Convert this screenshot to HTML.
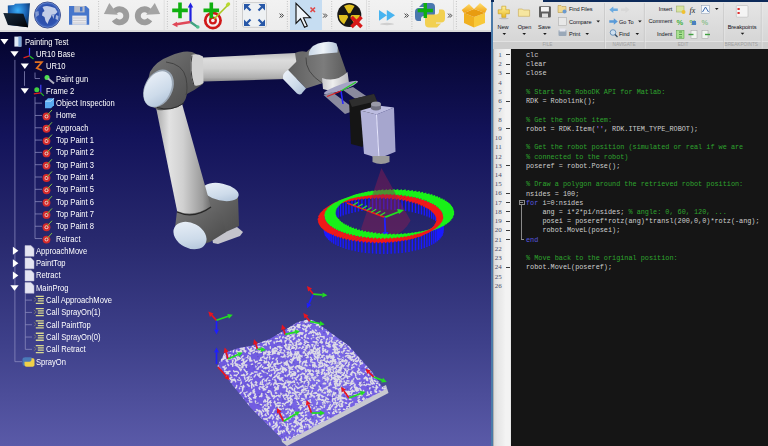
<!DOCTYPE html>
<html><head><meta charset="utf-8">
<style>
*{margin:0;padding:0;box-sizing:border-box}
html,body{width:768px;height:446px;overflow:hidden;background:#0a0a3c;font-family:"Liberation Sans",sans-serif;position:relative}
.abs{position:absolute}
#tb{left:0;top:0;width:491px;height:32px;background:#efefef}
#vp{left:0;top:32px;width:491px;height:414px;background:linear-gradient(#04042e 0%,#13135a 25%,#28296e 50%,#3e408a 75%,#5a5aa8 100%)}
.row{position:absolute;height:12px;line-height:12px;white-space:nowrap;color:#fff;font-size:9px;transform:scaleX(0.845);transform-origin:0 50%}
#ml{left:491px;top:0;width:277px;height:446px}
#mlstrip{left:5px;top:1.5px;width:275px;height:39px;background:linear-gradient(#ececec,#dadada)}
#gut{left:1.5px;top:48.8px;width:18.5px;height:398px;background:linear-gradient(90deg,#9a9a9a,#dcdcdc 8%,#e6e6e6 25%,#ececec 50%,#f3f3f3 70%,#f3f3f3 94%,#e0e0e0)}
#code{left:35px;top:51px;font-family:"Liberation Mono",monospace;font-size:6.83px;color:#cfcfcf;white-space:pre;line-height:9.236px}
.num{position:absolute;left:1.3px;width:9.5px;text-align:right;font-family:"Liberation Serif",serif;font-size:7px;line-height:10px;color:#4a4a66}
.c{color:#2ea42e}
.k{color:#5858e0}
.s{color:#c080ff}
</style></head><body>
<div class="abs" style="left:0;top:0;width:491px;height:32px;background:linear-gradient(#f2f2f2,#ececec)"></div><div class="abs" style="left:0;top:30px;width:491px;height:2px;background:#dcdcdc"></div><svg class="abs" style="left:0;top:0" width="491" height="32"><defs><radialGradient id="fb" cx="0.45" cy="0.3" r="0.8"><stop offset="0" stop-color="#3ab0f8"/><stop offset="0.5" stop-color="#1a60b0"/><stop offset="1" stop-color="#061830"/></radialGradient><linearGradient id="ff" x1="0" y1="0" x2="1" y2="1"><stop offset="0" stop-color="#1a2a3a"/><stop offset="0.6" stop-color="#0a1420"/><stop offset="1" stop-color="#000"/></linearGradient><radialGradient id="gl" cx="0.5" cy="0.5" r="0.55"><stop offset="0" stop-color="#2a4aa0"/><stop offset="0.7" stop-color="#2e52b0"/><stop offset="1" stop-color="#5a80d0"/></radialGradient><linearGradient id="gy" x1="0" y1="0" x2="0" y2="1"><stop offset="0" stop-color="#c8c8c8"/><stop offset="1" stop-color="#8a8a8a"/></linearGradient><linearGradient id="yb" x1="0" y1="0" x2="0" y2="1"><stop offset="0" stop-color="#ffe070"/><stop offset="1" stop-color="#f0a010"/></linearGradient></defs><path d="M98.6 1V29" stroke="#b8b8b8" stroke-width="0.8" stroke-dasharray="1 1.5"/><path d="M167.4 1V29" stroke="#b8b8b8" stroke-width="0.8" stroke-dasharray="1 1.5"/><path d="M236.3 1V29" stroke="#b8b8b8" stroke-width="0.8" stroke-dasharray="1 1.5"/><path d="M287.4 1V29" stroke="#b8b8b8" stroke-width="0.8" stroke-dasharray="1 1.5"/><path d="M331.7 1V29" stroke="#b8b8b8" stroke-width="0.8" stroke-dasharray="1 1.5"/><path d="M369 1V29" stroke="#b8b8b8" stroke-width="0.8" stroke-dasharray="1 1.5"/><path d="M411.9 1V29" stroke="#b8b8b8" stroke-width="0.8" stroke-dasharray="1 1.5"/><path d="M456.4 1V29" stroke="#b8b8b8" stroke-width="0.8" stroke-dasharray="1 1.5"/><path d="M164.2 0V30" stroke="#dadada" stroke-width="0.8"/><path d="M233.7 0V30" stroke="#dadada" stroke-width="0.8"/><path d="M366.5 0V30" stroke="#dadada" stroke-width="0.8"/><path d="M453.5 0V30" stroke="#dadada" stroke-width="0.8"/><path d="M7.8 5.5 L14 5 L15 3.8 L30 3.3 L28 27.3 L8 25 Z" fill="url(#fb)"/><path d="M3.3 13 L23.4 13.7 L28 27.3 L7.8 24.7 Z" fill="url(#ff)"/><circle cx="47.5" cy="15" r="13" fill="url(#gl)" stroke="#1a2a70" stroke-width="0.8"/><path d="M42.5 7 Q46 5.5 50 6.5 L55 8 L57.5 12 L55 14.5 L52 14 L51 17 L49 20 L47.5 24 L45.5 21 L44.5 17 L42 15.5 L42.5 12.5 L44.5 11 Z" fill="#d4dcee" opacity="0.9"/><path d="M51.5 14 L54.5 14.5 L53.5 19 Z M56 15 L58.5 16 L58 20 L55.5 19 Z" fill="#c8d2ea" opacity="0.8"/><path d="M35.5 12 L38.5 11 L39 15 L36 17 Z" fill="#b8c4e4" opacity="0.6"/><circle cx="47.5" cy="15" r="12.4" fill="none" stroke="#8aa8e0" stroke-width="0.8" opacity="0.6"/><path d="M69 6 L86 6 L89.2 9 L89.2 24.7 L69 24.7 Z" fill="#4676cc"/><rect x="74.2" y="6" width="10.4" height="6.4" fill="#b8bcc8"/><rect x="80" y="7" width="2.5" height="4.4" fill="#4676cc"/><rect x="72.3" y="15.6" width="14.3" height="9.1" fill="#e8e8ec"/><path d="M73 18h13M73 20.5h13M73 23h13" stroke="#c0c0c8" stroke-width="0.7"/><g id="undo"><path d="M114.64 11.56 A6.6 6.6 0 1 1 114.29 19.59" stroke="#9c9c9c" stroke-width="5.9" fill="none"/><path d="M103.9 14 L109.3 2.9 L117.9 14.7 Z" fill="#a4a4a4"/></g><use href="#undo" transform="translate(264.1 0) scale(-1 1)"/><path d="M180 2.6V18.2M172.2 10.4H187.8" stroke="#10b010" stroke-width="3.6"/><path d="M190.5 22 V5" stroke="#2020e0" stroke-width="2.2"/><path d="M190.5 2.4 L187.8 7.5 L193.2 7.5Z" fill="#2020e0"/><path d="M190.5 22 L175 24.5" stroke="#e04858" stroke-width="2.4"/><path d="M172 24.6 L177 21.8 L177.5 27.2Z" fill="#e04858"/><path d="M190.5 22 L197.5 27" stroke="#40a080" stroke-width="2.2"/><circle cx="197.8" cy="27" r="1.8" fill="#50c090"/><circle cx="212.9" cy="20.5" r="9" fill="#d01818"/><circle cx="212.9" cy="20.5" r="6.3" fill="#f4f0f0"/><circle cx="212.9" cy="20.5" r="4" fill="#d01818"/><circle cx="212.9" cy="20.5" r="1.8" fill="#f4f0f0"/><path d="M211.3 2.6V18.2M203.5 10.4H219.1" stroke="#10b010" stroke-width="3.6"/><path d="M214 19 L228 5" stroke="#a8c820" stroke-width="1.6"/><ellipse cx="228" cy="4.5" rx="2.5" ry="1.8" transform="rotate(-45 228 4.5)" fill="#b8d830"/><rect x="242.5" y="2.6" width="24" height="24.7" rx="2" fill="#eef1f3" stroke="#c4c4c4" stroke-width="0.8"/><path d="M244 4 h6.5 l-6.5 6.5Z M265 4 h-6.5 l6.5 6.5Z M244 26 h6.5 l-6.5 -6.5Z M265 26 h-6.5 l6.5 -6.5Z" fill="#2858a8"/><path d="M245.5 5.5 L250.5 10.5 M263.5 5.5 L258.5 10.5 M245.5 24.5 L250.5 19.5 M263.5 24.5 L258.5 19.5" stroke="#2858a8" stroke-width="2.2"/><path d="M279.6 13.6 l1.8 2 l-1.8 2 M281.6 13.6 l1.8 2 l-1.8 2" stroke="#303030" stroke-width="0.9" fill="none"/><path d="M323.2 13.6 l1.8 2 l-1.8 2 M325.2 13.6 l1.8 2 l-1.8 2" stroke="#303030" stroke-width="0.9" fill="none"/><path d="M404.6 13.6 l1.8 2 l-1.8 2 M406.6 13.6 l1.8 2 l-1.8 2" stroke="#303030" stroke-width="0.9" fill="none"/><path d="M448 13.6 l1.8 2 l-1.8 2 M450 13.6 l1.8 2 l-1.8 2" stroke="#303030" stroke-width="0.9" fill="none"/><rect x="290" y="0" width="32" height="30" fill="#c6ddf2"/><path d="M296 3.3 L296 23.4 L300.5 18.8 L304.5 27.3 L307.3 26 L303.5 17.8 L310.5 17.8 Z" fill="#eef4fa" stroke="#101010" stroke-width="1.1"/><path d="M310.5 7.5 L315 12 M315 7.5 L310.5 12" stroke="#e04848" stroke-width="1.6"/><circle cx="349.3" cy="15.1" r="12" fill="#161616"/><path d="M348.20 13.19 L344.05 6.01 A10.5 10.5 0 0 1 354.55 6.01 L350.40 13.19 Z M348.20 17.01 L344.05 24.19 A10.5 10.5 0 0 1 338.80 15.10 L347.10 15.10 Z M351.50 15.10 L359.80 15.10 A10.5 10.5 0 0 1 354.55 24.19 L350.40 17.01 Z " fill="#e0c020"/><path d="M351.5 17 L361.5 27 M361.5 17 L351.5 27" stroke="#d81818" stroke-width="3.6"/><path d="M379 9.9 L386.8 15.3 L379 20.8Z M386.8 9.9 L395 15.3 L386.8 20.8Z" fill="#48b4f0"/><ellipse cx="387" cy="24" rx="7" ry="1.2" fill="#cfcfcf"/><path d="M423 3 h8 q4 0 4 4 v6 q0 3 -3 3 h-8 q-3 0 -3 3 v2 h-3 q-3 0 -3 -4 v-5 q0 -4 4 -4 h5 v-1 h-5 Z" fill="#4a78b0"/><path d="M437 27.5 h-8 q-4 0 -4 -4 v-6 q0 -3 3 -3 h8 q3 0 3 -3 v-2 h3 q3 0 3 4 v5 q0 4 -4 4 h-5 v1 h5 Z" fill="#f2d050"/><path d="M425.3 2.9V18.1M417.7 10.5H432.9" stroke="#10b010" stroke-width="3.4"/><path d="M464 13 L474 17 L474 27.5 L464 23 Z" fill="#f0b020"/><path d="M474 17 L485 13 L485 23 L474 27.5 Z" fill="#f8c838"/><path d="M464 13 L474 9 L485 13 L474 17 Z" fill="#e89c10"/><path d="M464 13 L461.7 10 L469 4 L474 9 Z M485 13 L487 9 L480 3 L474 9 Z" fill="url(#yb)"/></svg>
<div id="vp" class="abs"></div>
<svg class="abs" style="left:0;top:0" width="491" height="446" viewBox="0 0 491 446">
<defs>
<linearGradient id="tubeH" x1="0" y1="0" x2="0" y2="1">
 <stop offset="0" stop-color="#bcbcbc"/><stop offset="0.25" stop-color="#dcdcdc"/><stop offset="0.55" stop-color="#d0d0d0"/><stop offset="0.85" stop-color="#b0b0b0"/><stop offset="1" stop-color="#8a8a8a"/>
</linearGradient>
<linearGradient id="tubeV" x1="0" y1="0" x2="1" y2="0">
 <stop offset="0" stop-color="#a6a6a6"/><stop offset="0.25" stop-color="#e2e2e2"/><stop offset="0.5" stop-color="#d0d0d0"/><stop offset="0.85" stop-color="#9a9a9a"/><stop offset="1" stop-color="#6c6c6c"/>
</linearGradient>
<linearGradient id="dark" x1="0" y1="0" x2="1" y2="1">
 <stop offset="0" stop-color="#7a7a7a"/><stop offset="0.5" stop-color="#606060"/><stop offset="1" stop-color="#484848"/>
</linearGradient>
<linearGradient id="cap" x1="0" y1="0" x2="1" y2="1">
 <stop offset="0" stop-color="#eef3fa"/><stop offset="0.6" stop-color="#cddbea"/><stop offset="1" stop-color="#a9bdd4"/>
</linearGradient>
<linearGradient id="w1" x1="0" y1="0" x2="0.3" y2="1"><stop offset="0" stop-color="#7a7a7a"/><stop offset="0.5" stop-color="#666"/><stop offset="1" stop-color="#4a4a4a"/></linearGradient>
<linearGradient id="w2" x1="0" y1="0" x2="1" y2="0"><stop offset="0" stop-color="#5e5e5e"/><stop offset="0.6" stop-color="#7c7c7c"/><stop offset="1" stop-color="#5a5a5a"/></linearGradient>
<linearGradient id="cap2" x1="0" y1="0" x2="1" y2="0"><stop offset="0" stop-color="#c8d6e6"/><stop offset="0.5" stop-color="#eef3f8"/><stop offset="1" stop-color="#b4c4d8"/></linearGradient>
<linearGradient id="fl" x1="0" y1="0" x2="1" y2="0"><stop offset="0" stop-color="#c8c8cc"/><stop offset="0.4" stop-color="#eeeeee"/><stop offset="1" stop-color="#b8b8bc"/></linearGradient>
<linearGradient id="boxL" x1="0" y1="0" x2="1" y2="0">
 <stop offset="0" stop-color="#b8b8dc"/><stop offset="1" stop-color="#d0d0ec"/>
</linearGradient>
<linearGradient id="cone" x1="0" y1="0" x2="0" y2="1">
 <stop offset="0" stop-color="#7a2a5a" stop-opacity="0.9"/><stop offset="1" stop-color="#6a2a6a" stop-opacity="0.6"/>
</linearGradient>
</defs><path d="M204 193 L238 197 L239 226 L225 233 L212 240 L200 243 L186 236 Z" fill="url(#dark)"/><path d="M212 238 L237 227 L243 232 L240 236 L218 244 L213 243 Z" fill="#c4c4cc"/><ellipse cx="221" cy="192" rx="18" ry="8.5" transform="rotate(12 221 192)" fill="url(#cap)"/><path d="M155.3 104 L182.1 104 L211 207 Q194 219 177.3 212 Z" fill="url(#tubeV)"/><path d="M177 211 Q194 218 211 206 L222 214 L226 232 L210 242 L196 246 L175 228 Z" fill="url(#dark)"/><path d="M177 212 Q194 219.5 211 207" stroke="#262626" stroke-width="1.3" fill="none"/><ellipse cx="190" cy="235.5" rx="17.5" ry="12.5" transform="rotate(28 190 235.5)" fill="url(#cap)"/><path d="M193 58 L301 52.8 L301 78.5 L195 81.8 Z" fill="url(#tubeH)"/><path d="M150 72 Q156 61 170 56 Q183 50 192 52 Q198 54 201 60 L203 84 Q195 90 187 94 Q185 104 178 107 Q168 111 158 110 Q147 104 145 92 Z" fill="url(#dark)"/><path d="M166 62 Q183 64 186 78 Q188 90 186 95" stroke="#3e3e3e" stroke-width="0.9" fill="none"/><path d="M191.5 55 Q197 53 203 56.5 L203.5 83 Q198 87 193.5 85 Q188.5 70 191.5 55 Z" fill="#d2d2d2"/><path d="M192 55.5 Q189 70 194 85.5" stroke="#3a3a3a" stroke-width="1" fill="none"/><path d="M157 107.5 Q171 112 184 103" stroke="#2a2a2a" stroke-width="1" fill="none"/><ellipse cx="158.5" cy="88.5" rx="14" ry="20" transform="rotate(27 158.5 88.5)" fill="#9aa6b4"/><ellipse cx="157.8" cy="89" rx="12.6" ry="18.8" transform="rotate(27 157.8 89)" fill="url(#cap)"/><path d="M295 53 Q301 50 307 52 L307 66 L297 66 Z" fill="#6a6a6a"/><path d="M288 70 L300 58 L308.5 50 Q322 39 337.5 46.5 L347.5 75 Q337 85 323 83 L306 88.5 Z" fill="url(#w2)"/><path d="M306 57.5 Q305 72 322 83" stroke="#3c3c3c" stroke-width="0.8" fill="none"/><path d="M288 70 Q282 73 283 79 L297 93.5 Q301 96 302.5 92.5 L306 88.5 Z" fill="url(#cap)"/><path d="M308.7 55.5 Q308.5 47 318 43.5 Q330 40 336.5 43.5 Q338.5 48 337.5 52.5 Q322 53.5 308.7 55.5 Z" fill="url(#cap2)"/><path d="M322 78 Q336 83 347.5 72 L349 83 Q338 94 323 89 Z" fill="url(#fl)"/><ellipse cx="341" cy="87.5" rx="18" ry="3" transform="rotate(-20 341 87.5)" fill="#a4a4c4"/><path d="M323.5 95 L332 92 L356 110 L345 114 Z M343 90 L353 87 L372 100 L364 105 Z" fill="#8a8a9e"/><path d="M341 91 L356 82" stroke="#20d020" stroke-width="1.3"/><path d="M341 91 L343 104" stroke="#2828ff" stroke-width="1.6"/><path d="M341 91 L327 96.5" stroke="#e02020" stroke-width="1.3"/><path d="M349 100 L374 94 L377 101 L362.5 147 L351 144 Z" fill="#151515"/><path d="M349 100 L374 94 L377 101 L352 107 Z" fill="#2e2e2e"/><path d="M360.5 110.5 L376.5 114.5 L379 158.5 L364 153.7 Z" fill="#b2b2d8"/><path d="M376.5 114.5 L394 107.5 L395.5 151.7 L379 158.5 Z" fill="#a6a6ce"/><path d="M360.5 110.5 L378 105.5 L394 107.5 L376.5 114.5 Z" fill="#bcbce0"/><path d="M376.5 114.5 L379 158.5" stroke="#e8e8ff" stroke-width="1"/><path d="M371 104 L371 109 Q376 112 381 109 L381 104 Z" fill="#707080"/><ellipse cx="376" cy="104" rx="5" ry="2.5" fill="#9a9aa8"/><path d="M372.5 156 L372.5 162 Q381 166 389.5 162 L389.5 156 Z" fill="#9a9a9a"/></svg><svg class="abs" style="left:0;top:0" width="491" height="446"><path d="M324.6 214.9l0 15.5M325.0 213.5l0 15.5M325.5 212.1l0 15.5M326.4 210.7l0 15.5M327.4 209.4l0 15.5M328.7 208.1l0 15.5M330.1 206.8l0 15.5M331.8 205.5l0 15.5M333.7 204.3l0 15.5M335.8 203.2l0 15.5M338.1 202.1l0 15.5M340.6 201.0l0 15.5M343.2 200.0l0 15.5M346.0 199.1l0 15.5M348.9 198.2l0 15.5M352.0 197.5l0 15.5M355.2 196.8l0 15.5M358.5 196.1l0 15.5M361.9 195.6l0 15.5M365.4 195.1l0 15.5M369.0 194.7l0 15.5M372.6 194.4l0 15.5M376.3 194.2l0 15.5M380.0 194.0l0 15.5M383.8 194.0l0 15.5M387.5 194.0l0 15.5M391.2 194.2l0 15.5M394.9 194.4l0 15.5M398.5 194.7l0 15.5M402.1 195.1l0 15.5M405.6 195.6l0 15.5M409.0 196.1l0 15.5M412.3 196.8l0 15.5M415.5 197.5l0 15.5M418.6 198.2l0 15.5M421.5 199.1l0 15.5M424.3 200.0l0 15.5M426.9 201.0l0 15.5M429.4 202.1l0 15.5M431.7 203.2l0 15.5M433.8 204.3l0 15.5M435.7 205.5l0 15.5M437.4 206.8l0 15.5M438.8 208.1l0 15.5M440.1 209.4l0 15.5M441.1 210.7l0 15.5M442.0 212.1l0 15.5M442.5 213.5l0 15.5M442.9 214.9l0 15.5" stroke="#1a1aff" stroke-width="1.4"/><path d="M324.6 214.9l-6.5 4M325.0 213.5l-6.5 4M325.5 212.1l-6.5 4M326.4 210.7l-6.5 4M327.4 209.4l-6.5 4M328.7 208.1l-6.5 4M330.1 206.8l-6.5 4M331.8 205.5l-6.5 4M333.7 204.3l-6.5 4M335.8 203.2l-6.5 4M338.1 202.1l-6.5 4M340.6 201.0l-6.5 4M343.2 200.0l-6.5 4M346.0 199.1l-6.5 4M348.9 198.2l-6.5 4M352.0 197.5l-6.5 4M355.2 196.8l-6.5 4M358.5 196.1l-6.5 4M361.9 195.6l-6.5 4M365.4 195.1l-6.5 4M369.0 194.7l-6.5 4M372.6 194.4l-6.5 4M376.3 194.2l-6.5 4M380.0 194.0l-6.5 4M383.8 194.0l-6.5 4M387.5 194.0l-6.5 4M391.2 194.2l-6.5 4M394.9 194.4l-6.5 4M398.5 194.7l-6.5 4M402.1 195.1l-6.5 4M405.6 195.6l-6.5 4M409.0 196.1l-6.5 4M412.3 196.8l-6.5 4M415.5 197.5l-6.5 4M418.6 198.2l-6.5 4M421.5 199.1l-6.5 4M424.3 200.0l-6.5 4M426.9 201.0l-6.5 4M429.4 202.1l-6.5 4M431.7 203.2l-6.5 4M433.8 204.3l-6.5 4M435.7 205.5l-6.5 4M437.4 206.8l-6.5 4M438.8 208.1l-6.5 4M440.1 209.4l-6.5 4M441.1 210.7l-6.5 4M442.0 212.1l-6.5 4M442.5 213.5l-6.5 4M442.9 214.9l-6.5 4" stroke="#f01818" stroke-width="2.2"/><path d="M324.6 214.9l11 -4M325.0 213.5l11 -4M325.5 212.1l11 -4M326.4 210.7l11 -4M327.4 209.4l11 -4M328.7 208.1l11 -4M330.1 206.8l11 -4M331.8 205.5l11 -4M333.7 204.3l11 -4M335.8 203.2l11 -4M338.1 202.1l11 -4M340.6 201.0l11 -4M343.2 200.0l11 -4M346.0 199.1l11 -4M348.9 198.2l11 -4M352.0 197.5l11 -4M355.2 196.8l11 -4M358.5 196.1l11 -4M361.9 195.6l11 -4M365.4 195.1l11 -4M369.0 194.7l11 -4M372.6 194.4l11 -4M376.3 194.2l11 -4M380.0 194.0l11 -4M383.8 194.0l11 -4M387.5 194.0l11 -4M391.2 194.2l11 -4M394.9 194.4l11 -4M398.5 194.7l11 -4M402.1 195.1l11 -4M405.6 195.6l11 -4M409.0 196.1l11 -4M412.3 196.8l11 -4M415.5 197.5l11 -4M418.6 198.2l11 -4M421.5 199.1l11 -4M424.3 200.0l11 -4M426.9 201.0l11 -4M429.4 202.1l11 -4M431.7 203.2l11 -4M433.8 204.3l11 -4M435.7 205.5l11 -4M437.4 206.8l11 -4M438.8 208.1l11 -4M440.1 209.4l11 -4M441.1 210.7l11 -4M442.0 212.1l11 -4M442.5 213.5l11 -4M442.9 214.9l11 -4" stroke="#18f018" stroke-width="2.2"/><path d="M381.4 168 L361 229 Q372 242 390 238 Q405 232 410.6 220.5 Z" fill="#901c50" opacity="0.45"/><path d="M384.7 217.3 L347 203" stroke="#f01818" stroke-width="1.6"/><path d="M380.2 215.6l5 -3M375.7 213.9l5 -3M371.1 212.2l5 -3M366.6 210.4l5 -3M362.1 208.7l5 -3M357.6 207.0l5 -3M353.0 205.3l5 -3" stroke="#30e030" stroke-width="1.2"/><path d="M384.7 217.3 L401 211" stroke="#20e020" stroke-width="1.8"/><path d="M404 210 L397 209 L399 214 Z" fill="#20e020"/><path d="M384.7 217.3 L385.5 236" stroke="#2020ff" stroke-width="1.8"/><path d="M385.7 239 L382.5 232 L388.5 232 Z" fill="#2020ff"/><path d="M443.0 216.2l0 15.5M442.9 217.6l0 15.5M442.5 219.0l0 15.5M442.0 220.4l0 15.5M441.1 221.8l0 15.5M440.1 223.1l0 15.5M438.8 224.4l0 15.5M437.4 225.7l0 15.5M435.7 227.0l0 15.5M433.8 228.2l0 15.5M431.7 229.3l0 15.5M429.4 230.4l0 15.5M426.9 231.5l0 15.5M424.3 232.5l0 15.5M421.5 233.4l0 15.5M418.6 234.3l0 15.5M415.5 235.0l0 15.5M412.3 235.7l0 15.5M409.0 236.4l0 15.5M405.6 236.9l0 15.5M402.1 237.4l0 15.5M398.5 237.8l0 15.5M394.9 238.1l0 15.5M391.2 238.3l0 15.5M387.5 238.5l0 15.5M383.8 238.5l0 15.5M380.0 238.5l0 15.5M376.3 238.3l0 15.5M372.6 238.1l0 15.5M369.0 237.8l0 15.5M365.4 237.4l0 15.5M361.9 236.9l0 15.5M358.5 236.4l0 15.5M355.2 235.7l0 15.5M352.0 235.0l0 15.5M348.9 234.3l0 15.5M346.0 233.4l0 15.5M343.2 232.5l0 15.5M340.6 231.5l0 15.5M338.1 230.4l0 15.5M335.8 229.3l0 15.5M333.7 228.2l0 15.5M331.8 227.0l0 15.5M330.1 225.7l0 15.5M328.7 224.4l0 15.5M327.4 223.1l0 15.5M326.4 221.8l0 15.5M325.5 220.4l0 15.5M325.0 219.0l0 15.5M324.6 217.6l0 15.5M324.5 216.2l0 15.5" stroke="#1a1aff" stroke-width="1.4"/><path d="M443.0 216.2l11 -4M442.9 217.6l11 -4M442.5 219.0l11 -4M442.0 220.4l11 -4M441.1 221.8l11 -4M440.1 223.1l11 -4M438.8 224.4l11 -4M437.4 225.7l11 -4M435.7 227.0l11 -4M433.8 228.2l11 -4M431.7 229.3l11 -4M429.4 230.4l11 -4M426.9 231.5l11 -4M424.3 232.5l11 -4M421.5 233.4l11 -4M418.6 234.3l11 -4M415.5 235.0l11 -4M412.3 235.7l11 -4M409.0 236.4l11 -4M405.6 236.9l11 -4M402.1 237.4l11 -4M398.5 237.8l11 -4M394.9 238.1l11 -4M391.2 238.3l11 -4M387.5 238.5l11 -4M383.8 238.5l11 -4M380.0 238.5l11 -4M376.3 238.3l11 -4M372.6 238.1l11 -4M369.0 237.8l11 -4M365.4 237.4l11 -4M361.9 236.9l11 -4M358.5 236.4l11 -4M355.2 235.7l11 -4M352.0 235.0l11 -4M348.9 234.3l11 -4M346.0 233.4l11 -4M343.2 232.5l11 -4M340.6 231.5l11 -4M338.1 230.4l11 -4M335.8 229.3l11 -4M333.7 228.2l11 -4M331.8 227.0l11 -4M330.1 225.7l11 -4M328.7 224.4l11 -4M327.4 223.1l11 -4M326.4 221.8l11 -4M325.5 220.4l11 -4M325.0 219.0l11 -4M324.6 217.6l11 -4M324.5 216.2l11 -4" stroke="#18f018" stroke-width="2.2"/><path d="M443.0 216.2l-6.5 4M442.9 217.6l-6.5 4M442.5 219.0l-6.5 4M442.0 220.4l-6.5 4M441.1 221.8l-6.5 4M440.1 223.1l-6.5 4M438.8 224.4l-6.5 4M437.4 225.7l-6.5 4M435.7 227.0l-6.5 4M433.8 228.2l-6.5 4M431.7 229.3l-6.5 4M429.4 230.4l-6.5 4M426.9 231.5l-6.5 4M424.3 232.5l-6.5 4M421.5 233.4l-6.5 4M418.6 234.3l-6.5 4M415.5 235.0l-6.5 4M412.3 235.7l-6.5 4M409.0 236.4l-6.5 4M405.6 236.9l-6.5 4M402.1 237.4l-6.5 4M398.5 237.8l-6.5 4M394.9 238.1l-6.5 4M391.2 238.3l-6.5 4M387.5 238.5l-6.5 4M383.8 238.5l-6.5 4M380.0 238.5l-6.5 4M376.3 238.3l-6.5 4M372.6 238.1l-6.5 4M369.0 237.8l-6.5 4M365.4 237.4l-6.5 4M361.9 236.9l-6.5 4M358.5 236.4l-6.5 4M355.2 235.7l-6.5 4M352.0 235.0l-6.5 4M348.9 234.3l-6.5 4M346.0 233.4l-6.5 4M343.2 232.5l-6.5 4M340.6 231.5l-6.5 4M338.1 230.4l-6.5 4M335.8 229.3l-6.5 4M333.7 228.2l-6.5 4M331.8 227.0l-6.5 4M330.1 225.7l-6.5 4M328.7 224.4l-6.5 4M327.4 223.1l-6.5 4M326.4 221.8l-6.5 4M325.5 220.4l-6.5 4M325.0 219.0l-6.5 4M324.6 217.6l-6.5 4M324.5 216.2l-6.5 4" stroke="#f01818" stroke-width="2.2"/></svg><svg class="abs" style="left:0;top:0" width="491" height="446"><defs><linearGradient id="wp" x1="0" y1="0" x2="1" y2="0.2"><stop offset="0" stop-color="#6c56dc"/><stop offset="0.4" stop-color="#735ee2"/><stop offset="0.7" stop-color="#7a68e6"/><stop offset="1" stop-color="#735ee2"/></linearGradient><filter id="bl" x="-5%" y="-5%" width="110%" height="110%"><feGaussianBlur stdDeviation="0.55"/></filter><clipPath id="wpc"><path id="wpp" d="M217.4 366 L224.5 353 L237.9 348.3 L253 345.5 L270 338.8 L281.7 332 L297 322.6 L306.4 319.8 L313 320 L349 346 L372 372 L382 386.8 L386.8 388.4 L287 441 L283.6 440.8 L250.9 408 Z"/></clipPath></defs><path d="M281 437 L386 385 L388.5 393 L287 446 L282 442 Z" fill="#c8c8d0"/><use href="#wpp" fill="url(#wp)"/><g clip-path="url(#wpc)"><path d="M227.7 386.6l1.4 0.5M221.6 373.5l2.1 1.3M325.4 392.6l-0.9 -0.5M265.7 336.5l-0.5 1.4M233.0 391.1l0.8 0.6M376.6 364.3l0.6 1.4M227.8 383.5l-1.4 2.1M288.8 441.1l-1.9 -0.7M354.5 326.8l-0.1 1.0M388.8 423.2l-1.5 1.3M218.9 377.1l0.7 0.7M244.1 369.4l1.6 1.9M366.2 353.6l-1.6 1.9M382.6 337.3l0.2 1.5M217.1 424.4l-0.3 1.5M323.1 404.6l2.0 -1.5M284.7 368.4l-1.2 0.9M226.8 344.7l-0.5 0.8M381.1 396.6l0.7 2.4M241.0 350.3l-0.7 0.8M299.1 357.9l-0.0 -2.0M250.9 439.9l-0.4 -0.9M373.9 363.5l-1.9 -0.5M347.7 343.0l-1.2 0.9M248.9 395.5l0.7 -1.9M382.1 364.7l0.2 1.5M298.0 438.0l-1.0 -0.3M367.6 423.7l-0.0 2.0M302.7 415.8l-1.4 -0.4M359.7 430.4l0.6 0.8M350.8 337.2l-0.7 -0.7M312.4 359.7l-0.9 -0.3M369.6 325.3l1.0 0.3M380.1 425.5l1.8 1.7M270.3 403.9l0.5 1.9M352.2 432.8l-0.4 -2.0M274.3 343.1l-0.2 -1.0M282.3 384.2l1.0 -0.2M233.3 352.0l0.4 -2.0M308.9 383.9l-0.9 1.8M256.7 332.0l1.4 0.5M386.2 383.8l-2.4 0.8M384.8 357.4l0.2 1.5M285.8 362.5l0.7 0.7M336.2 323.8l-0.1 1.0M269.2 363.6l-1.8 1.7M263.8 402.0l0.2 -1.0M222.3 320.9l0.2 1.5M336.3 347.4l1.3 1.5M256.1 414.8l-1.5 -2.0M301.4 367.0l-0.4 -0.9M323.0 400.3l1.2 1.6M385.2 330.7l-2.0 0.1M296.3 377.7l1.2 -0.9M375.4 437.1l1.7 1.1M293.9 356.6l-1.1 1.7M236.2 360.4l-1.3 2.1M372.8 355.1l-0.8 0.6M278.1 372.8l1.0 0.3M286.9 396.7l1.7 -1.8M223.6 436.6l-2.0 0.3M329.2 370.0l-2.5 0.3M236.0 400.3l-2.5 -0.0M311.3 376.0l0.1 -2.5M239.4 342.6l-0.5 0.8M282.0 413.5l-0.1 1.0M302.2 391.5l-0.6 -1.4M328.0 373.3l0.4 -0.9M307.4 377.9l0.3 -1.5M221.9 418.1l1.8 -1.0M291.6 415.8l-0.5 1.4M298.2 348.1l1.9 -0.5M328.3 328.4l-1.8 0.9M254.7 322.4l-2.2 1.2M269.6 423.0l0.4 2.0M287.7 408.9l-1.9 0.6M281.3 365.9l0.5 0.9M228.7 328.3l1.1 -1.0M281.5 416.4l0.3 -0.9M223.6 378.6l1.3 -0.7M325.5 349.7l-2.1 1.4M270.4 353.3l0.0 -1.0M321.3 360.0l-0.6 0.8M304.6 368.1l-0.8 0.5M299.3 387.7l-0.9 0.4M387.9 351.9l2.1 1.4M388.0 442.4l1.7 1.9M363.2 403.0l1.1 -1.7M263.9 352.3l-0.2 2.5M258.3 349.4l1.1 -1.0M329.3 444.8l-1.5 0.2M362.1 435.0l-0.3 1.0M339.2 362.8l-0.5 0.8M329.0 344.0l-0.9 1.8M247.4 358.0l0.7 -2.4M226.1 331.0l-1.0 -0.3M329.3 368.9l2.0 -0.1M369.6 371.0l0.2 -2.0M327.8 368.0l2.3 -0.9M327.1 434.5l-1.4 -1.4M344.0 340.0l0.8 1.3M355.8 441.8l0.7 0.7M385.7 379.8l2.2 -1.1M323.7 396.7l-1.5 0.3M222.3 438.1l-1.0 1.2M221.7 425.3l-1.6 -1.2M328.6 357.5l-1.5 1.3M293.2 374.1l-1.8 -1.7M285.1 326.6l-1.7 1.9M303.3 402.1l1.4 1.5M351.1 383.5l-2.5 -0.1M329.2 418.4l0.9 0.4M382.4 435.3l0.4 -1.5M242.8 432.8l0.6 -1.4M318.6 396.8l-1.0 1.1M333.9 432.6l0.2 -1.0M335.5 432.7l-2.4 -0.6M344.1 365.5l-1.0 1.1M278.0 415.9l0.4 0.9M266.9 384.1l2.0 -0.4M343.3 413.6l-0.6 2.4M288.1 364.6l-1.0 0.1M218.9 318.3l1.6 1.2M308.5 370.9l1.3 1.5M324.2 378.8l1.4 -0.6M338.8 375.7l1.2 1.6M285.3 351.8l-1.2 -1.6M305.6 381.1l1.0 0.0M308.0 370.0l0.9 0.4M245.6 357.6l2.4 0.7M294.2 346.9l0.1 1.0M380.0 351.7l-1.6 -1.9M229.9 383.0l1.2 -0.8M380.3 413.5l1.5 -1.4M308.9 378.4l1.0 0.0M228.6 434.6l1.0 0.2M337.6 322.0l-0.6 -0.8M337.0 412.3l-1.7 -1.1M339.5 367.1l0.3 1.0M265.3 330.8l0.1 -1.5M266.5 361.1l-1.2 1.6M220.5 384.4l-1.0 0.2M230.9 422.9l1.5 0.0M265.5 414.1l-0.6 0.8M301.0 420.0l-2.0 0.1M313.2 331.4l2.1 1.4M328.0 365.6l-1.3 0.7M281.4 431.1l-1.0 0.2M276.0 359.8l1.1 -1.7M316.4 334.1l1.1 -1.0M243.8 402.2l0.9 1.2M249.3 399.7l0.7 2.4M266.8 320.8l-0.1 -1.0M269.8 398.4l-2.2 1.2M339.8 398.6l-2.2 1.2M373.9 331.6l0.3 1.5M286.8 439.3l-1.0 -2.3M322.5 399.6l-0.7 0.7M337.2 363.1l0.4 2.5M379.5 385.5l0.8 -2.4M227.1 420.2l-0.9 -1.2M356.0 420.3l-1.1 -1.6M373.5 418.4l0.5 -0.9M330.0 344.8l-0.3 1.0M316.2 427.3l-1.4 0.4M326.4 356.0l0.2 1.0M312.1 351.9l1.6 1.9M337.6 349.6l-0.8 -0.6M302.1 356.0l-0.9 0.4M389.8 421.5l-1.5 0.1M274.3 428.3l-1.5 0.2M264.7 361.8l1.9 0.7M303.2 352.8l2.5 -0.4M353.6 360.4l-0.3 1.0M370.0 387.8l-0.3 1.0M310.1 366.1l-0.5 -0.9M348.5 331.0l1.0 0.2M375.0 401.9l0.9 -1.8M313.4 351.0l-1.8 0.9M336.7 369.8l-0.6 -1.4M298.2 370.8l-0.9 -1.2M365.2 345.9l-2.0 0.3M295.6 437.3l1.0 -0.2M358.0 328.2l-0.2 -1.5M235.4 440.1l0.8 -2.4M352.3 390.6l1.9 0.7M367.2 410.9l1.2 1.6M317.3 443.0l-1.9 1.6M264.6 318.2l-0.9 0.5M341.4 443.7l2.3 0.9M296.4 344.4l0.0 -2.5M298.4 393.4l0.5 1.4M366.6 365.6l1.7 1.0M319.5 362.1l1.0 0.1M318.8 395.9l1.1 -1.7M250.2 341.1l1.9 0.6M388.6 346.4l-0.1 2.0M225.4 388.8l1.7 -1.0M387.4 325.1l0.0 -1.5M333.5 356.2l0.0 -1.0M297.4 365.6l-1.8 1.8M244.5 348.5l-0.4 -0.9M242.5 424.6l-1.5 -1.4M325.0 375.9l1.1 -2.2M235.2 364.9l-0.1 -1.5M339.9 388.8l1.4 -1.5M288.2 349.6l-1.8 -0.9M270.7 433.6l1.0 -0.1M313.0 424.9l0.1 -2.0M290.6 351.5l0.2 2.5M265.7 432.7l-0.3 -2.0M303.9 383.4l0.5 -1.9M253.2 391.1l0.6 1.4M339.5 343.2l2.1 1.3M348.2 340.4l-0.7 -1.3M317.0 343.9l-0.3 -2.5M384.5 327.1l0.1 2.0M372.2 355.3l-0.3 -2.5M218.6 441.8l0.4 0.9M296.2 348.5l-0.6 0.8M340.5 323.8l-2.0 0.1M309.8 347.1l-1.2 -2.2M379.1 367.8l0.5 -0.8M274.2 348.8l-1.8 0.8M357.6 426.5l-2.0 -0.2M278.8 385.9l-0.9 0.4M254.5 371.9l2.5 -0.0M261.5 404.8l-1.0 -0.3M323.7 350.1l-0.9 0.4M304.9 352.4l-1.5 -0.3M375.2 391.9l-0.2 -2.0M297.1 357.7l0.4 2.5M243.4 439.9l-0.9 1.8M264.8 444.4l0.2 -1.5M311.4 395.6l-1.4 -2.1M263.4 425.4l1.5 -2.0M338.1 370.9l-0.8 0.5M321.3 366.6l-1.9 0.5M363.7 381.9l0.8 1.8M355.5 373.8l0.2 2.0M374.4 319.4l-2.3 -1.0M267.5 386.7l-1.8 -1.7M306.9 330.7l-1.2 0.9M359.6 383.6l1.6 -1.2M288.7 338.0l-1.5 -0.1M341.5 406.5l1.0 0.0M375.5 368.9l1.0 0.1M233.7 330.8l-2.5 -0.4M322.3 421.2l2.0 0.2M240.2 348.5l1.0 0.2M365.4 439.3l0.9 2.3M348.7 323.6l0.1 1.5M301.7 439.6l-1.2 1.0M218.9 429.1l1.2 2.2M247.6 442.4l-0.9 -0.4M273.6 429.6l-0.6 -0.8M282.8 377.8l-1.8 0.8M331.2 361.7l-0.3 -1.0M257.0 365.1l-1.2 0.8M267.0 378.9l0.9 -1.2M285.7 383.3l0.0 -1.0M269.4 367.9l0.7 1.3M271.2 402.8l-1.9 -0.8M355.9 415.1l-0.2 -1.0M238.1 353.4l-0.9 -1.8M296.0 446.0l0.8 -0.6M343.5 409.2l1.5 0.4M290.4 414.9l-0.1 -2.0M334.2 322.8l0.3 -2.0M237.3 415.5l-0.6 -1.9M244.4 362.4l-1.0 -1.1M292.9 437.8l-0.5 1.4M317.8 348.8l1.8 1.7M360.5 332.7l-1.0 1.2M222.6 432.7l1.5 1.3M293.4 332.5l-2.0 0.4M265.7 389.4l-2.5 0.5M313.6 331.9l-1.4 0.6M352.2 359.2l1.7 1.1M259.0 349.5l2.5 0.4M361.9 355.9l-1.0 -1.1M232.9 410.0l-1.9 -1.7M247.3 423.6l-1.4 1.5M361.6 350.5l2.0 1.6M302.4 338.2l-0.9 -0.5M239.8 347.1l-1.6 -1.9M248.4 410.5l1.4 -2.1M240.1 327.2l-0.5 -1.9M245.8 410.8l2.0 0.1M314.3 378.0l-2.5 -0.3M321.6 356.0l2.4 -0.7M380.1 364.1l-1.9 0.7M254.6 391.3l-1.0 -0.1M248.5 378.8l-0.7 0.7M285.8 324.0l-0.4 -1.4M295.4 333.4l0.8 -0.5M375.6 429.5l-0.1 -2.0M355.7 412.2l-0.1 1.5M361.7 392.4l1.0 0.1M227.9 351.1l2.3 -1.0M361.3 393.3l2.0 -0.0M381.0 319.8l1.5 2.0M367.8 420.5l1.0 2.3M305.5 364.2l-0.6 1.4M318.1 323.6l-1.6 1.9M240.1 367.2l2.0 -0.1M325.8 399.2l-0.3 1.5M304.1 399.3l-2.4 -0.8M332.5 369.8l0.2 -1.5M384.0 327.4l1.3 -0.7M376.3 425.3l0.9 1.8M256.5 320.6l-1.9 0.6M366.2 401.0l-0.2 -1.5M368.2 361.7l0.4 0.9M327.0 436.1l-0.5 0.9M223.0 398.2l-2.5 0.1M260.0 377.3l1.8 -0.9M272.6 330.0l0.6 0.8M277.6 364.3l-0.6 -1.4M330.0 395.0l-0.1 -2.0M357.4 379.1l-1.5 -2.0M312.9 364.3l-0.3 2.0M254.9 414.8l1.5 0.3M236.4 387.5l0.3 -2.0M379.5 364.8l0.7 1.3M292.3 428.1l2.1 -1.3M233.9 411.9l-1.5 -2.0M333.0 362.9l-1.8 1.8M380.4 398.3l-0.0 2.0M339.1 349.0l-1.1 2.2M252.9 390.9l1.3 -1.5M382.0 335.5l0.8 0.5M300.0 432.0l-1.0 -2.3M364.0 412.1l0.4 -2.5M267.1 321.1l1.0 -0.2M331.4 368.8l1.2 -0.9M250.2 398.3l1.0 1.1M223.5 432.4l1.9 1.6M384.9 385.3l0.2 1.5M385.1 346.7l-0.3 -1.0M261.3 326.8l-2.5 -0.1M353.2 439.8l-0.5 0.9M340.6 369.1l-1.3 0.7M282.7 367.3l0.6 0.8M359.5 402.9l-0.7 -0.7M270.2 442.4l-0.1 -2.5M281.3 409.2l-2.0 -0.3M376.7 416.0l1.1 -1.7M306.4 379.0l1.3 1.6M371.5 429.1l-1.8 1.7M236.5 337.7l1.6 1.2M331.0 384.9l-1.0 -1.7M279.2 384.6l-1.4 1.5M306.9 381.2l1.4 1.4M323.1 365.6l-1.9 0.7M290.4 395.8l0.1 1.5M372.7 414.9l-2.1 -1.4M389.1 340.6l-1.2 0.9M344.6 369.4l-0.9 -1.8M349.6 416.5l0.2 1.0M363.4 345.6l0.7 -1.3M339.4 379.8l-0.9 -2.3M362.6 335.9l1.4 0.5M334.2 357.3l-1.8 1.7M364.9 350.9l1.9 0.6M239.7 437.1l-1.0 0.3M342.6 319.1l1.9 -0.6M250.7 344.0l0.6 -0.8M223.6 428.4l-1.2 -0.9M305.3 377.6l0.8 0.5M287.6 402.3l2.1 -1.4M222.3 425.0l0.2 2.0M338.7 410.1l-0.1 1.5M283.5 322.2l-1.0 -1.2M329.6 406.9l0.9 1.2M290.2 404.9l0.5 -0.9M374.8 343.7l-0.3 0.9M267.5 392.3l1.5 0.0M380.3 402.0l-1.2 2.2M299.2 360.2l1.5 1.3M345.7 332.5l-0.8 0.6M220.9 383.7l-0.9 -1.2M287.7 425.2l-0.2 -1.5M277.9 402.8l2.5 0.1M268.1 351.4l0.1 1.5M301.8 386.6l-1.5 0.3M314.5 323.4l1.9 -0.6M285.7 344.0l0.1 1.5M241.9 351.8l-0.8 0.6M266.1 432.0l-1.3 -0.7M358.4 423.1l-0.5 0.9M295.8 435.9l2.3 -0.9M240.9 383.5l0.4 -1.4M339.0 326.6l0.7 -0.7M346.5 399.5l-1.4 -1.4M332.7 413.4l0.9 -1.8M334.9 408.9l0.4 -2.0M359.5 370.0l-1.2 -1.6M286.9 356.3l-1.0 -0.3M266.1 329.3l-0.8 -2.4M286.3 386.9l0.2 1.0M280.7 432.8l-0.7 1.3M243.4 385.5l0.7 1.3M294.5 421.6l-0.6 0.8M272.9 352.1l-0.9 2.4M379.1 421.5l-1.4 -2.1M278.7 443.0l0.5 -0.9M221.1 359.6l1.9 -0.6M266.0 387.7l1.0 -0.1M355.9 404.6l1.9 -0.5M335.9 353.5l-0.9 -0.5M353.9 362.4l-1.0 -0.1M243.4 412.5l-0.4 0.9M278.0 406.8l1.9 -1.6M249.5 359.1l1.6 1.3M324.0 382.2l1.1 1.7M236.2 375.6l-2.0 -0.4M276.9 438.3l0.0 1.0M377.8 339.2l-0.2 -1.0M344.9 361.7l0.7 -1.9M366.4 409.2l-0.2 -2.5M332.1 433.4l-0.5 0.8M376.8 326.5l-1.3 -0.7M316.1 369.7l-0.2 1.5M338.2 396.4l1.8 0.8M321.3 433.7l-0.6 0.8M278.0 407.5l1.1 -1.7M318.3 394.2l-2.4 -0.6M253.1 419.6l0.5 -0.8M262.9 329.5l-1.9 1.6M355.7 441.1l1.0 -0.1M327.3 391.7l2.5 -0.5M248.4 396.8l0.8 1.3M228.4 432.9l0.3 -1.5M313.9 358.4l1.2 0.9M336.0 371.9l-0.2 -1.0M275.0 427.8l1.9 -1.7M298.3 423.2l1.6 1.3M303.9 344.8l1.5 0.2M291.4 411.7l0.9 -2.3M238.4 319.6l-2.1 -1.3M230.1 417.9l-0.9 -0.4M216.3 344.2l0.7 -0.7M318.5 334.2l-2.4 0.7M235.7 381.7l-0.5 -1.4M257.5 434.2l2.5 0.0M326.8 435.7l0.6 0.8M369.4 330.4l-2.0 -0.4M265.9 368.8l-0.0 -1.0M387.1 329.5l-0.7 1.9M349.5 318.9l1.1 1.0M306.0 376.3l-1.1 -1.0M290.4 430.4l2.3 -0.9M363.1 321.6l0.8 1.3M346.7 353.1l-0.9 0.5M274.6 387.6l0.4 -0.9M354.1 386.1l0.9 -1.8M289.4 361.1l1.8 1.7M230.7 345.2l0.8 -0.6M340.0 373.2l2.4 -0.8M264.8 368.0l1.0 -0.2M336.0 344.8l1.5 -0.3M268.2 326.2l2.0 0.2M365.7 377.0l0.7 2.4M355.5 403.9l1.5 0.1M330.8 357.9l2.4 0.7M329.1 390.9l0.9 0.4M277.2 387.4l-1.4 1.5M367.7 434.4l0.1 -1.0M254.2 342.8l-1.5 1.3M257.2 432.3l1.0 0.0M331.1 425.1l2.5 0.5M301.1 369.8l1.3 -0.7M289.5 325.8l-0.3 2.5M306.8 348.7l1.0 -1.1M380.6 418.5l0.7 -1.9M350.2 403.0l-1.6 1.9M372.8 328.5l2.4 0.6M385.7 425.4l-0.6 1.4M217.2 439.4l-2.5 0.4M248.7 378.2l0.4 -2.0M254.6 441.0l-1.7 1.1M298.1 388.1l-0.1 1.0M389.7 335.3l0.0 -1.5M224.0 435.1l2.0 0.2M227.3 414.4l0.6 0.8M329.3 383.6l0.1 2.0M372.3 441.2l1.8 0.9M259.7 348.3l-1.0 -0.1M279.9 408.7l-2.0 0.1M237.3 346.5l-0.1 1.0M328.1 378.1l-1.0 1.7M275.4 415.1l0.4 -0.9M235.5 398.6l-1.4 -0.5M249.4 416.1l-0.0 1.0M318.0 343.4l-2.0 -0.4M230.0 349.9l0.7 1.3M384.7 337.0l-2.0 -0.3M273.3 436.7l-0.1 1.0M324.2 407.2l0.5 -1.9M274.8 380.9l0.9 -0.4M266.7 320.1l2.2 1.1M231.5 393.0l-0.7 -2.4M353.5 347.6l-1.3 -2.1M233.9 399.1l-0.1 2.5M306.3 360.5l0.1 1.0M260.6 338.1l0.3 -2.0M284.4 384.9l0.3 -2.0M295.8 343.3l-2.0 -0.1M335.0 379.0l0.9 0.5M324.2 374.0l0.5 -1.4M351.5 410.8l2.4 0.8M230.4 436.1l0.9 -1.2M226.1 405.6l-1.1 -1.7M291.5 329.0l0.8 0.6M307.8 407.6l1.0 -2.3M289.5 361.3l0.0 1.0M341.0 367.5l0.8 1.8M347.8 368.3l0.3 -1.5M304.8 420.7l-1.5 -0.1M385.8 396.8l-0.3 -2.0M334.5 402.4l1.5 0.0M261.5 364.8l-1.5 2.0M264.7 438.7l-0.7 -1.3M358.0 400.5l1.2 -1.0M347.1 422.1l-1.4 -2.1M291.5 357.3l-0.2 -1.0M351.9 429.3l-0.8 1.3M373.0 321.3l-1.9 -1.7M344.7 343.4l-2.0 1.4M251.4 364.4l1.0 -0.3M329.6 390.8l-0.9 -0.4M340.6 373.0l-2.0 -0.3M228.5 371.4l1.5 -0.1M301.0 414.3l1.7 -1.8M347.9 429.2l1.3 -0.7M340.0 409.2l-1.5 0.4M304.8 377.9l2.0 0.1M385.8 410.4l-1.5 0.4M333.6 336.2l-1.3 -1.5M254.8 429.3l-1.8 0.8M243.3 346.0l0.7 1.9M236.8 355.9l1.3 -2.1M297.8 353.5l-1.5 0.3M302.5 347.8l-0.7 0.7M285.6 363.3l-1.5 2.0M333.6 369.0l-1.4 -0.7M285.4 341.3l0.8 -0.6M263.1 384.7l-1.9 -0.6M326.9 379.0l-1.5 1.3M217.9 420.4l0.4 -0.9M243.0 406.3l0.3 0.9M343.9 336.0l0.5 2.5M365.3 367.4l1.0 -1.1M319.5 443.0l0.9 0.3M244.5 377.3l0.6 1.9M332.7 442.1l2.5 -0.3M271.9 370.4l-1.0 0.1M389.1 408.4l0.6 1.4M217.4 374.2l-1.7 -1.9M304.5 336.9l0.3 -1.5M301.9 406.1l-0.6 -0.8M248.4 445.2l-0.5 -0.9M388.4 406.1l0.1 -2.0M223.1 372.8l-1.7 1.0M230.3 417.5l-0.2 1.0M267.4 326.3l0.3 -1.5M235.8 413.9l-0.4 -0.9M292.8 321.3l0.3 -1.0M254.0 427.8l-0.1 1.0M334.3 413.3l-1.5 0.3M312.0 369.9l1.6 1.9M272.5 361.9l-0.7 0.7M269.9 321.7l1.4 1.4M331.4 340.4l0.7 1.9M251.0 383.0l0.5 -0.9M333.7 409.3l2.4 0.8M336.3 383.9l-0.4 -1.5M217.3 343.9l0.5 -0.9M282.2 445.1l-2.1 -1.4M234.3 413.5l1.2 1.6M367.4 320.8l2.4 0.8M324.1 401.6l-0.2 -1.5M277.8 433.2l0.9 1.2M346.3 411.1l0.6 0.8M257.3 423.5l2.1 1.4M318.1 373.0l1.0 0.3M320.7 341.2l1.7 1.0M347.0 361.4l0.0 -1.0M304.6 437.9l1.1 1.7M290.6 437.2l-1.5 -0.1M353.3 354.5l1.4 0.4M290.8 402.6l0.8 -0.6M337.8 402.7l-1.7 1.1M388.9 360.9l-0.7 -1.3M227.1 328.9l0.7 1.9M301.7 421.5l2.3 -1.0M330.5 321.2l1.0 -0.1M353.2 419.2l0.5 -1.4M275.9 407.0l-0.5 -1.9M243.3 374.0l1.7 1.8M366.3 399.5l0.7 -0.7M215.6 323.4l1.4 -1.4M319.6 323.6l1.8 1.7M351.7 384.2l2.2 -1.1M220.6 350.9l-1.0 -2.3M343.6 350.7l1.0 0.1M274.8 370.4l-1.6 -1.3M355.8 347.4l1.2 0.9M300.3 365.3l-1.5 0.1M291.9 371.9l1.5 -0.2M339.7 363.1l-0.7 -1.3M281.4 319.4l0.1 -2.0M363.6 348.8l0.3 -2.0M375.2 320.0l-1.2 2.2M257.1 427.6l-2.1 -1.3M295.8 394.7l-2.0 -1.5M292.1 445.1l-1.5 0.4M294.7 435.6l-1.0 1.1M232.5 385.6l-0.4 1.5M320.3 389.6l0.1 -2.0M234.9 338.7l1.2 -0.9M331.3 375.1l0.3 2.5M271.1 369.4l-1.4 -0.4M309.8 326.6l0.6 1.4M340.4 411.8l-0.3 2.0M351.5 391.1l-1.9 0.7M314.2 414.4l-1.4 0.5M358.9 401.6l-0.8 -0.6M240.8 421.2l0.8 -0.6M274.3 321.3l0.9 0.4M218.9 410.1l-0.6 -1.9M267.6 412.0l0.7 2.4M216.0 325.5l-0.9 2.3M322.2 428.3l-0.8 -2.4M379.4 346.2l1.4 -0.4M238.3 357.1l2.1 1.4M345.4 430.1l0.5 1.9M247.3 442.2l1.4 -0.5M276.8 422.0l-0.2 1.0M299.4 366.2l0.5 2.4M356.3 429.7l0.4 -1.4M237.0 417.5l1.6 -1.9M381.7 342.2l-1.3 0.8M270.6 400.5l-0.2 1.0M247.0 391.9l-1.5 0.2M217.9 437.0l1.0 0.2M268.6 411.0l-1.8 -0.9M280.0 379.4l-1.2 -1.6M223.8 349.8l-0.0 1.0M261.0 341.3l1.3 -0.7M235.0 346.6l-0.5 0.9M294.1 380.8l0.3 2.0M377.9 368.2l2.2 1.1M373.5 423.1l1.4 0.5M295.7 391.6l-0.9 -0.4M329.9 402.2l-1.9 0.7M306.0 347.6l1.0 0.3M265.2 419.2l-1.4 -0.4M235.2 411.6l0.9 -0.4M300.2 374.8l2.2 -1.1M263.8 332.0l-1.4 0.5M278.2 395.2l1.2 1.6M218.4 366.1l-1.0 0.2M292.2 393.0l1.0 -0.2M310.0 402.0l0.9 0.4M317.8 410.3l-1.5 0.0M274.6 365.2l1.0 -1.7M340.9 365.9l1.6 -1.2M319.1 394.6l-2.3 1.0M356.7 389.4l1.0 -1.1M267.6 420.5l-1.6 -1.9M283.4 372.4l-0.7 -1.9M298.2 358.0l0.5 -1.4M362.8 403.7l0.8 1.2M357.2 442.2l1.3 0.7M255.0 350.4l2.0 1.5M316.9 382.5l-0.2 1.0M236.8 426.6l-0.6 -2.4M311.2 422.0l-1.9 -0.5M275.5 338.6l2.0 -0.2M279.9 331.1l-0.5 -1.9M371.2 334.3l-2.0 0.1M345.1 382.5l0.2 1.5M351.5 393.0l-0.8 2.4M280.4 330.6l-1.0 2.3M302.4 385.5l0.8 0.6M302.2 373.3l2.5 0.4M322.9 360.5l2.3 -1.1M338.4 439.2l-0.4 0.9M362.7 441.1l-1.4 1.5M354.3 324.7l0.5 -0.8M226.2 360.2l1.3 1.5M300.3 425.1l1.1 -1.0M356.8 347.3l1.3 -1.5M363.5 390.6l-0.0 1.5M268.6 330.6l0.3 -2.5M356.1 387.2l2.1 1.4M369.0 338.7l0.0 -1.0M374.1 369.4l-1.0 0.3M367.9 370.4l2.0 0.4M275.7 376.1l1.5 -2.0M226.7 371.6l1.9 1.7M326.7 379.5l0.9 -0.5M259.9 351.1l-1.5 -0.0M304.5 342.4l1.5 -1.4M268.8 383.9l-2.4 0.8M337.1 405.3l-1.0 -1.1M269.3 344.0l-1.3 -2.1M325.8 364.8l0.9 0.4M287.4 362.9l1.2 2.2M224.9 356.1l0.5 2.4M351.6 374.5l-1.0 -0.2M343.1 340.1l1.3 0.8M375.8 423.0l1.8 0.8M329.5 346.7l-1.0 0.1M280.0 444.0l-1.5 0.3M329.5 368.3l0.7 1.9M232.5 360.8l0.6 -0.8M325.7 365.6l-1.3 -0.7M267.3 410.6l0.1 -2.0M357.7 444.2l1.0 -0.1M297.2 431.8l0.3 -2.0M266.1 406.1l0.1 -1.5M264.9 380.9l1.7 -1.1M284.7 320.9l1.3 -0.8M235.4 414.2l1.6 1.1M333.8 435.8l-0.5 -0.8M354.6 351.7l-0.3 -2.0M274.9 383.0l2.1 1.3M302.3 364.9l0.4 -0.9M313.3 378.9l1.3 1.5M222.2 353.1l0.9 1.2M241.0 366.1l-1.7 -1.0M297.3 437.3l-1.6 1.2M254.2 415.9l0.9 1.2M352.1 410.6l-1.0 -2.3M233.2 387.2l-1.8 -1.8M297.5 422.0l-1.0 -0.3M247.8 340.7l-1.4 2.1M247.9 411.1l-0.5 -0.9M262.3 323.3l1.5 -0.0M333.1 352.5l-0.6 0.8M238.8 416.7l0.4 -2.5M288.5 352.1l-1.9 0.5M304.7 444.6l2.0 0.2M255.5 347.2l0.4 0.9M267.8 411.3l-2.4 -0.8M350.7 339.5l0.9 -1.8M386.1 333.1l1.6 1.2M347.4 391.3l-2.2 1.1M305.5 336.9l-0.3 1.0M292.1 359.4l-1.5 0.0M318.6 365.0l1.0 0.1M361.4 348.9l-0.8 -2.4M292.8 332.9l0.7 -1.9M340.2 376.8l1.4 0.6M342.8 333.6l-1.1 1.7M293.4 359.2l1.0 -1.1M372.6 384.0l-1.7 -1.0M293.2 410.9l-0.5 -1.4M373.9 339.2l1.0 1.1M242.1 364.7l0.9 -1.8M245.9 435.3l0.5 1.9M387.3 416.5l-1.2 -2.2M247.6 441.1l1.5 1.3M311.3 359.8l-0.5 1.9M330.2 391.3l-0.9 -0.4M358.9 393.0l0.1 2.0M294.5 426.6l1.0 -0.1M339.4 359.5l-1.2 -1.0M276.2 341.9l1.4 -0.6M305.3 355.8l1.2 -0.9M316.5 339.2l1.7 1.0M361.4 321.3l0.8 1.8M270.9 335.1l-1.2 0.9M268.0 335.3l0.1 2.0M355.0 329.2l0.9 -0.4M315.2 333.0l1.6 1.1M354.3 430.8l1.2 1.6M336.3 365.6l1.4 2.1M295.6 421.9l-0.4 0.9M345.5 431.0l-0.9 -2.3M334.7 363.6l-2.1 -1.3M268.4 328.8l1.0 -0.2M222.0 436.7l1.3 -0.7M286.8 389.3l0.9 -0.5M324.1 424.2l0.1 1.5M345.8 368.9l-0.3 1.5M300.2 420.2l1.8 -1.7M297.1 329.3l0.3 2.5M328.3 374.9l1.4 -2.1M253.0 373.2l-1.5 -0.1M251.5 348.5l-1.4 2.1M296.2 354.6l-2.0 0.4M387.3 332.2l-1.2 1.6M295.8 443.8l0.2 1.0M339.2 367.0l0.8 -0.5M275.6 321.1l1.0 0.1M227.5 407.2l0.6 0.8M293.6 348.2l-0.4 -2.0M298.0 417.9l-1.1 -1.0M359.7 362.0l1.1 -1.6M290.1 318.4l-0.3 -1.5M271.0 325.7l0.1 1.0M386.6 344.8l-0.3 -0.9M308.7 405.0l-2.3 -0.9M347.7 378.5l-1.0 -2.3M301.8 437.0l1.2 0.8M332.2 318.2l2.4 0.6M237.1 414.7l-0.7 1.3M261.0 417.8l0.0 2.0M345.2 426.2l-0.5 -0.9M321.7 421.5l0.5 -2.5M277.3 425.3l-1.7 -1.9M332.8 398.7l-0.3 2.5M218.5 361.6l0.9 0.4M373.0 422.3l-0.9 0.5M231.0 431.1l-1.2 1.0M326.0 319.0l0.2 1.5M225.6 373.7l2.5 -0.0M249.9 356.9l0.7 2.4M255.6 323.3l-1.1 1.0M286.4 390.6l1.6 1.1M230.3 406.8l1.5 0.3M359.5 397.3l-2.3 -1.0M364.8 345.9l-0.6 1.9M238.6 351.7l1.2 1.6M344.2 381.1l0.3 2.5M313.2 333.0l-1.1 -1.0M325.0 397.4l0.9 0.4M267.0 431.5l-0.9 0.3M255.9 366.9l0.4 -1.4M243.5 428.6l-0.8 -1.3M251.7 386.4l0.1 1.5M226.2 436.9l-0.5 -0.9M288.7 441.3l-0.3 -2.5M355.2 436.6l-0.5 1.4M255.5 418.0l-0.6 -2.4M352.6 370.9l-0.8 2.4M308.2 357.5l-1.0 0.1M298.7 353.5l-1.8 -1.7M264.2 363.0l-0.1 -2.5M320.9 423.0l2.0 -0.4M254.4 360.3l-0.9 -0.4M308.5 392.5l-0.1 -2.0M287.9 380.7l-1.5 -0.0M263.2 432.4l-0.3 2.5M303.5 406.3l0.9 0.4M371.0 379.2l1.5 2.0M254.3 352.1l-1.2 0.9M381.9 394.1l1.0 -1.1M375.0 440.1l1.5 0.1M340.7 386.8l0.5 -0.9M376.4 444.1l-1.9 1.6M252.9 429.4l-0.8 1.8M305.6 418.6l-0.5 2.5M217.1 396.2l0.0 -2.5M233.3 348.1l-1.4 -2.0M383.8 384.7l-0.5 -1.4M336.0 333.4l1.9 0.6M319.1 389.2l-1.0 1.7M235.7 345.6l-0.8 -0.6M382.7 327.9l-1.3 -0.7M349.9 384.2l0.2 1.0M228.9 331.7l0.7 -2.4M387.8 399.7l-1.7 -1.0M317.0 319.6l1.4 -1.5M296.8 398.6l-0.0 1.0M302.4 363.5l1.0 -1.7M334.1 392.9l0.4 2.0M288.7 320.3l1.0 0.2M378.9 380.4l-0.9 1.2M277.6 350.0l-1.6 1.3M361.2 395.0l0.7 0.7M356.8 361.7l1.3 -1.5M233.4 391.7l-0.7 1.3M363.7 345.7l2.0 1.5M378.8 381.0l-0.4 -1.4M240.0 387.2l-0.5 1.4M295.5 353.3l-0.3 -1.5M243.0 355.9l-1.4 1.4M326.4 331.6l1.2 1.6M247.0 407.0l-0.4 0.9M301.2 367.2l2.0 0.3M257.4 374.2l1.1 1.7M362.9 346.5l-0.7 0.7M348.6 391.2l-2.3 1.0M308.6 381.7l0.2 1.0M233.3 364.0l-2.5 -0.0M348.4 364.6l0.9 -0.4M341.0 394.9l-0.6 -1.4M328.3 401.8l1.8 0.9M302.6 445.6l-1.3 -0.7M246.2 361.3l0.9 -1.2M265.9 445.2l1.9 0.8M342.5 392.0l2.0 -0.1M354.8 373.3l1.4 -0.6M351.7 436.1l-1.1 1.6M267.5 373.4l-2.0 -0.4M288.8 355.9l-0.9 1.2M370.1 414.5l0.8 -1.3M345.6 414.7l2.2 1.1M292.2 329.7l1.9 -0.7M235.5 327.5l1.8 0.8M218.6 428.5l1.1 -1.0M380.3 425.3l1.4 1.5M291.4 372.4l-1.9 -0.6M250.4 354.0l-1.7 -1.0M359.8 401.4l1.3 0.7M312.1 359.7l-1.5 0.1M280.9 383.6l1.4 0.5M325.9 322.1l-0.6 -2.4M277.8 383.8l1.0 -0.1M288.6 382.7l1.5 -1.3M254.0 441.7l-2.3 -0.9M300.5 427.8l1.3 -2.2M317.6 377.4l-2.4 0.7M348.6 394.8l0.8 -0.5M232.0 425.8l1.1 -1.0M377.0 419.1l-0.6 0.8M309.4 377.1l-0.4 -0.9M231.4 380.0l-1.2 -1.0M278.4 377.8l1.5 2.0M342.2 375.4l1.7 -1.9M346.1 416.7l-1.2 1.6M382.8 344.5l0.4 1.4M377.0 329.6l-1.0 -1.7M230.5 388.2l-0.1 -1.5M374.2 395.7l0.6 1.4M225.9 371.4l-1.0 0.2M221.6 440.3l1.0 0.2M243.2 414.3l1.4 1.4M269.9 382.7l-0.9 0.3M313.9 385.4l-0.6 1.4M341.2 360.8l1.8 0.8M315.3 423.9l1.1 -1.6M340.1 360.1l-1.0 0.1M337.5 380.5l-2.0 0.4M303.9 389.1l1.2 2.2M365.5 430.9l0.8 -1.3M220.5 387.1l-1.6 1.2M251.0 377.8l-0.0 1.5M310.3 405.2l2.0 0.1M372.9 411.0l1.3 0.8M335.9 361.5l-1.1 2.2M313.5 335.2l-1.0 0.2M261.6 414.0l-0.1 -2.0M346.6 391.7l-1.9 -0.4M364.6 354.9l-0.3 -2.0M262.0 395.8l-2.4 0.7M264.4 353.2l0.8 0.6M375.9 334.1l1.6 -1.1M388.7 356.9l0.0 1.0M319.6 381.0l-0.8 -0.6M358.5 328.4l1.4 -0.4M346.4 355.8l-1.2 0.9M358.2 340.1l-1.1 -1.0M308.3 353.5l0.2 1.0M382.4 376.5l1.0 0.1M334.0 333.3l-0.8 1.8M278.4 415.4l-1.5 1.3M245.8 365.3l0.6 1.9M339.8 402.2l-0.4 0.9M347.0 430.4l-0.2 2.5M311.0 324.6l-1.3 0.7M242.6 350.0l0.6 -0.8M252.1 427.1l1.0 -0.1M265.0 442.3l1.6 1.9M338.0 332.6l0.4 -2.5M377.3 321.1l-2.0 0.3M273.7 368.5l-0.6 1.4M351.7 367.6l2.4 -0.6M329.3 362.3l-2.3 -1.1M363.0 356.9l-1.4 -0.5M238.2 437.3l0.3 -2.0M378.3 445.9l-0.8 0.6M270.5 433.6l-0.2 -1.0M379.3 361.8l0.9 1.2M367.8 336.3l1.5 -0.2M215.0 371.6l1.0 1.1M306.9 321.9l-1.1 -2.2M219.7 368.3l-2.0 -0.2M338.7 395.3l-2.3 1.0M315.7 353.8l1.0 0.1M217.8 342.6l-0.6 0.8M218.6 430.2l1.0 -0.3M350.9 337.1l-2.5 -0.4M332.7 374.4l-1.0 0.2M215.9 432.5l1.5 -2.0M326.4 361.4l-1.9 -0.5M288.4 385.7l1.1 -1.7M336.6 388.3l-1.0 0.3M340.1 427.2l0.9 -1.8M316.9 380.3l2.0 0.1M286.2 380.7l1.1 -1.0M302.4 426.0l0.2 1.0M227.6 407.2l-0.8 -0.6M291.3 353.0l0.9 1.8M272.6 444.0l-0.9 -1.8M385.5 421.2l-1.5 0.2M246.7 374.8l0.9 -1.2M382.0 421.4l1.4 2.0M251.2 350.6l-1.0 -1.1M355.5 361.3l0.9 -0.5M309.1 408.7l-0.4 -1.4M345.5 394.3l1.8 1.0M291.4 375.8l-0.6 0.8M291.0 353.1l-2.0 -0.4M258.7 352.7l2.5 -0.5M306.7 418.2l-1.0 -0.2M340.6 361.8l-0.2 -2.5M267.5 406.2l1.3 2.1M275.0 347.5l0.6 0.8M379.9 337.0l1.3 1.5M276.5 426.8l-0.6 -0.8M341.3 445.1l-1.5 0.3M324.7 325.0l1.8 -0.8M298.1 327.0l-1.3 -0.8M387.0 334.5l1.2 2.2M389.2 404.8l-2.3 1.0M238.4 373.3l-0.1 -1.0M288.6 400.3l-0.8 -0.6M369.9 335.9l0.8 -0.6M389.7 397.4l-1.2 2.2M289.8 374.6l-0.4 -2.5M253.6 330.2l-0.4 -2.0M268.8 437.3l-0.6 0.8M301.5 378.9l-0.2 -2.5M273.6 417.4l-1.2 -2.2M354.0 345.4l-0.8 0.6M346.8 371.9l0.9 -1.2M341.2 345.9l-2.0 -0.2M366.8 348.5l-1.5 -1.3M267.6 404.8l0.5 -2.4M317.5 413.2l0.3 2.0M360.6 364.4l-1.3 1.5M352.9 415.8l-2.5 -0.5M347.5 408.1l1.0 0.3M311.0 434.1l2.5 -0.5M276.7 348.3l0.7 1.3M238.1 426.1l-0.0 1.0M354.0 356.8l1.0 -1.1M294.2 326.2l-0.6 1.4M233.4 426.3l-1.0 1.7M377.0 406.4l-0.8 0.5M294.3 358.4l2.3 -1.0M313.6 386.5l-1.3 2.1M341.9 401.1l1.2 1.0M235.2 380.3l-0.9 -1.2M384.8 439.6l0.7 -0.7M380.9 430.4l-2.1 -1.4M232.8 396.2l0.6 -0.8M358.2 350.4l-1.0 -0.3M365.5 414.7l0.4 -0.9M241.4 369.3l-1.5 0.3M311.9 332.9l0.6 -0.8M304.6 426.6l-0.0 1.0M319.3 398.6l-0.6 -1.4M380.2 437.1l-0.9 -2.3M348.3 342.8l0.9 0.4M270.1 366.8l0.4 -2.5M312.3 362.3l1.9 0.6M268.6 438.0l-2.5 0.2M235.5 400.3l-1.9 1.6M336.8 328.7l-0.6 -1.9M311.1 387.6l2.4 0.6M311.1 396.8l-1.5 0.2M239.9 351.2l1.5 -0.0M237.8 433.1l1.9 0.7M235.7 361.0l-0.2 -2.0M336.6 341.1l1.3 -0.8M338.7 365.1l0.7 0.7M367.7 372.5l-2.2 -1.2M252.9 384.7l1.0 1.8M277.8 331.8l-1.4 2.1M348.5 353.6l-2.0 -0.3M318.8 370.1l-2.1 1.4M320.0 325.0l-0.5 1.9M339.6 415.3l-0.4 -1.4M226.5 434.0l-1.4 -0.5M270.8 325.7l1.4 -1.4M314.4 434.9l-1.4 2.1M343.6 378.8l-2.5 0.1M374.7 371.0l0.7 -1.9M332.2 374.1l0.9 -1.2M219.2 369.8l1.0 -0.0M268.6 390.6l1.5 0.4M241.2 392.3l-1.8 1.7M363.3 374.4l0.5 -0.9M372.6 362.1l1.7 1.1M309.7 326.6l-0.1 -1.0M299.0 326.8l1.0 -2.3M346.8 411.7l0.7 -1.3M335.0 332.4l1.2 -1.6M286.7 365.1l-1.8 -1.7M273.6 377.7l1.3 -1.5M304.1 339.1l0.3 1.0M314.1 397.2l0.5 -0.9M332.5 373.7l1.4 0.4M355.6 320.7l-0.0 2.0M266.9 404.3l1.5 0.0M292.3 321.8l1.0 0.0M300.8 408.0l-2.0 -0.2M326.9 444.1l-0.3 1.0M379.0 384.1l0.9 0.5M329.4 319.3l0.2 -1.5M246.7 430.7l-0.2 1.0M303.2 322.6l2.5 -0.4M244.3 330.0l1.1 -2.2M291.7 342.4l-0.3 -1.0M359.8 383.0l0.9 0.4M294.6 435.7l1.3 1.5M387.5 373.9l-2.5 0.1M354.2 438.5l-1.4 0.6M277.7 442.4l-0.7 -1.9M376.8 338.4l-1.4 0.6M334.5 351.4l2.3 1.0M387.6 395.4l1.4 2.1M305.6 415.3l1.0 -0.2M273.6 398.5l1.2 -2.2M283.2 336.9l-0.5 0.9M293.3 372.9l0.9 2.3M301.5 392.4l0.9 -0.4M347.4 320.9l-1.6 -1.2M246.2 327.0l-1.7 -1.9M335.5 341.6l0.2 2.0M256.4 403.3l1.5 -0.3M376.4 403.6l-0.3 -2.5M271.5 331.7l-2.5 -0.4M339.3 351.1l0.2 1.0M383.7 372.7l0.2 1.0M358.1 435.1l1.4 0.5M244.8 402.2l-2.4 -0.7M225.2 394.3l-1.0 0.3M313.5 365.1l1.3 2.1M242.0 347.3l-1.4 -0.5M360.4 372.0l1.7 1.1M326.7 345.7l1.4 0.6M342.4 331.3l0.6 -1.9M312.9 352.7l-0.2 -1.0M276.5 392.9l-1.0 0.2M222.6 333.2l1.5 2.0M321.4 416.8l1.7 -1.8M359.8 388.4l1.3 2.1M317.2 442.5l-0.9 -2.3M334.5 341.5l-0.6 1.4M369.6 370.8l0.1 2.5M320.4 436.2l1.9 0.6M224.4 412.8l-1.0 1.7M366.9 329.2l-0.9 0.4M269.1 440.4l0.8 -0.6M307.0 365.9l-0.8 -0.6M293.4 339.4l1.4 -1.4M245.7 425.8l-1.8 0.8M382.8 441.2l2.3 -1.0M306.2 404.5l0.1 -2.0M265.1 331.7l-0.1 1.5M247.0 371.7l-0.5 0.9M287.4 418.7l0.4 2.5M337.4 416.9l1.8 -0.8M385.2 390.3l-1.2 -1.6M334.0 404.4l-0.4 -2.0M279.9 384.1l1.9 0.5M264.4 356.1l-2.2 1.3M307.1 388.3l-1.9 -0.6M231.7 407.0l0.9 0.4M261.3 413.6l0.2 1.0M324.0 336.6l0.0 2.0M370.6 393.2l0.9 0.4M253.2 329.6l-0.7 -0.8M268.3 340.9l-2.2 1.1M349.2 415.9l0.5 0.9M333.1 370.7l-0.8 -0.6M319.5 360.9l0.4 2.5M283.2 321.0l1.2 -1.0M230.2 354.7l-1.0 0.1M222.5 339.1l0.6 1.4M287.8 345.8l1.3 -1.5M350.2 332.5l0.9 -1.2M243.7 350.8l1.6 1.2M306.1 334.3l-1.1 1.7M368.6 357.8l-0.9 0.4M378.1 417.7l-1.0 0.1M356.1 347.2l-0.8 -0.5M310.6 353.4l1.3 -0.8M351.1 412.3l-0.9 -0.5M346.2 360.2l-1.8 0.8M267.2 412.9l0.3 -0.9M314.2 354.5l0.3 -1.0M289.9 368.5l-1.0 0.0M330.5 394.3l-1.1 -2.2M274.7 401.2l0.9 2.3M296.3 354.7l0.3 2.5M334.8 350.3l-2.0 -1.5M341.2 376.7l0.2 1.5M295.9 346.1l1.0 -0.1M245.3 395.0l-1.3 -2.2M272.4 396.5l1.8 -0.9M332.7 360.1l-0.4 -2.5M321.9 369.8l2.5 0.2M337.9 385.3l-1.2 -2.2M351.6 442.0l-0.5 -2.5M278.1 377.6l1.8 0.8M373.1 351.5l0.4 -0.9M355.7 388.8l-0.3 1.0M232.2 356.8l-0.1 -1.5M239.3 333.5l-1.5 -0.2M292.7 396.4l-0.1 -1.0M215.4 420.2l-2.5 0.0M255.9 440.0l-0.7 2.4M282.4 403.3l1.8 0.8M302.6 402.8l0.7 1.3M329.9 354.6l-1.2 2.2M234.1 397.9l1.3 -0.7M215.9 436.1l0.7 0.7M294.7 388.3l-0.6 2.4M271.5 394.5l-0.5 -2.5M364.3 329.0l0.7 -0.7M221.3 437.2l2.4 -0.6M321.3 372.5l1.6 -1.2M222.1 416.0l-1.8 -0.8M276.0 404.1l1.6 -1.2M367.7 326.1l0.5 2.5M297.0 346.9l-0.6 0.8M375.0 428.3l1.1 1.7M381.3 330.2l-1.0 0.1M247.2 319.5l0.7 -0.7M335.9 440.9l-2.4 -0.6M308.5 433.7l-0.1 -1.0M328.5 380.7l0.2 -2.5M300.7 368.5l1.5 0.1M215.2 361.8l1.0 1.8M336.8 379.2l0.5 2.4M276.1 382.1l-0.9 1.2M229.5 336.2l-1.5 -0.3M248.6 345.8l1.3 -0.8M239.6 379.6l-2.0 0.2M241.8 423.8l1.9 1.6M356.2 336.2l-0.5 -1.9M349.5 443.5l0.5 0.9M326.1 323.1l-0.5 -2.4M222.2 441.2l-1.4 1.4M237.8 343.8l-0.1 -2.0M365.1 333.5l-2.1 -1.3M239.5 430.5l-2.2 1.2M342.7 353.2l0.5 -1.4M330.0 435.8l-1.0 -1.7M326.0 388.7l-2.0 -0.2M380.6 323.4l0.1 1.5M370.0 348.0l0.2 2.0M350.3 348.0l-0.2 1.0M219.9 435.0l1.0 2.3M225.4 348.6l0.9 1.8M243.7 350.3l-0.8 -1.3M327.6 395.4l0.7 -1.3M274.7 377.5l-2.0 1.6M326.4 321.6l0.3 -1.0M376.4 401.8l1.5 -2.0M241.8 431.8l-0.0 -1.5M259.8 410.5l-0.9 0.5M359.9 335.9l0.2 1.0M255.9 381.6l-1.2 1.6M333.0 360.6l-0.3 0.9M319.2 386.0l0.1 1.0M388.4 373.2l0.8 -1.8M248.6 393.5l1.4 0.6M325.3 325.8l0.5 1.9M228.8 345.4l1.9 0.5M356.9 391.0l1.8 -0.9M305.1 432.0l1.0 1.1M283.4 356.8l1.4 -0.4M359.6 372.4l-2.0 0.3M254.6 412.0l1.4 -0.4M377.7 352.8l1.4 1.4M238.9 341.4l-0.4 1.4M349.7 344.2l1.3 1.5M285.0 375.2l0.5 0.9M329.8 389.9l1.8 1.8M312.7 374.7l-0.2 -1.0M262.6 348.0l-2.0 1.5M286.3 428.2l1.5 -2.0M379.0 329.3l0.0 1.0M287.4 439.3l0.8 1.3M388.4 405.2l0.5 -1.9M228.3 424.4l-1.7 1.0M370.3 352.8l0.1 -1.0M241.0 320.0l-1.8 1.7M307.8 419.7l-1.6 1.2M308.5 344.6l-0.4 -1.5M256.9 433.5l-1.4 0.5M244.6 324.5l2.0 0.1M322.5 357.2l-1.8 0.9M306.8 362.4l-2.5 -0.3M293.3 345.2l-0.7 -1.9M339.2 351.3l-1.6 -1.2M254.2 324.2l1.3 -0.7M262.9 340.9l2.0 -0.1M360.0 374.3l-2.0 0.2M342.2 345.9l-1.3 1.6M336.1 374.3l0.9 -2.3M311.4 427.0l-2.0 0.4M260.4 434.7l-1.8 1.7M322.5 373.1l-0.9 1.2M342.7 405.1l-1.4 -0.5M266.7 444.5l-1.4 0.4M347.5 355.5l2.5 0.2M318.4 336.6l1.2 1.6M232.9 360.8l-0.4 1.4M374.9 377.9l-0.6 -1.4M351.8 440.5l-0.7 -1.3M382.7 387.5l-0.3 0.9M226.5 319.3l-0.8 1.3M317.0 394.0l-0.2 1.0M360.9 337.7l0.3 1.0M312.1 349.8l1.2 -1.6M338.0 419.6l1.3 0.7M353.3 326.8l-0.8 -1.3M339.4 383.9l1.3 2.2M309.9 426.4l-0.6 0.8M232.0 408.4l-0.9 1.2M316.0 343.9l2.0 1.5M386.6 434.0l-1.5 -0.0M234.5 348.8l-1.5 0.2M286.9 367.0l2.0 0.1M333.4 366.9l-2.1 1.4M285.8 426.2l-1.2 -0.9M325.9 427.1l1.3 2.1M231.0 430.5l1.0 1.1M308.1 408.9l-2.5 0.0M300.2 436.4l1.7 -1.1M352.2 354.1l1.8 1.7M315.3 392.8l1.0 -0.3M322.4 346.0l1.4 0.4M286.7 362.8l0.5 -1.9M304.0 394.4l0.9 -0.4M278.6 363.9l1.4 -2.1M326.2 387.5l2.3 -1.0M323.2 351.7l-0.5 0.9M383.3 360.7l1.7 -1.0M259.4 360.3l2.5 -0.0M354.5 348.7l-0.0 -1.5M351.0 432.0l-2.1 -1.4M362.0 437.9l-0.7 -1.3M260.7 431.6l1.4 -0.5M316.0 352.0l-1.9 -0.7M293.4 366.2l-1.1 1.0M238.8 411.2l0.7 1.9M293.1 360.1l-1.5 -0.2M340.6 368.8l0.3 2.5M337.9 377.7l-0.7 -2.4M241.6 363.8l1.5 1.4M325.4 351.5l0.2 -2.0M293.7 337.1l-0.0 -1.5M320.5 406.2l2.0 1.6M253.9 442.1l1.6 -1.2M267.4 404.1l-0.3 1.0M237.9 354.3l0.7 -0.7M358.5 404.9l0.5 -0.9M320.0 347.8l-1.8 1.7M380.6 418.6l-0.3 -2.5M306.8 342.0l1.8 1.0M302.7 328.5l1.0 1.1M264.4 405.2l1.0 -0.2M221.5 335.7l-1.4 2.0M277.7 319.5l0.4 0.9M388.9 385.1l0.2 -2.5M329.6 362.9l-2.1 -1.3M298.6 375.1l-1.1 2.2M317.4 402.3l-0.6 1.9M300.1 324.9l-2.4 -0.5M356.9 372.3l1.6 -1.9M317.4 395.2l-0.6 0.8M293.0 374.4l-0.4 1.5M285.0 319.3l-1.5 -0.2M276.3 419.7l1.9 -1.7M216.6 381.2l-1.0 -0.1M346.8 370.9l0.3 2.5M307.6 355.5l0.3 2.0M344.3 373.6l0.1 -1.5M216.5 391.8l1.1 -1.0M256.7 444.2l-1.2 -1.0M278.0 351.7l1.6 1.2M224.9 421.5l-1.0 -1.1M241.3 344.1l-0.8 1.8M338.1 385.6l-1.0 0.2M367.2 359.9l1.0 2.3M295.8 344.1l-1.1 1.7M333.3 319.9l-0.1 1.0M329.1 342.6l0.8 -1.2M217.6 422.6l0.9 0.5M386.2 389.2l0.9 -0.3M268.4 327.5l-1.0 0.0M299.9 361.0l-0.2 2.0M302.2 381.9l-1.8 0.9M223.2 442.4l-0.5 -1.4M251.0 377.1l1.1 2.3M276.0 388.4l-1.1 2.3M249.8 429.1l-0.9 2.3M226.3 424.9l-2.5 -0.5M369.4 378.8l0.6 -0.8M344.2 388.5l-1.5 0.2M240.8 436.8l-0.8 -1.3M302.1 422.2l-1.0 0.2M340.1 330.5l1.2 0.9M274.8 409.4l-1.1 1.1M379.2 337.4l-1.9 0.7M321.6 336.7l-1.9 -0.6M351.1 329.7l-0.0 -1.0M289.6 347.0l-0.8 2.4M359.1 344.8l-1.4 1.4M249.6 414.8l-1.3 -2.2M218.0 396.6l-0.0 1.0M332.8 377.9l2.3 -1.0M339.5 322.5l-0.1 1.0M346.3 382.3l-0.3 2.5M317.0 350.6l-1.8 -1.8M318.2 349.4l1.3 -1.5M290.0 393.2l-0.0 -1.0M367.6 412.3l0.1 -1.0M348.7 359.2l1.4 0.5M364.4 385.0l-1.5 -0.0M346.6 362.4l-1.3 1.5M220.8 414.5l-0.4 -1.4M240.0 325.5l1.0 0.1M217.3 337.2l-1.7 1.1M309.7 445.4l1.0 0.1M267.0 426.6l-0.1 -1.5M334.6 325.6l1.8 0.9M349.4 393.7l-0.7 -1.3M304.7 341.9l0.7 1.9M289.5 331.3l0.7 -1.3M280.0 423.0l1.3 -0.7M249.7 342.1l0.8 1.3M267.6 357.0l-1.4 1.5M293.7 335.8l0.3 -1.0M273.1 366.9l-1.5 0.3M366.8 334.5l2.4 0.5M282.7 357.2l2.2 -1.2M367.6 378.9l-0.9 -1.2M290.1 419.0l-0.7 -1.9M311.7 394.4l0.1 1.0M357.9 343.9l2.5 -0.3M216.4 364.7l0.9 -1.2M322.6 356.4l-1.0 0.1M298.5 339.4l0.9 1.2M235.7 371.6l1.5 0.0M328.2 332.9l0.6 -0.8M351.1 330.4l1.5 0.3M372.4 342.3l0.4 -1.4M269.7 369.2l-0.6 -1.9M351.2 424.5l-0.2 -1.0M223.7 433.3l1.4 0.5M273.5 358.3l-0.9 0.5M379.2 390.9l2.4 0.8M334.2 360.1l-1.4 -2.1M321.1 444.1l0.4 2.0M315.1 347.8l0.2 2.5M326.7 352.1l1.0 -1.2M371.8 378.9l0.9 2.3M297.6 325.2l0.6 0.8M319.0 408.9l-1.5 0.1M316.0 399.3l1.5 0.3M308.3 326.3l-0.1 -1.5M224.8 356.5l-0.9 0.4M337.5 441.2l-0.7 -0.7M332.3 356.1l-0.7 0.7M298.9 404.2l-1.5 -0.2M387.7 324.0l-1.9 0.5M276.8 384.1l1.0 0.0M295.4 372.8l-0.5 1.4M320.0 394.5l-1.0 2.3M248.3 385.5l0.8 0.6M248.5 405.7l-0.7 -2.4M299.9 339.6l-0.4 0.9M326.1 375.0l0.3 -1.5M269.6 375.4l1.4 0.6M315.9 356.3l0.3 1.5M318.3 320.3l-1.7 -1.0M240.5 337.9l-0.6 -0.8M325.0 364.2l-0.8 -0.6M340.7 439.2l1.3 0.8M237.8 364.3l-1.9 0.6M240.6 380.1l-2.5 -0.1M380.5 412.0l-0.7 -0.7M274.4 378.8l0.6 0.8M269.0 407.9l-0.5 -1.9M376.6 364.3l-1.5 0.2M244.1 421.0l0.6 1.9M313.8 349.1l-0.8 -0.6M333.9 373.5l1.3 -0.7M319.1 416.8l1.4 0.6M287.0 321.9l-0.6 -0.8M226.4 376.8l-0.8 -1.3M323.7 419.2l0.5 -1.4M290.7 325.8l0.3 2.0M307.3 338.1l1.0 0.3M228.2 404.4l1.1 -1.7M277.5 405.5l-1.0 0.3M280.5 368.2l-0.3 1.5M266.8 336.7l0.9 -0.4M259.5 440.2l1.4 0.6M341.1 440.6l-1.6 1.1M351.1 373.5l1.0 -2.3M331.8 367.4l0.8 -0.7M286.2 320.5l-1.8 -0.8M273.6 411.8l-0.9 0.5M273.0 445.2l1.0 0.2M343.4 325.1l0.9 -0.4M286.5 364.5l-2.4 -0.7M219.7 430.8l-1.5 0.2M284.9 357.8l-1.3 -0.7M235.4 391.5l0.3 1.0M332.2 356.8l-1.3 -0.7M274.4 324.2l1.5 0.1M383.1 338.8l1.0 0.1M229.0 359.3l-1.2 0.9M310.7 407.8l-1.2 -1.6M386.2 410.5l-1.5 -0.2M216.6 383.7l-1.4 -0.4M221.2 346.9l-1.0 0.0M259.7 437.3l-0.5 -1.4M294.6 329.0l-1.0 -0.1M239.7 319.5l0.4 -1.4M241.8 360.3l2.2 -1.2M339.6 401.5l1.1 -1.0M383.0 431.0l-1.2 0.9M370.0 428.0l-1.4 0.5M296.4 398.0l-1.5 0.3M222.1 344.3l-2.1 -1.4M262.3 367.3l0.5 -0.8M317.2 432.1l-2.1 1.3M354.0 363.4l-1.8 1.8M370.6 392.5l0.4 -0.9M374.8 440.1l2.0 0.1M386.9 327.5l-2.4 -0.7M380.2 347.2l-1.9 1.7M346.1 375.2l-1.2 0.9M275.7 368.4l1.4 0.6M381.2 328.4l-1.1 1.0M327.0 445.1l2.4 -0.7M330.5 404.8l-1.0 1.1M336.2 367.1l-1.5 1.3M389.0 381.6l-0.3 1.5M364.9 334.2l1.8 0.8M271.1 440.2l-0.9 -2.3M366.7 346.3l-1.5 -1.3M282.4 407.3l1.0 1.7M345.5 417.1l0.4 -0.9M266.6 318.1l-0.4 -0.9M319.6 409.0l1.0 -0.1M275.2 371.6l-0.8 1.9M296.5 417.4l-0.8 1.2M266.7 335.2l1.9 -1.6M308.9 425.6l0.5 2.5M225.8 342.0l1.0 0.0M302.3 325.4l1.9 -0.5M346.1 348.0l-2.3 1.0M310.3 386.0l0.6 1.4M248.3 377.1l-1.3 0.8M320.4 354.5l-1.6 -1.2M367.6 380.5l-0.9 -0.5M244.5 350.2l-1.1 -2.2M348.5 369.4l0.9 -0.5M277.7 353.0l1.4 1.4M277.2 362.7l0.1 -2.0M305.4 396.2l-0.4 -2.5M282.8 423.0l2.3 1.1M267.1 381.7l-0.6 -0.8M386.3 387.3l-1.7 1.8M267.3 440.2l1.2 1.6M261.8 393.6l-0.1 1.0M381.8 416.7l0.3 -2.0M364.5 336.1l2.5 0.2M273.0 353.7l2.4 -0.7M230.9 393.5l-2.1 1.3M335.7 335.3l-1.9 0.6M262.0 370.6l2.0 1.5M288.0 353.7l-0.4 0.9M348.9 321.1l0.7 0.7M243.7 436.2l0.9 1.2M220.5 321.0l0.8 -2.4M300.4 423.1l1.1 1.7M290.0 355.3l0.3 -1.0M340.6 391.5l0.4 -2.0M334.8 362.7l0.5 0.8M219.8 427.5l0.1 2.0M284.9 420.4l-2.1 -1.3M309.9 401.8l0.3 -2.0M389.4 351.6l0.4 -2.0M306.9 432.4l-0.2 2.0M265.8 353.0l0.4 -2.0M326.3 428.1l-1.0 0.2M337.3 319.8l1.3 0.8M357.9 326.0l-2.4 -0.5M387.0 330.3l0.1 1.5M288.2 445.6l1.5 -0.3M354.2 430.0l0.9 -0.4M258.6 367.2l-0.6 1.9M238.9 425.9l2.0 -1.5M327.5 338.8l-1.0 1.1M239.3 319.5l-1.5 0.3M360.9 327.0l1.7 1.1M389.4 389.2l-1.2 1.6M304.9 361.2l-0.9 0.4M340.9 422.3l1.9 1.6M229.5 400.8l-1.3 0.7M268.8 442.4l-0.1 -1.5M299.0 436.9l0.5 1.9M233.3 428.3l0.2 -1.5M343.3 358.4l0.1 -1.0M292.1 346.8l0.3 1.5M264.6 442.3l1.9 0.5M288.1 411.3l0.0 1.5M364.8 340.8l0.8 2.4M297.5 424.3l-1.2 -0.9M274.8 352.3l-1.7 -1.8M299.6 407.5l0.6 -1.4M284.3 419.3l1.1 -1.0M294.8 331.4l-0.4 -2.5M349.0 430.8l-2.0 -0.0M342.4 358.6l0.7 -1.3M226.3 396.6l1.7 -1.8M355.4 335.9l-1.9 1.6M262.2 342.0l0.2 -1.0M290.7 340.4l-0.7 1.9M305.6 409.5l-1.2 0.8M290.7 398.3l1.7 1.9M364.1 398.4l-0.3 2.0M353.2 379.8l0.8 -1.3M287.9 346.8l0.9 1.2M276.3 381.9l-1.1 -1.7M290.9 336.7l-0.3 1.0M304.5 389.5l2.2 1.1M225.5 401.1l0.6 1.4M283.3 325.2l0.6 -2.4M234.9 334.0l-1.5 1.3M361.2 332.1l-2.0 0.3M329.2 409.1l-1.9 0.6M305.9 348.2l0.4 -2.5M258.3 436.6l-0.8 -2.4M286.4 361.6l0.7 0.7M247.1 380.5l-1.4 0.6M302.7 367.2l-0.1 2.0M352.2 427.3l-1.3 1.6M218.0 383.8l-2.4 0.8M340.3 406.5l1.5 -0.4M232.7 366.2l0.2 -1.5M216.2 344.2l-1.9 0.5M324.1 438.5l1.8 0.8M385.6 341.4l-2.0 1.6M292.3 439.0l0.9 -0.4M324.0 368.5l-0.7 1.3M248.7 398.5l0.6 -0.8M364.7 360.2l-1.0 1.1M288.5 374.6l-1.3 1.5M336.3 396.9l2.0 0.0M345.1 412.9l-2.0 -0.1M271.3 435.9l1.0 2.3M272.9 326.5l1.9 -1.7M267.7 440.3l-0.7 1.9M300.3 410.0l0.6 -1.9M279.0 352.6l-1.6 1.3M306.4 426.5l-0.8 -2.4M298.5 384.2l-1.2 -1.6M215.4 384.4l-0.1 -2.0M306.0 404.1l-1.1 1.6M277.0 395.6l-1.2 0.9M389.9 386.3l1.0 -2.3M279.5 337.9l0.6 -1.4M260.6 437.3l-1.6 1.2M281.9 347.6l-2.0 0.4M296.2 392.9l1.3 -0.7M294.4 430.9l-0.4 -0.9M261.4 396.6l-0.2 -1.5M260.4 329.5l2.1 1.4M287.3 420.2l-1.4 -0.4M230.5 435.1l0.4 -0.9M365.5 347.8l0.2 1.0M281.2 422.9l2.0 -0.3M369.3 394.6l-2.4 0.8M215.1 400.4l-2.5 -0.0M381.0 393.3l-0.2 -1.0M303.4 439.6l-1.1 1.7M239.2 377.8l0.4 0.9M245.7 440.6l1.0 0.2M382.1 377.2l-0.8 1.8M324.4 357.9l0.2 1.5M320.4 334.6l-1.2 -2.2M335.0 362.7l-0.7 -1.3M318.4 361.9l1.7 1.8M268.9 441.8l1.0 2.3M277.5 340.9l2.5 0.4M374.7 421.3l0.7 -2.4M327.6 381.8l0.3 -1.0M264.2 358.0l2.3 0.9M234.3 405.6l1.1 2.3M253.2 350.1l1.9 -1.6M271.6 414.6l-1.1 2.2M269.6 340.7l-1.5 -0.3M290.5 430.7l-0.2 1.0M290.2 322.2l1.8 -0.9M304.5 390.7l-1.8 -0.8M295.5 384.7l-1.4 -0.7M345.2 335.1l-1.5 -0.1M353.8 326.0l-2.5 -0.1M234.5 389.7l-2.5 -0.4M301.5 407.5l1.4 -2.1M371.5 413.4l-0.7 0.7M353.9 407.1l-0.3 2.0M373.3 344.0l-1.9 1.6M224.5 369.8l1.6 -1.9M386.1 426.4l1.1 1.0M260.7 373.3l-1.5 0.3M338.4 376.8l0.6 2.4M306.6 351.9l-0.8 0.5M317.3 415.1l1.0 1.7M352.3 390.1l0.5 1.4M305.4 371.3l0.2 -2.0M372.7 342.2l-1.0 -1.7M219.5 357.8l-1.5 -0.1M350.3 358.1l-2.4 -0.8M219.3 376.3l-0.6 1.9M302.0 437.3l-0.8 -1.9M360.5 319.3l0.9 1.8M318.4 367.6l2.1 -1.4M377.6 383.3l-1.0 0.1M375.5 328.4l2.3 1.0M293.2 395.5l-2.3 0.9M287.1 339.2l-2.0 -1.5M258.9 343.4l-2.4 -0.6M386.4 396.6l0.7 1.9M256.2 396.5l-0.9 0.5M342.4 422.6l0.4 -0.9M350.7 394.7l1.3 -2.2M271.5 384.1l-0.6 0.8M346.8 415.1l-1.0 -0.2M339.3 364.4l1.8 -0.9M379.4 337.4l1.7 -1.0M348.4 407.3l1.1 -2.3M287.2 420.8l-1.7 -1.1M234.4 358.4l-1.5 -1.3M353.9 350.6l0.2 1.0M270.9 364.6l0.9 -0.4M383.2 343.2l-1.9 -1.6M288.9 381.8l-1.3 0.7M346.7 408.4l0.6 2.4M300.9 432.1l-0.6 -1.9M244.2 337.3l-0.1 -1.0M314.8 362.7l0.2 2.5M282.7 432.7l-0.0 -1.5M235.6 354.7l1.0 2.3M323.0 378.9l1.0 0.1M284.1 395.3l2.5 -0.2M346.8 435.2l-1.4 -1.5M245.5 335.5l-1.9 0.6M220.4 343.6l-2.0 -0.4M325.6 383.6l-2.5 0.2M354.6 443.6l2.0 0.2M354.2 318.8l1.3 -1.5M241.4 323.4l-1.4 -1.5M292.5 385.7l-2.1 1.3M284.2 355.9l0.3 -1.5M271.6 429.7l-2.5 0.2M231.4 331.3l-0.5 2.4M329.7 422.1l2.1 -1.4M323.6 422.0l-0.9 -1.2M372.8 346.0l0.5 1.4M362.4 415.3l1.5 -0.3M219.3 433.1l-0.6 0.8M288.5 431.5l0.5 1.4M355.4 351.0l2.4 0.8M347.7 333.6l-0.9 0.4M350.5 389.1l1.5 -2.0M305.1 389.6l0.1 -1.5M310.1 369.9l0.4 2.5M295.9 443.7l-1.9 1.6M325.5 319.1l1.0 1.1M278.7 373.5l2.0 -0.4M278.2 387.6l-0.1 1.5M336.6 333.3l1.8 0.9M317.3 421.8l-1.0 -1.7M315.4 432.4l-2.0 0.0M235.9 444.7l-2.0 -0.3M220.9 339.6l-0.4 1.4M352.9 381.7l-1.5 0.3M250.5 413.7l-0.8 2.4M313.3 393.2l-2.0 -0.4M348.4 391.6l-0.8 2.4M376.2 399.2l-0.9 0.4M358.8 356.9l-1.5 0.2M222.6 397.6l1.8 0.8M387.1 391.4l-0.5 1.4M333.8 329.0l-1.5 0.2M338.0 428.4l0.2 1.5M272.3 432.3l-1.5 0.3M235.1 431.3l-2.5 -0.1M317.7 353.3l1.8 -0.9M228.1 412.9l1.3 1.5M322.5 371.9l-0.3 -2.5M348.7 393.8l-0.2 -1.0M239.3 322.2l1.5 -1.3M271.1 340.6l-1.2 0.9M354.9 359.8l1.7 -1.8M352.0 368.7l-0.7 0.7M276.8 423.7l0.4 2.0M332.2 423.1l0.4 -1.4M350.1 353.2l1.7 1.0M248.8 381.3l1.7 -1.8M319.9 427.8l0.3 2.0M335.2 376.3l-0.3 1.5M255.5 398.1l-2.0 -0.4M374.3 383.7l-1.6 -1.9M280.7 351.8l-0.7 0.7M308.3 400.7l-1.0 2.3M275.9 392.3l0.8 1.3M266.1 345.2l0.0 -2.0M263.6 427.2l-1.7 -1.1M340.5 369.2l-0.1 -1.5M252.1 360.8l-2.5 0.2M376.1 388.2l0.2 1.0M224.6 384.1l-1.5 0.3M312.9 351.1l-1.8 -1.0M306.2 331.1l-0.6 -0.8M341.0 393.0l2.5 -0.3M327.9 381.5l-0.9 -1.8M232.0 405.2l-0.9 1.8M327.2 352.5l-0.1 -1.0M359.4 338.7l0.9 -0.5M297.7 402.9l0.7 0.7M259.5 442.3l2.2 -1.1M237.2 357.6l0.4 0.9M268.9 380.6l1.0 -0.2M292.6 369.4l-2.4 -0.8M368.9 345.5l-1.5 0.1M343.5 385.3l2.4 -0.8M228.8 406.2l-2.0 -0.4M278.0 400.4l-0.2 -1.5M281.1 319.2l0.2 -2.0M321.8 366.4l0.9 -0.4M386.7 340.0l-0.1 1.0M336.2 420.4l0.2 1.0M256.7 436.1l1.8 0.8M333.1 374.8l1.9 -0.5M377.8 342.3l2.1 -1.4M231.9 377.3l-2.2 1.2M377.9 411.4l-0.3 0.9M358.8 358.0l-0.2 2.5M354.9 387.3l-0.8 -1.3M221.5 371.6l-1.0 0.2M315.5 330.0l0.7 0.7M311.8 344.7l1.0 0.2M315.4 407.0l1.0 -0.2M373.8 368.5l0.2 -2.0M292.3 388.8l-1.4 -1.5M247.0 337.9l1.2 -1.0M232.5 325.7l0.7 1.3M270.4 348.3l-0.1 -1.5M246.9 445.8l1.0 1.1M270.8 435.0l0.5 1.4M345.6 441.7l-0.4 -0.9M349.6 406.9l-2.5 -0.2M246.9 344.9l-0.6 0.8M388.8 365.9l-0.1 1.5M358.4 329.2l0.1 1.5M239.6 444.7l-0.9 0.5M306.5 328.1l1.3 -2.1M376.8 397.5l0.0 -2.5M332.8 444.5l0.7 -1.3M350.3 417.0l-0.8 -0.6M283.8 416.1l-0.2 -1.0M368.5 370.5l0.1 -1.5M357.4 414.7l-0.5 1.4M288.5 335.0l-1.5 2.0M289.6 346.0l-1.5 1.3M255.7 362.5l-0.6 -0.8M344.3 416.5l-0.5 -2.5M300.0 332.6l-2.2 1.1M244.7 362.4l1.1 -1.0M305.6 386.2l-2.1 1.4M328.0 390.8l-0.1 1.5M294.0 358.1l-0.9 0.4M261.6 427.6l-1.7 1.1M217.2 346.9l-0.7 -1.3M327.9 374.5l-0.4 2.5M332.4 363.2l2.5 -0.5M293.2 323.9l1.5 0.1M289.3 387.8l1.0 0.3M332.7 319.1l2.4 -0.6M315.7 341.9l-2.5 -0.1M228.7 340.6l2.5 -0.3M287.4 402.0l-1.3 0.7M317.2 425.3l-1.9 -0.6M222.1 359.0l-0.3 2.0M252.7 342.9l2.0 1.6M381.7 328.0l-0.3 -2.0M302.9 431.7l0.1 -1.5M241.5 404.2l-0.9 -0.4M368.3 361.5l-1.9 -0.5M275.5 327.5l-1.5 -0.1M278.1 335.6l-0.8 -2.4M313.2 374.6l-0.5 1.4M275.8 366.8l-1.6 -1.2M225.1 343.3l0.7 -0.7M269.9 429.1l1.7 1.8M350.5 424.8l-1.9 0.6M322.5 402.7l0.9 0.4M256.5 430.7l-0.9 -0.3M305.4 372.0l1.3 -0.8M372.7 362.6l0.3 -0.9M378.1 327.8l0.8 1.3M384.4 402.3l-0.6 -1.9M302.0 364.7l1.0 0.2M297.4 418.1l-1.6 1.9M252.7 350.6l-1.8 0.9M359.7 412.1l1.0 1.1M327.6 417.1l-0.1 1.0M340.0 394.4l1.8 -0.9M356.3 349.3l-0.5 0.9M352.5 444.6l1.9 -0.5M386.3 403.7l1.7 -1.8M263.9 379.1l-0.9 0.3M378.0 419.7l0.8 -1.8M349.0 381.0l-2.0 -0.2M291.2 345.1l-1.3 -0.8M361.0 363.6l1.5 -0.2M315.6 353.1l-0.0 1.0M351.8 375.1l-1.4 -0.7M268.2 418.3l1.5 -0.2M307.7 445.7l-0.8 0.6M267.6 418.7l1.6 -1.2M338.6 370.5l0.8 1.8M338.9 435.5l2.2 1.2M277.9 405.5l2.5 0.3M338.5 389.7l1.1 2.2M228.3 442.8l1.0 0.3M376.7 356.6l0.3 -1.0M255.1 385.0l1.1 -2.3M271.7 445.5l1.4 -0.4M282.5 394.1l1.0 2.3M373.7 436.8l1.1 2.2M385.5 366.8l-0.9 0.4M378.1 365.9l-1.5 -0.4M268.8 397.2l-0.8 0.5M340.7 397.0l2.4 0.7M376.6 377.2l-1.0 -0.3M305.8 353.8l-1.3 2.1M318.1 445.8l-0.2 -1.5M250.6 394.4l0.3 -2.0M243.7 386.4l-1.2 2.2M308.8 345.6l0.9 0.5M373.1 400.0l-2.0 0.1M305.4 365.1l0.2 -1.0M238.6 425.1l-1.5 -0.1M292.0 401.5l-0.5 1.9M350.3 402.7l2.3 -0.9M234.3 364.7l1.7 -1.1M264.8 344.4l-1.3 0.8M318.6 423.7l2.3 -1.0M339.6 370.3l-0.7 -0.7M220.5 389.0l-1.0 -0.1M303.9 392.3l1.0 0.0M355.0 423.1l0.1 2.0M255.3 394.2l-0.7 1.9M314.6 407.8l-0.8 0.6M286.5 344.7l0.4 1.4M334.0 381.8l2.0 0.0M361.8 360.4l0.5 -2.4M283.1 372.4l-1.7 -1.0M280.3 327.5l-1.5 0.1M218.7 331.2l0.4 -1.4M299.8 394.6l1.3 -0.7M260.8 381.9l-0.6 2.4M305.1 328.9l1.0 0.2M329.3 429.2l-1.2 -1.6M310.0 422.6l1.9 0.7M295.0 328.1l0.4 -0.9M314.8 385.8l0.2 -1.0M312.1 349.4l-2.4 -0.8M219.0 390.6l-1.0 0.0M288.5 338.1l0.6 -2.4M297.3 396.5l1.5 2.0M274.4 333.5l-1.4 -0.5M365.1 357.6l-0.1 1.0M222.7 339.2l-2.2 -1.2M339.0 329.5l0.1 2.0M295.6 425.5l2.0 -0.3M276.5 445.3l1.8 -1.8M283.4 368.7l0.5 -0.9M234.8 418.9l-1.0 -0.1M350.1 427.9l-2.3 -1.0M322.6 396.2l-1.3 -0.7M288.4 328.7l-1.3 -0.7M346.5 375.2l0.5 0.9M298.4 370.4l-0.4 1.5M300.9 334.2l-0.3 -1.5M278.9 369.8l-2.3 1.0M383.8 444.5l-0.6 -2.4M228.3 423.8l-2.2 1.1M247.4 384.4l1.9 1.6M332.0 373.0l-1.8 -1.7M267.4 424.5l-2.0 0.4M255.0 445.1l0.4 -0.9M368.3 338.3l0.3 -2.5M275.4 350.1l-1.7 1.8M306.5 394.5l2.0 -1.5M361.4 422.9l-1.0 2.3M281.8 377.8l-1.7 1.1M385.7 439.2l1.5 -0.3M380.4 340.7l-0.7 -0.8M230.8 340.2l0.1 1.5M314.9 365.0l1.8 1.8M265.9 336.9l1.9 -0.6M264.4 388.8l-2.3 -1.0M242.7 367.7l0.4 -2.5M244.9 416.6l-1.9 0.5M350.5 428.8l1.9 1.6M358.8 379.0l1.0 -0.2M265.9 394.0l1.3 2.1M346.0 426.5l0.4 -2.5M313.9 365.0l-1.2 1.6M235.0 324.8l0.7 0.7M252.3 323.2l1.5 -0.1M222.9 341.2l2.5 0.4M337.9 395.2l2.4 0.7M338.1 384.0l-1.5 -0.1M325.7 388.4l-1.0 0.0M377.8 417.8l-2.0 1.5M341.1 380.7l-1.6 1.2M275.1 388.0l1.9 1.6M331.1 361.1l1.0 -0.2M255.6 383.6l1.1 -1.0M349.2 350.9l-2.0 -0.3M240.6 442.7l0.2 1.5M294.8 372.0l-1.1 1.0M317.1 375.6l1.0 -0.1M340.5 363.7l0.1 -2.0M245.2 432.8l1.5 0.1M335.5 400.9l-0.6 -1.4M244.7 430.4l-0.6 -0.8M305.8 445.9l1.0 -0.1M311.2 331.7l-1.0 0.0M381.4 361.3l-1.0 0.1M230.9 415.7l0.0 1.0M276.3 424.8l-0.9 -0.3M358.1 398.0l1.2 -0.9M237.2 408.7l0.9 0.4M284.2 362.1l2.0 -0.2M228.1 326.1l1.5 -0.3M334.7 421.4l1.5 -0.2M385.9 394.1l0.8 0.5M336.1 393.8l-0.6 -0.8M327.0 377.3l1.0 -1.2M334.7 352.6l2.0 0.0M267.4 398.0l-1.2 -1.6M305.5 412.7l0.6 -1.4M263.7 411.5l-1.3 -1.5M282.7 321.0l-0.2 2.5M272.9 426.4l0.8 -0.6M238.5 411.2l-0.8 1.8M371.4 438.3l0.5 1.9M280.6 418.1l-1.0 0.0M256.2 330.2l-1.5 1.3M235.5 399.1l2.5 -0.2M318.7 444.3l-0.4 2.5M376.1 328.4l-0.6 1.4M371.5 429.1l2.2 -1.3M315.4 428.5l-0.8 -0.6M215.7 444.3l-2.5 -0.3M376.0 381.6l-1.7 -1.0M300.2 358.1l-1.8 -1.7M294.1 354.7l1.6 -1.9M330.4 346.8l-1.0 0.1M262.8 342.4l0.1 -1.0M272.5 418.9l0.7 -1.3M343.2 428.5l-2.0 -0.3M237.9 366.2l-1.9 -0.7M389.2 359.1l0.3 -1.0M372.6 396.5l-0.8 1.9M284.8 355.4l-0.5 0.9M267.3 409.1l-2.5 0.3M320.5 336.5l2.5 0.3M292.0 445.0l0.8 0.6M370.5 324.5l-0.3 -2.0M367.5 392.1l0.5 1.9M228.1 430.1l1.1 1.7M361.4 330.7l1.5 -2.0M353.5 353.3l0.5 -2.4M295.0 412.1l-0.7 1.3M323.5 390.0l-1.5 2.0M299.4 354.9l1.9 1.7M379.7 401.2l0.8 -1.3M351.4 337.4l-0.0 1.0M386.1 321.0l1.5 1.3M342.3 330.0l-0.6 2.4M352.3 345.7l1.0 -0.1M299.7 428.1l-0.6 0.8M384.0 427.2l1.9 -1.6M355.1 384.8l-0.6 2.4M279.3 443.6l1.9 -0.7M364.1 378.6l0.7 -0.7M336.0 388.9l1.0 -0.1M300.7 320.9l-1.3 -0.8M234.3 388.8l1.7 -1.1M225.4 441.7l0.8 -1.8M336.2 376.8l-1.9 -1.7M332.0 339.3l0.0 -2.0M247.8 413.1l1.1 -1.7M387.2 339.7l-2.0 0.3M224.0 341.8l-0.8 1.3M238.0 351.8l-0.6 1.4M332.6 405.1l-1.1 1.7M386.5 391.2l-1.2 1.6M325.5 436.4l-0.2 2.0M256.9 410.0l1.3 0.8M307.6 374.3l2.3 -0.9M380.4 322.9l-0.9 -0.4M310.4 352.9l-0.1 1.0M340.4 414.4l1.9 0.5M317.7 357.4l0.2 -1.5M315.1 376.8l1.2 0.9M300.9 413.8l1.5 -1.4M259.9 346.5l-2.0 -0.1M236.4 351.6l0.5 -1.4M317.5 373.1l-0.7 0.7M291.9 327.2l2.2 -1.2M253.4 444.4l1.5 -0.3M334.7 417.4l0.5 -1.4M362.7 385.0l-2.5 0.2M353.0 355.3l-0.7 1.9M308.9 420.5l2.0 -1.6M258.5 319.0l1.1 -2.3M281.7 362.3l-1.6 1.1M332.8 371.7l1.0 -0.1M316.6 400.4l0.2 -1.0M224.6 368.0l-1.7 -1.0M312.3 391.0l-1.0 2.3M281.4 349.8l-1.4 0.6M387.4 396.0l-2.0 -0.3M233.7 438.4l-1.2 1.6M254.5 393.1l-1.5 -0.3M339.8 406.7l-1.0 -2.3M239.0 327.2l2.5 0.4M376.5 392.3l-0.0 -1.0M302.2 356.0l-2.0 -0.3M386.8 349.9l-1.5 0.4M231.7 358.3l-0.7 0.7M306.6 403.9l0.1 -1.0M334.6 333.6l-0.5 -0.9M283.4 395.1l0.1 2.5M220.7 393.2l1.3 2.1M285.9 347.6l-1.4 -2.1M377.6 436.6l1.0 -0.1M369.6 343.9l-0.9 -0.4M384.7 387.3l-0.3 -1.5M288.7 365.7l-0.5 0.9M215.5 372.4l-0.8 -1.2M376.9 388.1l-0.6 -2.4M374.5 373.1l-1.5 0.1M259.3 411.9l1.5 -0.4M288.9 366.3l0.9 2.3M231.9 381.9l0.4 -2.5M338.1 399.5l-0.1 -1.5M298.5 327.5l1.5 0.0M235.5 333.0l-0.5 1.4M299.0 344.3l1.8 -1.8M266.4 440.6l0.1 -1.0M360.5 428.1l2.0 0.0M254.0 348.0l1.4 -0.6M277.8 340.7l-1.2 0.9M359.7 349.6l-2.5 0.5M228.1 378.1l-0.0 1.5M317.8 360.8l-0.2 -1.5M267.8 352.0l1.0 -0.2M312.9 344.6l-0.5 1.4M323.8 370.5l-1.0 0.1M295.8 396.1l1.0 -0.1M387.2 325.0l-2.4 0.5M345.1 345.9l0.5 -2.4M304.1 374.8l0.9 1.2M262.0 438.0l-1.3 -0.7M275.2 323.4l-2.3 -0.9M250.2 327.5l0.7 -2.4M304.4 434.2l-2.1 -1.4M313.6 396.1l-2.3 -1.1M307.9 344.4l-0.8 1.8M371.6 376.8l0.0 1.0M348.5 336.3l-1.8 -0.8M375.7 387.0l2.0 0.4M346.4 318.3l-1.5 0.1M300.3 439.8l0.3 -0.9M280.2 332.0l1.4 1.4M348.3 383.3l-2.5 -0.1M251.6 385.3l0.4 -1.5M338.0 438.0l0.5 1.9M321.3 343.0l1.4 -0.5M245.3 396.5l1.0 0.2M322.1 329.4l0.6 -2.4M306.4 395.5l-0.4 2.5M344.8 441.5l-2.4 0.5M285.1 405.3l0.2 -1.5M239.3 330.8l-1.7 -1.8M348.2 346.3l1.3 0.8M216.8 412.3l0.9 -0.4M284.6 398.8l1.0 0.2M229.7 392.3l2.5 0.1M317.8 429.8l1.0 0.2M380.4 366.5l1.8 -1.0M273.6 421.4l0.2 1.5M335.1 387.4l-2.0 -0.0M362.2 384.3l0.9 0.4M289.5 390.8l0.8 1.8M257.1 342.0l2.0 -0.1M248.1 436.0l-1.3 -0.7M353.3 436.9l1.9 -0.5M291.5 333.4l-0.6 0.8M292.0 333.4l0.3 2.5M233.8 380.4l0.8 -0.6M272.4 395.8l-0.6 -0.8M374.8 318.3l-2.0 -0.3M360.3 363.2l2.2 -1.2M357.9 343.4l2.0 -0.1M245.8 435.1l-1.7 -1.0M300.5 380.3l2.0 1.4M232.6 322.6l0.6 0.8M338.6 379.2l-1.8 0.9M335.8 386.4l-1.1 -2.3M270.7 415.6l-0.6 0.8M386.9 330.7l-0.8 0.6M240.9 384.5l0.3 -2.5M282.5 407.0l0.0 -1.5M388.4 435.7l-1.5 -0.1M235.1 337.0l-1.9 -0.7M319.7 351.4l-2.1 1.3M342.5 398.5l1.5 -0.3M299.9 359.9l-2.5 0.1M376.3 363.0l2.0 -0.3M266.2 415.6l-0.8 -0.6M304.4 390.8l-2.2 -1.2M341.0 337.2l1.3 -2.1M223.4 359.1l1.8 -1.7M365.1 335.9l-1.5 -1.3M253.2 346.6l-0.9 -0.4M281.0 394.2l-0.1 -1.0M224.3 366.2l0.8 -0.6M218.8 406.6l0.6 0.8M334.6 347.5l-1.3 -0.7M327.4 388.7l0.2 1.0M313.4 350.5l-0.6 1.4M373.2 423.0l-2.5 -0.2M282.7 380.6l0.6 0.8M269.2 351.2l0.3 1.5M370.4 381.1l0.7 1.9M280.5 379.7l1.1 -1.0M281.9 379.4l-1.5 0.3M311.4 338.6l2.2 -1.2M364.9 419.0l2.5 -0.1M320.7 439.6l0.7 -0.7M261.9 413.6l-0.7 -0.7M297.6 371.6l1.9 -0.7M226.5 392.1l0.3 1.5M345.5 424.0l0.9 -0.3M336.8 406.7l-1.2 0.9M359.4 416.6l-0.5 -1.4M223.4 343.6l-2.5 0.1M236.2 435.9l0.8 -0.6M275.3 437.1l-0.4 -2.5M255.5 324.0l0.3 2.0M263.6 348.2l-1.7 -1.1M342.7 375.9l-0.7 -0.7M216.2 386.7l1.7 -1.1M234.2 379.5l-1.4 0.4M318.4 355.2l1.5 0.1M342.3 335.3l0.5 0.9M348.8 365.2l-0.9 -0.5M381.8 335.0l-1.5 -1.3M372.4 328.6l0.4 0.9M323.1 320.7l0.5 2.5M275.2 403.3l-1.1 -1.0M375.0 396.1l-1.9 0.5M228.9 356.6l0.1 -1.0M286.0 394.3l1.2 1.6M371.8 339.0l-2.5 -0.1M289.3 371.1l0.2 -1.0M340.8 381.5l1.0 0.3M221.6 413.2l1.5 0.3M264.7 423.0l0.7 1.9M308.1 432.4l0.3 1.0M241.2 386.5l-0.9 0.4M373.4 365.8l0.7 -1.3M296.5 345.8l-1.0 -1.1M260.8 358.0l-0.0 1.0M328.1 357.9l2.0 -1.5M251.9 402.0l-1.0 0.0M333.4 398.7l2.4 -0.5M267.9 367.9l-1.0 -0.2M300.6 332.7l2.5 0.3M218.6 430.7l1.8 0.9M308.1 356.7l-1.7 1.0M244.3 364.9l2.5 0.2M294.3 434.4l0.6 1.9M278.8 431.7l-0.7 -1.9M234.6 402.0l0.9 -0.5M389.6 423.3l-1.5 -0.2M268.7 353.9l1.5 0.3M330.4 382.3l-0.1 1.0M333.8 378.6l1.5 -0.1M233.1 341.1l0.4 -2.5M246.9 430.6l0.6 1.9M318.6 381.2l-0.1 -1.0M329.5 325.0l-1.3 0.7M267.2 354.7l2.0 0.4M386.5 399.7l-1.5 -0.3M361.5 340.2l-0.2 -1.0M231.1 375.8l-0.6 -0.8M355.2 363.6l1.6 1.2M349.7 376.6l-2.5 0.1M368.8 375.3l-0.7 -1.3M359.2 347.9l0.9 -0.3M333.6 325.5l-2.2 -1.1M330.8 375.1l-1.3 0.7M368.3 421.0l-1.3 -1.5M310.2 332.1l1.0 0.2M334.3 379.7l2.4 -0.7M285.1 369.6l0.2 -1.0M299.8 428.1l2.5 0.3M377.1 416.2l0.7 0.7M289.4 433.6l-1.3 -2.1M373.9 435.1l1.6 -1.2M333.9 345.1l1.8 -0.8M320.4 354.2l-1.0 2.3M262.5 383.0l-0.2 -2.5M339.1 377.4l-1.3 -0.7M327.5 401.6l-1.0 0.1M321.8 362.1l0.8 2.4M319.0 357.7l-1.9 0.5M331.9 426.5l-0.2 -2.5M231.3 388.8l1.5 0.0M282.8 425.3l-0.8 -1.3M219.7 425.7l-2.5 -0.3M314.0 430.3l0.0 1.0M226.3 329.4l2.2 1.2M387.8 320.5l-1.5 -1.3M382.4 432.3l-2.0 0.4M225.2 424.5l-1.7 -1.1M327.0 360.5l-0.7 1.9M332.9 394.7l0.8 -2.4M252.5 411.1l1.6 1.2M221.7 338.1l-0.3 -2.0M250.8 349.0l0.6 -0.8M359.6 384.3l0.9 1.8M370.1 365.0l1.8 -0.8M300.6 436.6l-1.9 -0.7M216.2 416.9l-0.4 2.5M328.4 399.4l-2.1 -1.3M219.5 372.2l0.7 -0.7M349.5 399.1l1.4 0.4M251.2 374.2l-0.9 0.4M269.0 371.4l-0.3 -0.9M314.0 429.1l1.2 -1.6M224.0 423.4l1.4 -2.1M341.9 404.2l-2.1 -1.3M296.0 368.1l-0.7 -0.7M235.5 439.6l-2.0 -0.1M223.3 401.0l-1.3 1.5M339.0 435.1l0.7 0.7M216.5 324.7l-1.5 2.0M222.7 442.4l-1.3 -1.5M268.1 399.3l-0.9 2.3M281.1 339.9l0.5 1.9M297.6 392.1l2.3 1.0M286.8 430.5l1.3 -1.5M385.0 419.9l-0.8 2.4M219.7 336.6l-1.7 1.1M376.2 386.1l1.2 0.9M237.2 374.7l-0.8 1.2M345.2 402.7l1.4 0.6M229.2 337.2l-1.5 -0.1M389.7 367.6l-1.4 -0.5M337.1 417.5l-0.1 -1.0M308.4 369.7l-1.0 0.2M218.9 349.3l-0.0 2.5M349.5 356.6l1.4 2.1M241.4 375.3l2.5 0.1M381.8 351.7l-0.0 1.5M295.8 386.3l1.8 1.7M301.0 357.9l-1.6 1.2M330.3 361.1l0.2 1.0M341.2 335.2l-0.2 1.0M228.8 408.1l-1.2 -1.6M372.7 336.3l1.8 -0.9M303.6 325.4l0.9 1.2M340.5 383.4l-0.9 -0.4M247.3 340.4l2.3 -0.9M286.4 429.1l1.8 -0.8M382.9 373.8l-1.0 -2.3M264.3 408.7l1.0 -0.3M355.4 414.2l1.2 0.9M341.9 344.9l-1.8 0.9M307.8 353.5l0.9 -1.2M298.6 367.3l-0.7 -0.7M303.4 416.9l0.3 -1.5M231.4 335.8l1.5 -0.1M374.7 330.5l-0.2 -1.5M262.2 338.6l-2.0 0.2M226.3 403.3l2.1 1.3M301.6 343.6l-0.9 -0.5M357.6 348.9l-0.7 1.3M378.9 353.1l-1.0 -2.3M363.8 437.7l-0.8 0.6M378.6 407.2l-1.0 0.1M343.2 360.6l-1.1 -1.7M228.9 359.5l-1.1 2.2M316.2 319.4l-1.3 -1.5M311.5 441.9l-2.2 1.1M310.0 373.8l2.1 1.4M299.2 333.5l0.1 2.5M313.1 365.9l1.5 -1.4M323.6 348.2l-0.8 -1.8M257.1 343.7l0.4 -0.9M379.5 434.1l1.4 0.4M371.6 416.5l0.3 -2.0M235.8 337.7l0.1 2.0M339.2 393.2l1.1 -1.7M269.2 363.0l-1.0 -1.2M332.4 396.7l0.1 -1.5M321.0 340.1l0.8 -0.6M375.2 357.5l0.7 0.7M334.5 345.4l1.4 -0.5M318.2 334.8l0.1 1.5M291.6 388.6l1.0 1.1M227.6 389.3l1.3 -2.1M337.7 358.4l2.3 1.1M372.3 386.9l2.5 0.2M388.8 392.9l0.8 -1.3M368.8 418.5l-1.3 -0.7M311.2 333.0l1.9 0.5M325.6 343.7l0.7 -1.9M344.9 439.1l-0.5 1.4M349.2 422.7l-1.1 1.7M343.5 375.4l-1.2 -0.9M219.0 402.2l-0.9 -1.2M367.5 432.3l-1.5 -0.3M349.9 397.5l-0.4 2.0M338.4 389.5l1.2 -0.9M262.8 349.1l0.2 1.0M250.8 429.4l0.4 -0.9M335.7 341.5l-0.6 1.4M351.2 381.9l-0.4 2.5M361.7 394.2l-1.5 1.3M243.2 398.4l-0.6 1.4M251.1 379.5l1.0 -0.1M325.5 440.1l-1.0 -0.1M263.7 353.1l0.9 -0.5M284.4 431.5l-0.9 -1.8M370.2 406.7l-1.2 -2.2M260.1 363.0l-2.4 0.6M361.0 405.6l-1.2 1.6M377.5 371.6l1.7 1.1M389.8 384.2l2.0 -0.2M256.6 409.6l0.9 0.4M239.1 338.7l-0.9 1.2M308.1 401.5l-1.3 0.8M252.7 439.0l1.9 0.5M334.7 348.5l1.2 1.6M298.7 368.1l1.5 -2.0M217.1 426.9l1.8 -1.7M291.0 368.0l0.1 -1.0M242.6 387.0l0.3 0.9M290.3 355.5l0.9 -0.4M371.3 404.6l1.9 -1.6M233.7 370.9l0.7 0.8M217.9 324.5l2.0 0.2M389.8 321.4l-0.2 2.0M261.5 340.0l-1.1 1.7M288.8 393.1l-0.8 -0.7M328.1 343.3l-2.5 0.0M248.4 420.2l1.4 -0.5M324.3 325.7l1.0 0.2M227.6 333.2l-2.0 -1.5M316.6 426.7l-2.5 -0.3M245.9 351.1l-1.5 -0.1M338.3 433.6l-0.7 -1.3M289.2 337.6l0.0 2.5M237.9 329.6l0.4 0.9M339.8 363.7l-1.3 1.6M278.8 431.5l0.5 2.4M224.4 357.7l-1.3 -0.7M382.8 423.2l-1.6 1.2M265.7 428.7l0.8 -1.8M341.0 399.1l-0.5 -1.9M385.9 366.4l-2.5 -0.2M374.4 441.9l0.6 -1.9M243.7 360.9l-1.5 -2.0M338.3 354.1l-0.7 -1.9M337.7 334.2l-1.2 0.8M363.5 360.7l-1.6 -1.9M287.1 353.8l0.8 0.5M290.5 381.8l0.2 1.0M361.7 355.2l1.0 -0.2M343.2 319.4l-0.8 2.4M381.8 328.6l1.1 1.7M360.9 406.3l-0.6 -1.4M296.7 330.6l1.5 0.2M249.9 350.9l0.6 0.8M215.1 388.0l0.9 1.2M215.6 385.3l-1.7 -1.1M315.3 357.2l-1.0 -1.7M366.8 410.2l1.1 1.7M268.7 365.5l0.0 1.5M355.2 388.6l1.0 2.3M221.3 330.7l-1.0 0.2M255.3 332.4l2.2 -1.3M291.6 426.1l1.0 -0.2M274.3 425.6l-2.2 1.2M311.7 319.1l-0.5 2.4M259.1 387.9l0.6 1.4M226.2 444.3l-1.0 0.2M368.7 327.1l-2.1 -1.4M321.5 342.5l-1.5 -0.2M341.1 419.5l1.8 -0.8M386.8 324.5l-0.2 -1.0M311.6 440.7l1.9 -1.6M288.0 439.2l-0.5 1.4M242.6 391.1l0.2 -2.5M263.4 406.8l-1.1 1.0M351.6 360.2l-0.9 -0.4M320.8 390.4l0.8 -0.6M329.8 337.7l-0.3 1.0M220.9 418.5l-0.7 1.3M280.1 395.6l0.3 1.5M296.8 341.0l1.9 0.7M261.1 445.9l2.3 0.9M272.8 329.7l1.8 0.8M354.1 394.4l1.9 0.6M358.0 345.6l1.1 -2.2M291.6 416.7l1.2 -1.6M246.5 325.3l1.0 -0.1M342.1 365.2l-1.6 1.9M263.9 368.4l1.4 -0.6M291.8 382.2l1.4 -0.4M298.0 335.4l-0.6 0.8M283.4 439.1l-1.6 1.2M388.3 341.6l-0.9 -0.4M312.2 359.0l-1.7 -1.8M252.7 343.7l0.2 1.5M324.4 359.9l0.9 -0.4M347.6 318.7l1.6 -1.9M344.2 341.9l-0.7 1.3M284.3 386.0l-1.0 0.1M328.7 369.2l-0.4 2.5M339.5 372.7l-0.9 -0.5M324.4 429.5l-0.8 0.5M298.8 352.1l-1.0 -0.1M374.3 416.2l0.9 1.2M331.5 356.9l-0.7 1.3M388.4 382.3l-0.9 -0.5M310.5 380.4l-0.8 -0.6M387.9 440.4l0.5 -1.4M298.1 325.6l0.2 1.5M362.6 399.3l0.7 -1.3M381.4 337.6l-0.4 -0.9M286.5 369.6l-2.5 0.1M362.0 441.5l-1.4 -0.5M219.2 409.7l-1.1 -2.3M243.7 427.3l1.0 0.1M294.9 420.7l1.4 -0.6M285.8 347.6l0.4 0.9M386.2 379.1l-0.5 1.9M369.7 351.4l2.5 -0.1M359.8 406.5l1.2 -0.9M256.1 385.0l0.9 0.4M244.7 424.4l-0.6 0.8M372.6 338.4l-1.9 0.8M369.7 413.6l-0.4 -2.5M297.9 319.9l1.5 -2.0M227.8 364.2l0.8 1.3M362.1 336.8l-0.7 -2.4M386.7 433.0l1.2 -0.9M314.7 430.9l1.0 2.3M298.0 402.8l-0.7 -1.3M337.3 433.2l0.6 -0.8M377.7 331.6l1.7 1.0M286.3 413.8l0.9 -0.4M307.1 375.7l-1.8 1.7M294.9 377.8l1.5 2.0M261.2 338.9l1.2 2.2M364.2 357.4l-1.6 1.1M297.6 413.3l2.5 -0.3M346.9 365.8l1.0 -0.2M256.2 361.6l1.0 -0.3M294.8 393.1l0.9 -0.5M289.7 415.5l-0.4 -0.9M386.2 327.7l-1.4 -0.6M334.6 383.6l1.0 -0.3M359.6 382.8l-0.4 1.5M368.2 420.2l-1.8 0.8M220.2 424.8l0.3 -2.0M320.7 399.6l-2.5 -0.1M251.5 420.1l0.9 1.2M369.2 431.0l0.8 1.3M335.3 326.3l0.7 1.3M304.3 351.8l-1.0 1.1M312.3 385.6l0.0 -1.0M305.7 325.9l0.6 0.8M375.1 322.3l0.9 0.4M235.1 338.2l-1.0 0.0M309.1 437.9l1.8 -0.9M320.1 363.0l0.6 0.8M290.3 401.1l0.7 -2.4M274.7 441.8l-2.0 0.1M232.4 402.8l-2.5 -0.3M291.6 363.1l0.6 -2.4M240.2 433.9l-1.0 -1.1M270.2 433.9l1.5 0.2M360.3 346.2l0.3 -2.0M341.0 398.9l-0.4 2.5M355.1 420.1l2.0 0.2M283.6 386.0l2.4 0.7M218.9 387.9l-0.0 1.0M259.3 375.0l0.2 1.0M279.6 378.1l0.7 1.9M381.8 325.4l-1.9 1.7M263.1 439.0l-0.9 0.4M308.1 411.2l0.8 -0.6M349.1 362.3l-0.4 0.9M292.2 374.1l-1.6 2.0M376.5 355.5l0.8 -1.3M369.4 345.5l0.9 2.3M356.6 394.3l0.9 0.5M223.1 355.4l1.3 -1.5M238.3 366.9l1.0 1.2M237.4 360.0l2.2 -1.2M382.0 377.8l2.5 -0.2M355.0 319.9l1.7 -1.0M288.4 398.2l-2.5 -0.2M296.8 320.7l-1.6 1.9M304.6 444.6l-1.5 2.0M319.3 323.8l-1.2 1.6M324.0 392.9l1.5 0.0M308.7 353.4l1.2 -2.2M318.3 336.7l-2.0 1.5M368.3 438.3l-0.9 1.2M279.6 384.5l-0.4 -0.9M242.1 346.8l0.1 2.5M265.7 401.7l-0.7 -1.9M246.1 431.4l0.8 -1.8M220.2 420.3l1.6 -1.9M299.1 353.7l-1.1 -1.7M385.4 366.9l-0.9 -1.2M244.6 436.2l0.5 -0.9M227.0 361.6l-0.1 -2.0M335.0 424.6l0.2 1.5M351.2 357.1l-2.0 -1.5M280.5 340.4l0.8 0.5M351.9 380.8l0.9 -1.8M219.4 384.6l-2.5 -0.3M341.5 319.4l-1.9 0.8M313.8 331.7l-1.4 -1.4M233.6 399.5l-0.4 -2.5M352.7 352.9l-0.9 0.4M352.8 436.6l-1.7 -1.1M299.7 322.3l-0.3 -2.0M278.6 377.2l0.6 -1.9M376.8 346.8l-2.0 -1.5M233.9 346.6l1.9 -1.6M229.5 392.7l1.4 1.4M354.7 444.9l2.3 1.0M287.9 330.4l2.4 -0.8M367.9 369.1l0.9 -0.4M347.3 430.4l-1.0 -0.2M232.4 437.6l-0.6 -2.4M352.5 320.8l1.8 1.8M241.2 433.8l-1.8 -0.8M249.0 349.4l-1.5 -2.0M261.7 438.1l1.5 -2.0M254.3 416.8l-0.8 -0.6M339.5 337.0l0.4 -0.9M334.6 346.5l1.4 0.5M366.7 384.2l-0.9 1.2M242.8 418.8l-1.9 -0.5M273.4 385.3l1.0 -2.3M305.2 401.4l-1.5 -0.0M255.6 374.8l-1.4 2.1M307.3 393.1l0.7 1.3M238.0 432.3l-1.4 -0.6M371.5 370.6l1.0 1.2M340.8 368.2l0.9 -1.2M285.5 371.0l1.0 -1.1M356.2 387.6l0.7 2.4M242.5 345.1l0.5 -1.4M307.4 424.4l1.9 0.7M333.9 357.7l-2.3 -1.0M282.2 369.3l-0.0 -1.0M339.0 342.4l2.2 -1.2M362.0 425.3l-2.5 -0.0M364.4 342.2l1.2 0.9M317.4 373.7l1.5 -2.0M225.3 382.7l-2.2 1.2M366.5 354.2l-1.2 -0.9M375.0 356.5l-0.7 1.3M301.6 430.9l-1.4 -0.6M371.3 423.9l-2.1 -1.4M322.8 391.7l0.1 -1.5M277.8 378.1l-0.6 -1.9M291.3 349.1l0.8 -1.2M343.9 378.0l1.0 -0.2M231.9 399.9l-0.2 -2.5M279.5 426.5l-1.2 1.6M339.1 352.3l-2.3 1.0M322.6 445.8l-1.0 -0.2M272.1 351.3l0.7 -2.4M274.2 363.7l-0.3 0.9M257.6 328.1l-2.0 -1.5M225.0 437.4l-2.2 -1.1M291.0 423.6l-1.4 0.5M250.0 427.3l-1.3 0.7M344.9 343.3l0.2 1.0M316.3 392.4l-2.4 0.8M242.6 442.0l0.6 -2.4M228.7 428.0l2.0 -0.1M296.2 415.3l0.6 0.8M257.0 369.1l1.0 0.1M269.5 359.2l0.2 -2.5M267.4 411.0l-1.5 0.1M310.9 332.3l-2.1 1.4M374.5 363.9l0.3 1.0M226.1 355.5l0.4 -2.5M236.8 320.0l0.7 -0.7M238.0 333.2l-1.0 -0.1M369.5 349.9l0.9 -1.2M332.4 358.6l1.3 1.5M322.6 349.0l0.5 -0.9M215.3 377.8l-0.9 0.3M325.2 376.3l-2.3 1.1M382.5 441.9l-2.2 -1.3M228.9 445.0l-0.8 -0.6M354.7 372.9l-1.4 -0.5M342.6 365.1l0.5 0.9M251.9 424.8l1.4 -0.5M345.8 374.8l0.5 1.9M223.6 353.1l-0.4 2.0M286.2 393.2l0.4 -2.0M271.0 375.9l0.5 -1.4M317.1 351.1l0.4 -2.5M240.8 370.7l0.1 -2.0M367.4 410.8l-2.0 -0.4M380.9 371.5l-0.7 0.7M315.7 443.6l-0.5 -0.9M223.1 327.8l-2.0 -0.1M347.4 392.0l-0.7 -0.7M364.1 337.3l-2.0 -0.4M352.3 345.7l-0.6 -0.8M375.5 420.2l1.7 1.0M276.9 331.8l-0.1 -2.0M224.9 350.8l1.2 0.9M231.6 319.6l1.9 -0.5M283.8 324.0l1.3 -2.1M363.6 338.8l1.5 1.4M260.9 387.0l-0.9 -0.4M285.1 340.7l0.0 1.5M368.1 332.3l-1.0 -2.3M329.8 326.3l-2.4 0.7M248.6 395.8l-0.8 -0.5M339.6 356.2l-1.5 -1.4M333.8 344.2l-1.0 1.7M225.0 434.1l-1.0 -1.2M366.8 355.2l-0.7 1.3M299.7 435.2l-1.8 -0.8M363.3 402.6l-1.8 1.7M322.7 419.9l-2.5 0.0M255.4 401.0l0.3 1.5M228.2 419.4l1.2 1.6M305.4 386.4l1.4 0.4M290.8 410.8l-1.7 -1.8M296.7 354.9l1.0 -0.1M230.9 330.3l1.3 -0.7M264.1 386.3l-1.8 0.8M341.7 403.8l0.9 -1.2M298.9 438.2l-0.3 1.0M243.2 363.5l1.0 -0.2M330.0 409.4l-1.3 -1.5M304.1 349.5l2.0 1.5M252.8 339.5l1.8 -0.8M341.6 352.0l1.7 1.1M300.6 344.4l-2.5 -0.2M339.0 385.5l0.9 0.4M347.1 340.6l0.1 -1.0M290.7 368.9l-0.5 -1.4M284.5 387.6l-1.5 -0.2M302.2 334.6l-0.0 -1.5M335.4 359.7l-1.2 2.2M334.3 393.2l1.5 -0.3M314.0 347.7l1.0 -2.3M372.3 418.4l-0.6 -0.8M368.2 384.3l2.4 0.6M369.5 342.4l-1.7 1.0M372.1 416.5l1.5 0.2M251.0 324.8l-0.8 -0.6M361.5 347.0l2.5 0.1M351.9 344.0l0.6 0.8M356.1 334.0l-0.6 -2.4M249.3 436.5l0.5 -1.4M339.4 412.0l-0.9 -1.2M383.3 351.3l-0.8 0.6M293.9 416.8l1.5 0.3M324.5 367.0l-0.9 1.8M262.3 341.4l2.5 0.3M256.9 430.9l1.5 -1.3M306.5 320.1l-1.8 0.8M329.8 368.8l2.4 0.7M226.4 372.0l1.1 1.0M258.7 415.7l0.3 -2.5M336.8 331.4l-2.4 -0.8M367.5 323.8l-1.2 -1.0M299.8 379.7l1.0 -1.1M320.1 425.8l-1.3 0.7M347.1 414.7l-2.5 0.1M292.3 378.7l0.5 -0.9M383.2 373.6l1.6 -1.3M328.6 412.3l0.6 0.8M375.2 343.7l0.5 0.9M347.9 339.9l-1.5 -0.0M276.5 418.4l1.5 1.3M327.0 364.7l-0.7 0.7M317.6 355.2l1.9 -0.6M352.0 333.3l-0.7 2.4M304.7 349.5l1.5 -0.2M223.0 408.8l1.4 0.5M324.3 421.8l0.3 1.0M306.7 320.4l0.9 1.2M384.0 400.5l2.0 -1.5M311.2 360.0l0.4 -0.9M280.9 356.5l1.4 0.4M288.3 348.2l1.8 1.8M301.1 400.6l1.4 -0.4M277.7 346.8l2.5 -0.3M343.2 413.4l-1.3 -0.8M299.2 396.6l-1.0 1.1M333.7 346.5l1.9 0.7M293.1 336.8l0.8 -1.8M327.7 356.1l-0.6 1.4M327.8 334.5l0.6 -1.4M302.7 346.7l0.9 0.4M358.2 357.5l2.2 -1.2M280.2 378.6l-1.0 -0.2M304.8 368.0l-2.0 -0.3M336.4 406.4l0.8 -0.6M325.6 323.0l-2.0 0.0M295.0 375.2l0.7 -1.9M317.3 443.9l-0.5 1.9M283.7 352.9l-2.5 -0.1M215.5 376.4l-1.5 -0.2M330.9 380.1l1.0 -1.2M350.0 407.5l1.4 0.5M298.5 422.4l-1.9 -0.7M259.2 442.1l-1.3 0.7M262.7 415.6l-0.7 0.7M325.8 427.3l-0.8 -1.2M326.8 351.6l-1.0 0.3M300.3 358.5l1.5 -1.3M378.0 404.3l-0.9 -1.2M286.6 321.0l1.5 -1.4M274.6 365.0l1.2 -0.9M288.1 398.4l2.4 -0.6" stroke="#dcdae6" stroke-width="1.5" stroke-linecap="round" filter="url(#bl)"/><path d="M378.7 422.2h1.6M257.1 404.6h1.6M281.4 397.3h1.6M354.5 352.1h1.6M257.3 336.9h1.6M240.4 444.5h1.6M362.0 337.6h1.6M233.6 330.3h1.6M327.2 415.7h1.6M305.5 352.4h1.6M262.2 348.4h1.6M310.2 323.4h1.6M367.6 416.4h1.6M284.2 436.2h1.6M371.1 389.9h1.6M222.0 390.1h1.6M269.8 419.7h1.6M315.1 418.9h1.6M255.0 350.3h1.6M256.0 363.9h1.6M308.6 376.8h1.6M384.1 400.6h1.6M324.7 354.5h1.6M344.8 321.6h1.6M320.5 444.3h1.6M234.6 428.8h1.6M262.2 361.4h1.6M282.9 365.0h1.6M378.0 376.0h1.6M278.7 327.7h1.6M378.6 383.2h1.6M388.6 346.8h1.6M272.6 389.1h1.6M370.7 425.0h1.6M360.3 326.7h1.6M300.1 383.2h1.6M343.4 339.4h1.6M288.2 406.9h1.6M216.5 375.7h1.6M294.1 434.6h1.6M388.7 413.5h1.6M320.4 430.6h1.6M339.0 328.6h1.6M304.7 324.5h1.6M246.9 415.4h1.6M377.2 332.5h1.6M336.9 413.3h1.6M383.3 402.8h1.6M343.4 396.3h1.6M384.3 328.2h1.6M288.1 362.4h1.6M386.8 438.1h1.6M268.2 340.2h1.6M313.9 350.0h1.6M385.4 407.2h1.6M351.4 362.0h1.6M308.8 392.0h1.6M343.2 383.2h1.6M286.8 341.8h1.6M255.5 414.7h1.6M330.1 397.7h1.6M369.6 336.7h1.6M365.2 364.6h1.6M280.9 441.5h1.6M277.4 350.7h1.6M382.1 412.0h1.6M297.7 400.8h1.6M233.3 355.3h1.6M307.4 417.8h1.6M375.6 440.5h1.6M366.2 427.2h1.6M333.0 397.5h1.6M235.1 402.3h1.6M362.4 368.2h1.6M236.0 343.9h1.6M371.4 429.2h1.6M265.3 340.2h1.6M341.6 369.9h1.6M263.9 433.3h1.6M240.7 398.2h1.6M383.3 331.2h1.6M319.0 328.7h1.6M322.7 327.8h1.6M311.9 392.8h1.6M349.1 368.2h1.6M238.1 432.8h1.6M327.8 403.2h1.6M302.4 436.7h1.6M309.5 348.5h1.6M298.0 409.9h1.6M297.5 373.5h1.6M270.2 353.5h1.6M278.8 362.4h1.6M336.4 393.3h1.6M216.2 363.7h1.6M215.0 409.5h1.6M261.1 426.8h1.6M329.0 402.9h1.6M353.2 393.6h1.6M344.0 418.1h1.6M227.3 404.9h1.6M362.6 351.0h1.6M281.4 428.6h1.6M377.6 348.3h1.6M302.1 380.5h1.6M316.5 344.1h1.6M282.0 427.3h1.6M256.7 428.0h1.6M384.3 328.0h1.6M374.5 352.0h1.6M236.4 378.6h1.6M389.8 394.1h1.6M262.7 392.5h1.6M339.0 339.9h1.6M379.5 377.4h1.6M240.5 401.6h1.6M303.4 354.8h1.6M368.7 320.1h1.6M264.7 395.8h1.6M241.5 321.1h1.6M348.2 336.6h1.6M248.4 367.8h1.6M290.0 379.3h1.6M228.7 416.3h1.6M217.3 399.6h1.6M323.5 347.4h1.6M260.3 436.3h1.6M342.5 353.2h1.6M233.9 416.3h1.6M236.9 341.0h1.6M336.7 391.0h1.6M337.6 330.1h1.6M273.8 444.0h1.6M337.1 364.1h1.6M271.1 330.1h1.6M257.0 396.9h1.6M261.1 408.0h1.6M272.5 318.6h1.6M222.3 321.8h1.6M333.0 424.2h1.6M311.9 417.0h1.6M311.9 338.1h1.6M255.6 365.4h1.6M313.9 423.1h1.6M361.2 368.6h1.6M358.9 357.3h1.6M317.1 405.7h1.6M337.9 410.8h1.6M338.1 350.4h1.6M364.5 412.8h1.6M361.4 353.6h1.6M283.9 361.4h1.6M362.1 385.0h1.6M326.2 429.0h1.6M279.6 384.8h1.6M300.5 357.8h1.6M304.2 393.3h1.6M229.5 391.7h1.6M276.7 343.5h1.6M332.4 426.1h1.6M335.1 424.9h1.6M245.8 370.2h1.6M255.2 327.0h1.6M331.5 336.1h1.6M361.1 383.1h1.6M292.3 427.7h1.6M270.4 430.1h1.6M339.5 402.8h1.6M357.5 383.1h1.6M279.9 407.1h1.6M245.2 411.1h1.6M233.9 436.0h1.6M379.6 355.6h1.6M273.9 405.9h1.6M381.7 380.0h1.6M293.3 383.6h1.6M234.0 427.3h1.6M328.3 411.1h1.6M360.4 334.2h1.6M266.4 407.0h1.6M246.0 388.6h1.6M304.7 356.5h1.6M228.9 391.6h1.6M234.1 413.9h1.6M366.5 335.7h1.6M329.1 393.9h1.6M319.7 356.4h1.6M258.3 438.6h1.6M349.6 331.4h1.6M251.9 365.7h1.6M291.2 333.8h1.6M371.6 407.9h1.6M269.4 368.0h1.6M244.7 348.8h1.6M258.5 431.2h1.6M309.7 327.3h1.6M371.9 358.8h1.6M221.4 413.9h1.6M345.8 419.9h1.6M235.2 433.1h1.6M244.5 398.5h1.6M388.0 408.5h1.6M283.0 400.9h1.6M306.1 401.0h1.6M315.8 435.8h1.6M347.0 367.8h1.6M346.7 405.3h1.6M259.7 406.1h1.6M314.8 340.2h1.6M313.4 387.4h1.6M305.7 422.9h1.6M337.5 432.8h1.6M244.2 428.7h1.6M365.7 319.0h1.6M289.8 430.2h1.6M264.1 437.6h1.6M225.7 422.8h1.6M387.1 396.2h1.6M303.5 387.0h1.6M283.4 358.1h1.6M342.6 369.6h1.6M320.7 324.7h1.6M388.7 442.5h1.6M263.1 413.7h1.6M310.5 416.5h1.6M249.6 424.2h1.6M297.5 396.8h1.6M327.8 322.9h1.6M304.8 410.5h1.6M241.9 373.5h1.6M308.2 343.5h1.6M351.6 350.7h1.6M297.4 389.7h1.6M243.6 420.3h1.6M215.1 338.1h1.6M350.7 401.7h1.6M340.1 431.8h1.6M337.4 419.7h1.6M250.9 438.7h1.6M339.0 365.9h1.6M353.9 349.5h1.6M357.9 407.1h1.6M239.7 430.2h1.6M342.0 376.6h1.6M354.3 378.8h1.6M372.2 323.1h1.6M228.8 406.0h1.6M302.1 383.2h1.6M270.5 404.0h1.6M388.1 377.3h1.6M351.2 369.8h1.6M296.8 384.1h1.6M361.1 361.6h1.6M222.8 417.0h1.6M368.9 437.9h1.6M277.5 340.3h1.6M228.1 350.0h1.6M312.1 358.5h1.6M290.4 406.9h1.6M297.0 364.3h1.6M243.7 425.4h1.6M219.4 384.6h1.6M304.2 435.1h1.6M281.4 402.2h1.6M304.8 420.7h1.6M306.5 439.4h1.6M311.8 333.7h1.6M379.1 329.9h1.6M223.4 365.1h1.6M329.6 397.6h1.6M230.4 397.4h1.6M337.7 407.1h1.6M318.3 361.1h1.6M227.1 333.0h1.6M238.4 379.3h1.6M327.9 387.0h1.6M332.9 362.9h1.6M247.5 393.2h1.6M359.6 365.7h1.6M242.5 435.1h1.6M234.2 401.9h1.6M284.1 373.6h1.6M371.3 345.3h1.6M357.6 435.3h1.6M361.3 444.4h1.6M352.6 328.2h1.6M271.4 329.8h1.6M265.2 377.6h1.6M286.5 433.3h1.6M381.8 408.8h1.6M306.2 429.4h1.6M228.4 323.5h1.6M370.1 386.1h1.6M365.3 404.7h1.6M310.7 366.9h1.6M345.3 438.9h1.6M307.5 348.4h1.6M285.8 355.9h1.6M361.0 361.0h1.6M311.0 369.2h1.6M228.1 435.3h1.6M331.6 411.1h1.6M271.2 440.0h1.6M297.1 368.8h1.6M223.7 405.9h1.6M328.8 400.5h1.6M237.5 375.5h1.6M294.7 321.6h1.6M220.1 385.1h1.6M234.1 405.1h1.6M254.0 420.4h1.6M271.4 364.8h1.6M277.2 411.3h1.6M319.6 430.2h1.6M270.1 433.9h1.6M253.7 426.0h1.6M359.7 408.3h1.6M256.0 328.9h1.6M272.6 375.9h1.6M385.1 348.9h1.6M334.0 373.6h1.6M230.3 444.3h1.6M255.8 332.4h1.6M239.2 323.4h1.6M321.8 319.6h1.6M344.2 344.9h1.6M267.2 426.0h1.6M239.8 418.3h1.6M386.4 423.8h1.6M265.5 339.8h1.6M361.7 327.6h1.6M279.7 397.0h1.6M358.7 393.7h1.6M301.4 358.3h1.6M338.0 411.1h1.6M357.4 374.8h1.6M348.8 368.4h1.6M242.2 395.5h1.6M223.9 337.0h1.6M389.4 363.1h1.6M380.6 441.2h1.6M273.2 431.4h1.6M377.2 421.6h1.6M266.2 376.8h1.6M333.8 408.9h1.6M375.0 375.9h1.6M341.5 325.3h1.6M365.0 356.6h1.6M340.8 319.9h1.6M285.8 379.4h1.6M300.0 384.6h1.6M388.0 426.2h1.6M281.0 325.5h1.6M250.8 422.2h1.6M339.9 385.9h1.6M344.4 344.4h1.6M298.4 377.7h1.6M273.3 378.7h1.6M236.6 391.1h1.6M328.1 387.5h1.6M352.6 426.6h1.6M327.2 375.8h1.6M279.1 361.7h1.6M377.2 326.4h1.6M239.8 366.9h1.6M247.5 401.6h1.6M383.8 405.3h1.6M310.8 384.1h1.6M282.2 382.3h1.6M339.5 360.4h1.6M251.6 342.8h1.6M219.8 390.4h1.6M334.3 341.5h1.6M315.8 378.1h1.6M239.1 335.3h1.6M349.6 435.7h1.6M266.4 393.6h1.6M290.7 385.7h1.6M271.5 385.0h1.6M242.0 350.8h1.6M244.2 384.2h1.6M322.9 391.4h1.6M269.5 399.7h1.6M290.4 437.0h1.6M277.0 335.5h1.6M290.8 357.5h1.6M359.5 412.3h1.6M381.6 379.3h1.6M348.8 401.2h1.6M230.2 328.8h1.6M371.8 438.6h1.6M281.5 326.0h1.6M251.6 423.7h1.6M279.3 411.7h1.6M338.1 355.0h1.6M229.9 341.7h1.6M260.9 349.0h1.6M301.3 406.3h1.6M305.1 351.9h1.6M373.3 320.9h1.6M355.4 372.4h1.6M347.3 318.4h1.6M220.3 440.2h1.6M298.4 381.5h1.6M223.4 430.4h1.6M276.7 437.5h1.6M233.5 364.7h1.6M364.8 434.5h1.6M369.3 325.8h1.6M350.8 425.8h1.6M367.8 410.2h1.6M246.5 382.4h1.6M240.5 321.3h1.6M315.9 398.9h1.6M368.3 327.5h1.6M362.4 381.6h1.6M344.9 354.5h1.6M299.9 411.0h1.6M273.6 322.7h1.6M268.1 405.4h1.6M227.9 445.1h1.6M305.3 387.4h1.6M230.6 415.8h1.6M314.2 369.6h1.6M349.2 335.1h1.6M255.9 430.5h1.6M245.9 439.5h1.6M358.5 444.7h1.6M357.0 396.5h1.6M251.7 420.6h1.6M351.5 439.1h1.6M345.1 325.8h1.6M362.7 410.8h1.6M313.4 324.4h1.6M253.1 326.4h1.6M219.6 375.6h1.6M219.8 407.7h1.6M225.2 439.6h1.6M349.9 371.4h1.6M328.1 338.1h1.6M384.0 393.0h1.6M261.8 330.2h1.6M261.2 350.0h1.6M327.3 363.6h1.6M266.3 370.7h1.6M333.6 436.9h1.6M350.0 335.6h1.6M375.2 329.4h1.6M221.0 408.7h1.6M315.8 336.0h1.6M379.7 416.6h1.6M253.5 415.7h1.6M240.8 384.6h1.6M297.3 373.3h1.6M228.2 410.1h1.6M286.1 433.8h1.6M220.9 356.9h1.6M364.3 383.3h1.6M235.6 430.1h1.6M239.6 387.3h1.6M305.8 385.5h1.6M259.0 348.0h1.6M299.7 389.4h1.6M372.4 404.7h1.6M224.1 417.3h1.6M331.2 368.8h1.6M381.8 413.6h1.6M306.1 349.8h1.6M238.8 413.7h1.6M341.4 429.0h1.6M216.8 401.5h1.6M294.8 324.6h1.6M281.2 436.4h1.6M252.7 432.7h1.6M318.3 412.9h1.6M282.8 429.4h1.6M294.0 343.8h1.6M329.6 398.8h1.6M291.4 349.5h1.6M323.1 342.9h1.6M350.1 336.7h1.6M344.7 378.8h1.6M322.3 429.4h1.6M286.0 392.7h1.6M321.8 429.5h1.6M385.3 441.4h1.6M370.5 400.9h1.6M318.0 331.7h1.6M280.4 344.3h1.6M256.4 377.0h1.6M280.7 328.2h1.6M276.9 400.9h1.6M325.5 425.2h1.6M322.7 368.1h1.6M325.1 439.3h1.6M299.1 370.6h1.6M378.0 416.7h1.6M300.1 365.2h1.6M243.6 407.7h1.6M368.7 367.5h1.6M355.6 438.6h1.6M254.3 413.8h1.6M248.9 439.7h1.6M295.2 332.9h1.6M263.9 356.0h1.6M388.8 379.0h1.6M230.6 348.5h1.6M349.7 395.6h1.6M252.4 360.0h1.6M336.7 415.6h1.6M243.7 424.9h1.6M265.0 373.4h1.6M281.7 424.0h1.6M265.7 385.0h1.6M295.5 384.5h1.6M336.6 428.8h1.6M293.5 416.3h1.6M276.9 365.4h1.6M245.9 358.6h1.6M331.7 348.3h1.6M274.1 332.3h1.6M286.3 366.9h1.6M260.3 318.0h1.6M232.1 412.6h1.6M318.0 433.1h1.6M232.5 442.1h1.6M352.7 362.7h1.6M292.9 362.6h1.6M379.1 392.9h1.6M233.9 355.4h1.6M276.8 381.3h1.6M305.2 426.0h1.6M267.6 419.2h1.6M336.4 396.1h1.6M336.4 428.4h1.6M355.0 396.4h1.6M226.1 330.6h1.6M228.3 322.1h1.6M246.4 368.3h1.6M290.5 386.3h1.6M308.2 405.3h1.6M279.9 417.2h1.6M365.4 338.3h1.6M338.4 374.2h1.6M364.1 374.7h1.6M247.2 397.5h1.6M282.3 442.6h1.6M242.6 409.7h1.6M332.2 424.4h1.6M323.1 332.6h1.6M348.7 384.4h1.6M222.4 440.0h1.6M229.2 331.4h1.6M292.3 431.3h1.6M336.3 419.8h1.6M310.5 372.5h1.6M238.7 431.5h1.6M281.8 392.1h1.6M258.3 350.2h1.6M345.7 337.5h1.6M292.6 401.2h1.6M323.2 381.9h1.6M250.1 436.5h1.6M380.7 417.6h1.6M368.5 440.8h1.6M224.5 347.4h1.6M278.0 328.1h1.6M320.2 405.1h1.6M319.5 428.7h1.6M315.8 398.8h1.6M347.0 416.7h1.6M381.8 323.0h1.6M318.9 343.8h1.6M357.7 422.4h1.6M349.0 323.5h1.6M240.8 340.1h1.6M387.3 427.7h1.6M361.4 409.6h1.6M318.3 414.4h1.6M294.2 435.5h1.6M336.6 368.3h1.6M257.8 394.6h1.6M299.3 353.2h1.6M239.7 432.5h1.6M380.5 359.4h1.6M215.9 328.7h1.6M328.3 397.1h1.6M349.3 412.6h1.6M323.2 404.1h1.6M366.8 387.6h1.6M332.2 374.3h1.6M256.5 353.8h1.6M227.9 441.6h1.6M351.6 378.8h1.6M359.1 442.9h1.6M215.0 410.1h1.6M284.7 378.4h1.6M236.1 348.5h1.6M340.6 419.7h1.6M224.4 376.1h1.6M297.4 347.0h1.6M216.7 407.0h1.6M310.5 428.4h1.6M236.7 401.8h1.6M292.9 343.0h1.6M285.5 353.4h1.6M252.8 349.0h1.6M359.4 319.5h1.6M257.6 331.3h1.6M356.6 434.3h1.6M269.8 369.3h1.6M288.7 363.7h1.6M241.5 347.1h1.6M369.6 342.7h1.6M368.5 418.8h1.6M371.7 390.4h1.6M265.3 365.7h1.6M300.7 326.1h1.6M351.6 363.1h1.6M346.7 433.5h1.6M314.0 350.2h1.6M378.3 347.2h1.6M307.4 396.4h1.6M216.0 412.0h1.6M388.1 327.7h1.6M342.0 358.3h1.6M268.2 318.6h1.6M281.9 394.1h1.6M255.9 402.7h1.6M257.0 356.7h1.6M292.4 396.8h1.6M331.9 326.2h1.6M281.7 407.7h1.6M253.2 369.2h1.6M370.5 398.8h1.6M302.2 423.1h1.6M339.1 387.0h1.6M332.7 333.8h1.6M303.0 357.2h1.6M303.1 338.6h1.6M230.4 397.8h1.6M251.2 394.9h1.6M243.7 319.4h1.6M346.3 413.6h1.6M346.7 388.7h1.6M220.1 409.1h1.6M278.2 384.5h1.6M347.7 359.6h1.6M230.9 389.0h1.6M245.9 399.3h1.6M320.0 418.8h1.6M294.0 325.2h1.6M317.1 377.5h1.6M252.5 438.8h1.6M358.3 407.8h1.6M225.2 377.3h1.6M360.0 344.2h1.6M323.8 397.6h1.6M227.9 431.7h1.6M303.7 372.1h1.6M316.0 397.2h1.6M255.7 422.9h1.6M280.6 434.3h1.6M363.0 410.4h1.6M276.2 407.4h1.6M225.8 434.2h1.6M246.9 340.7h1.6M322.8 361.6h1.6M309.1 366.3h1.6M294.9 332.0h1.6M269.8 387.3h1.6M285.0 404.8h1.6M253.9 383.4h1.6M260.2 418.2h1.6M265.2 420.9h1.6M286.3 380.0h1.6M373.0 326.5h1.6M380.5 323.6h1.6M236.4 332.7h1.6M302.6 394.5h1.6M362.9 383.5h1.6M239.0 347.3h1.6M216.2 365.4h1.6M318.1 374.4h1.6M272.8 381.3h1.6M225.7 386.4h1.6M271.7 385.5h1.6M280.5 417.6h1.6M292.3 327.7h1.6M281.9 398.2h1.6M247.5 399.4h1.6M264.1 435.5h1.6M301.0 439.8h1.6M244.7 357.1h1.6M293.7 346.5h1.6M279.5 355.9h1.6M352.0 355.4h1.6M360.2 423.3h1.6M274.4 346.2h1.6M316.9 437.6h1.6M230.1 428.8h1.6M303.1 375.9h1.6M256.1 444.0h1.6M254.2 346.5h1.6M359.8 337.0h1.6M331.0 319.3h1.6M303.2 322.8h1.6M327.8 381.0h1.6M251.7 344.6h1.6M241.1 442.9h1.6M303.3 323.2h1.6M244.1 343.2h1.6M323.8 343.9h1.6M215.0 444.0h1.6M312.2 418.1h1.6M216.5 332.8h1.6M319.4 385.0h1.6M376.0 442.0h1.6M218.9 378.6h1.6M220.2 394.4h1.6M383.8 363.7h1.6M266.8 381.6h1.6M330.6 426.9h1.6M226.4 341.0h1.6M283.3 344.4h1.6M346.1 364.7h1.6M268.0 359.0h1.6M269.6 441.9h1.6M341.1 377.6h1.6M218.3 390.0h1.6M253.4 420.6h1.6M356.3 318.2h1.6M216.9 427.0h1.6M308.6 341.0h1.6M246.3 401.8h1.6M325.1 359.9h1.6M244.1 341.9h1.6M332.6 331.7h1.6M288.7 414.6h1.6M343.5 407.2h1.6M217.0 361.7h1.6M285.5 398.4h1.6M229.7 393.5h1.6M385.8 441.7h1.6M291.8 372.3h1.6M250.5 378.3h1.6M343.4 367.6h1.6M275.7 407.6h1.6M349.4 318.1h1.6M371.3 388.0h1.6M357.7 413.1h1.6M348.6 333.0h1.6M237.3 383.6h1.6M254.8 318.5h1.6M310.8 418.9h1.6M252.7 440.0h1.6M236.9 439.5h1.6M343.7 357.2h1.6M308.8 385.3h1.6M280.7 416.5h1.6M339.5 416.0h1.6M274.4 429.1h1.6M227.9 360.6h1.6M322.8 379.7h1.6M231.2 416.0h1.6M356.7 396.6h1.6M248.5 422.0h1.6M337.0 425.4h1.6M306.1 381.6h1.6M296.4 403.6h1.6M272.1 339.7h1.6M296.7 332.3h1.6M248.9 420.7h1.6M218.9 424.0h1.6M334.5 432.2h1.6M335.1 391.3h1.6M247.0 336.7h1.6M364.8 423.7h1.6M251.3 441.3h1.6M331.0 418.3h1.6M348.7 360.4h1.6M285.0 351.9h1.6M243.0 391.2h1.6M280.1 423.1h1.6M269.9 331.6h1.6M222.0 380.8h1.6M386.2 431.1h1.6M329.9 416.2h1.6M219.6 417.3h1.6M319.0 346.1h1.6M220.8 405.6h1.6M227.0 382.4h1.6M220.0 398.9h1.6M221.5 440.2h1.6M349.2 324.7h1.6M216.7 440.3h1.6M359.8 418.2h1.6M298.7 421.5h1.6M344.3 423.5h1.6M264.1 328.7h1.6M297.6 393.7h1.6M374.0 386.7h1.6M254.0 321.5h1.6M245.1 439.2h1.6M215.7 401.4h1.6M378.6 380.5h1.6M366.7 397.2h1.6M286.0 366.6h1.6M225.0 344.9h1.6M226.5 406.0h1.6M328.0 318.0h1.6M289.7 323.0h1.6M320.7 358.7h1.6M319.7 338.2h1.6M375.3 402.6h1.6M345.5 425.0h1.6M291.2 324.4h1.6M315.5 394.5h1.6M346.7 389.8h1.6M306.9 343.5h1.6M246.9 331.1h1.6M275.4 411.5h1.6M226.0 374.8h1.6M320.3 329.7h1.6M233.8 444.0h1.6M349.8 335.2h1.6M387.3 374.9h1.6M250.0 429.9h1.6M283.3 348.4h1.6M306.3 442.3h1.6M258.3 394.6h1.6M308.5 321.1h1.6M233.0 357.3h1.6M347.5 407.7h1.6M231.9 397.8h1.6M355.8 339.7h1.6M304.0 391.1h1.6M319.2 345.3h1.6M335.8 390.0h1.6M384.2 345.3h1.6M252.6 335.1h1.6M331.4 371.1h1.6M309.9 405.3h1.6M243.0 399.8h1.6M234.3 406.8h1.6M365.5 339.5h1.6M317.9 335.8h1.6M341.8 371.6h1.6M247.7 361.5h1.6M338.5 422.2h1.6M265.6 405.0h1.6M282.0 400.2h1.6M304.9 344.7h1.6M242.1 319.5h1.6M378.9 351.2h1.6M332.7 429.5h1.6M283.1 417.1h1.6M255.8 403.0h1.6M320.3 385.8h1.6M357.5 330.1h1.6M283.5 409.9h1.6M334.8 332.0h1.6M280.8 321.9h1.6M301.6 322.6h1.6M374.9 398.6h1.6M363.6 329.1h1.6M287.3 337.7h1.6M284.3 392.5h1.6M360.1 442.6h1.6M275.3 420.2h1.6M360.6 435.1h1.6M258.5 417.2h1.6M226.1 393.0h1.6M374.7 350.6h1.6M276.3 394.4h1.6M275.6 402.6h1.6M234.3 329.6h1.6M226.0 343.0h1.6M309.8 348.3h1.6M276.4 432.2h1.6M341.5 435.9h1.6M375.8 356.6h1.6M244.8 391.3h1.6M354.7 340.3h1.6M280.5 328.4h1.6M359.3 356.4h1.6M293.1 408.8h1.6M223.9 373.7h1.6M273.6 431.3h1.6M227.4 403.1h1.6M311.4 348.6h1.6M362.6 437.9h1.6M275.1 442.6h1.6M314.8 407.2h1.6M286.9 345.8h1.6M221.8 402.5h1.6M294.7 376.8h1.6M296.0 426.0h1.6M247.5 426.4h1.6M302.7 364.9h1.6" stroke="#6252c8" stroke-width="1.2" opacity="0.8"/></g><path d="M216.5 320.3L216.5 329.4" stroke="#1e1eff" stroke-width="1.7"/><path d="M216.5 334.4L214.0 329.4L219.0 329.4Z" fill="#1e1eff"/><path d="M216.5 320.3L211.7 315.2" stroke="#e8141e" stroke-width="1.7"/><path d="M208.3 311.5L213.5 313.5L209.9 316.9Z" fill="#e8141e"/><path d="M216.5 320.3L228.1 316.3" stroke="#22dd22" stroke-width="1.7"/><path d="M232.8 314.7L228.9 318.7L227.3 314.0Z" fill="#22dd22"/><path d="M216.5 364.0L216.5 352.5" stroke="#1e1eff" stroke-width="1.7"/><path d="M216.5 347.5L219.0 352.5L214.0 352.5Z" fill="#1e1eff"/><path d="M218.0 367.0L226.3 376.4" stroke="#e8141e" stroke-width="1.7"/><path d="M229.6 380.2L224.4 378.1L228.2 374.8Z" fill="#e8141e"/><path d="M228.0 359.0L226.1 352.3" stroke="#e8141e" stroke-width="1.7"/><path d="M224.7 347.5L228.5 351.6L223.7 353.0Z" fill="#e8141e"/><path d="M228.0 359.0L238.1 354.4" stroke="#22dd22" stroke-width="1.7"/><path d="M242.7 352.4L239.2 356.7L237.1 352.2Z" fill="#22dd22"/><path d="M257.4 349.0L255.7 344.0" stroke="#e8141e" stroke-width="1.7"/><path d="M254.0 339.3L258.0 343.2L253.3 344.8Z" fill="#e8141e"/><path d="M257.4 349.0L261.0 349.4" stroke="#22dd22" stroke-width="1.7"/><path d="M266.0 350.0L260.7 351.9L261.3 346.9Z" fill="#22dd22"/><path d="M285.2 334.4L283.6 329.4" stroke="#e8141e" stroke-width="1.7"/><path d="M282.0 324.6L285.9 328.6L281.2 330.1Z" fill="#e8141e"/><path d="M285.2 334.4L295.1 332.1" stroke="#22dd22" stroke-width="1.7"/><path d="M300.0 331.0L295.7 334.6L294.6 329.7Z" fill="#22dd22"/><path d="M309.8 321.3L306.4 317.0" stroke="#e8141e" stroke-width="1.7"/><path d="M303.3 313.1L308.4 315.5L304.4 318.6Z" fill="#e8141e"/><path d="M309.8 321.3L319.7 323.5" stroke="#22dd22" stroke-width="1.7"/><path d="M324.6 324.6L319.2 326.0L320.3 321.1Z" fill="#22dd22"/><path d="M313.2 294.1L309.0 303.7" stroke="#1e1eff" stroke-width="1.7"/><path d="M307.0 308.3L306.7 302.7L311.3 304.7Z" fill="#1e1eff"/><path d="M313.2 294.1L310.0 290.0" stroke="#e8141e" stroke-width="1.7"/><path d="M307.0 286.0L312.0 288.5L308.1 291.5Z" fill="#e8141e"/><path d="M313.2 294.1L322.4 294.9" stroke="#22dd22" stroke-width="1.7"/><path d="M327.4 295.3L322.2 297.4L322.6 292.4Z" fill="#22dd22"/><path d="M283.6 421.2L279.2 412.5" stroke="#e8141e" stroke-width="1.7"/><path d="M277.0 408.0L281.5 411.4L277.0 413.6Z" fill="#e8141e"/><path d="M283.6 421.2L295.7 414.0" stroke="#22dd22" stroke-width="1.7"/><path d="M300.0 411.4L297.0 416.1L294.4 411.8Z" fill="#22dd22"/><path d="M311.5 413.0L308.3 404.7" stroke="#e8141e" stroke-width="1.7"/><path d="M306.5 400.0L310.6 403.8L306.0 405.6Z" fill="#e8141e"/><path d="M311.5 413.0L320.0 413.0" stroke="#22dd22" stroke-width="1.7"/><path d="M325.0 413.0L320.0 415.5L320.0 410.5Z" fill="#22dd22"/><path d="M349.0 398.0L343.9 390.9" stroke="#e8141e" stroke-width="1.7"/><path d="M341.0 386.8L345.9 389.4L341.9 392.3Z" fill="#e8141e"/><path d="M349.0 398.0L360.8 393.5" stroke="#22dd22" stroke-width="1.7"/><path d="M365.5 391.7L361.7 395.8L359.9 391.1Z" fill="#22dd22"/><path d="M373.7 377.0L369.0 372.3" stroke="#e8141e" stroke-width="1.7"/><path d="M365.5 368.8L370.8 370.6L367.3 374.1Z" fill="#e8141e"/><path d="M373.7 377.0L382.1 380.1" stroke="#22dd22" stroke-width="1.7"/><path d="M386.8 381.9L381.2 382.5L383.0 377.8Z" fill="#22dd22"/></svg><svg class="abs" style="left:0;top:0" width="200" height="446"><path d="M14.9 59.910000000000004 V361.66 M14.9 361.66 H22 M24.5 71.22 V85.84 M35 72.53 V78.53 M35 78.53 H40 M35 96.84 V238.56 M35 103.15 H42 M35 115.46000000000001 H42 M35 127.77000000000001 H42 M35 140.08 H42 M35 152.39000000000001 H42 M35 164.70000000000002 H42 M35 177.01 H42 M35 189.32 H42 M35 201.63 H42 M35 213.94 H42 M35 226.25 H42 M35 238.56 H42 M25.3 293.8 V349.35 M25.3 300.11 H32 M25.3 312.42 H32 M25.3 324.73 H32 M25.3 337.04 H32 M25.3 349.35 H32" stroke="#9494c4" stroke-width="0.7" fill="none"/><path d="M0.29999999999999893 39.0 L8.499999999999998 39.0 L4.399999999999999 44.5 Z" fill="#fff"/><rect x="14.399999999999999" y="36.6" width="7" height="10" fill="#dfe9f5"/><rect x="18.4" y="36.6" width="3" height="10" fill="#7fa8d8"/><path d="M10.4 51.31 L18.6 51.31 L14.5 56.81 Z" fill="#fff"/><path d="M29.5 55.910000000000004 L29.5 47.910000000000004" stroke="#4040ff" stroke-width="1.2"/><path d="M29.5 55.910000000000004 L23.5 57.910000000000004" stroke="#e02020" stroke-width="1.2"/><path d="M29.5 55.910000000000004 L33.5 58.910000000000004" stroke="#20c020" stroke-width="1.2"/><path d="M20.699999999999996 63.62 L28.9 63.62 L24.799999999999997 69.12 Z" fill="#fff"/><path d="M34.8 62.22 L41.8 62.22 L36.8 68.22 L41.8 70.22" stroke="#e07020" stroke-width="1.8" fill="none"/><circle cx="47.0" cy="77.53" r="2.5" fill="#50e050"/><path d="M48.0 78.53 L54.0 83.53" stroke="#b0b0c0" stroke-width="2"/><path d="M20.699999999999996 88.24000000000001 L28.9 88.24000000000001 L24.799999999999997 93.74000000000001 Z" fill="#fff"/><path d="M40.8 92.84 L40.8 84.84" stroke="#4040ff" stroke-width="1.2"/><path d="M40.8 92.84 L33.8 93.84" stroke="#e02020" stroke-width="1.2"/><path d="M40.8 92.84 L43.8 95.84" stroke="#20c020" stroke-width="1.2"/><circle cx="36.8" cy="89.84" r="2.5" fill="#40d040"/><path d="M45.0 101.15 L48.0 98.15 L54.0 98.15 L54.0 105.15 L51.0 108.15 L45.0 108.15 Z" fill="#5aaaf0"/><path d="M45.0 101.15 L51.0 101.15 L54.0 98.15" stroke="#d0ecff" fill="none" stroke-width="0.8"/><circle cx="46.5" cy="116.46000000000001" r="3.9" fill="#d42a2a"/><circle cx="46.5" cy="116.46000000000001" r="2" fill="#f2b8b8"/><circle cx="46.5" cy="116.46000000000001" r="1" fill="#c02020"/><path d="M47.0 115.46000000000001 L52.0 109.96000000000001" stroke="#80c040" stroke-width="1"/><circle cx="46.5" cy="128.77" r="3.9" fill="#d42a2a"/><circle cx="46.5" cy="128.77" r="2" fill="#f2b8b8"/><circle cx="46.5" cy="128.77" r="1" fill="#c02020"/><path d="M47.0 127.77000000000001 L52.0 122.27000000000001" stroke="#80c040" stroke-width="1"/><circle cx="46.5" cy="141.08" r="3.9" fill="#d42a2a"/><circle cx="46.5" cy="141.08" r="2" fill="#f2b8b8"/><circle cx="46.5" cy="141.08" r="1" fill="#c02020"/><path d="M47.0 140.08 L52.0 134.58" stroke="#80c040" stroke-width="1"/><circle cx="46.5" cy="153.39000000000001" r="3.9" fill="#d42a2a"/><circle cx="46.5" cy="153.39000000000001" r="2" fill="#f2b8b8"/><circle cx="46.5" cy="153.39000000000001" r="1" fill="#c02020"/><path d="M47.0 152.39000000000001 L52.0 146.89000000000001" stroke="#80c040" stroke-width="1"/><circle cx="46.5" cy="165.70000000000002" r="3.9" fill="#d42a2a"/><circle cx="46.5" cy="165.70000000000002" r="2" fill="#f2b8b8"/><circle cx="46.5" cy="165.70000000000002" r="1" fill="#c02020"/><path d="M47.0 164.70000000000002 L52.0 159.20000000000002" stroke="#80c040" stroke-width="1"/><circle cx="46.5" cy="178.01" r="3.9" fill="#d42a2a"/><circle cx="46.5" cy="178.01" r="2" fill="#f2b8b8"/><circle cx="46.5" cy="178.01" r="1" fill="#c02020"/><path d="M47.0 177.01 L52.0 171.51" stroke="#80c040" stroke-width="1"/><circle cx="46.5" cy="190.32" r="3.9" fill="#d42a2a"/><circle cx="46.5" cy="190.32" r="2" fill="#f2b8b8"/><circle cx="46.5" cy="190.32" r="1" fill="#c02020"/><path d="M47.0 189.32 L52.0 183.82" stroke="#80c040" stroke-width="1"/><circle cx="46.5" cy="202.63" r="3.9" fill="#d42a2a"/><circle cx="46.5" cy="202.63" r="2" fill="#f2b8b8"/><circle cx="46.5" cy="202.63" r="1" fill="#c02020"/><path d="M47.0 201.63 L52.0 196.13" stroke="#80c040" stroke-width="1"/><circle cx="46.5" cy="214.94" r="3.9" fill="#d42a2a"/><circle cx="46.5" cy="214.94" r="2" fill="#f2b8b8"/><circle cx="46.5" cy="214.94" r="1" fill="#c02020"/><path d="M47.0 213.94 L52.0 208.44" stroke="#80c040" stroke-width="1"/><circle cx="46.5" cy="227.25" r="3.9" fill="#d42a2a"/><circle cx="46.5" cy="227.25" r="2" fill="#f2b8b8"/><circle cx="46.5" cy="227.25" r="1" fill="#c02020"/><path d="M47.0 226.25 L52.0 220.75" stroke="#80c040" stroke-width="1"/><circle cx="46.5" cy="239.56" r="3.9" fill="#d42a2a"/><circle cx="46.5" cy="239.56" r="2" fill="#f2b8b8"/><circle cx="46.5" cy="239.56" r="1" fill="#c02020"/><path d="M47.0 238.56 L52.0 233.06" stroke="#80c040" stroke-width="1"/><path d="M12.9 246.87 L18.4 250.87 L12.9 254.87 Z" fill="#fff"/><path d="M25.0 245.57 h6 l3 3 v7.8 h-9 z" fill="#e4e4f2" stroke="#b8b8d0" stroke-width="0.5"/><path d="M12.9 259.18 L18.4 263.18 L12.9 267.18 Z" fill="#fff"/><path d="M25.0 257.88 h6 l3 3 v7.8 h-9 z" fill="#e4e4f2" stroke="#b8b8d0" stroke-width="0.5"/><path d="M12.9 271.49 L18.4 275.49 L12.9 279.49 Z" fill="#fff"/><path d="M25.0 270.19 h6 l3 3 v7.8 h-9 z" fill="#e4e4f2" stroke="#b8b8d0" stroke-width="0.5"/><path d="M10.4 285.2 L18.6 285.2 L14.5 290.7 Z" fill="#fff"/><path d="M25.0 282.5 h6 l3 3 v7.8 h-9 z" fill="#e4e4f2" stroke="#b8b8d0" stroke-width="0.5"/><path d="M35.8 296.31 h8 M37.8 298.61 h6 M37.8 300.91 h6 M35.8 303.31 h8" stroke="#d8d890" stroke-width="1.3"/><path d="M33.8 297.61 l2.5 2 l-2.5 2" stroke="#707070" stroke-width="1" fill="none"/><path d="M35.8 308.62 h8 M37.8 310.92 h6 M37.8 313.22 h6 M35.8 315.62 h8" stroke="#d8d890" stroke-width="1.3"/><path d="M33.8 309.92 l2.5 2 l-2.5 2" stroke="#707070" stroke-width="1" fill="none"/><path d="M35.8 320.93 h8 M37.8 323.23 h6 M37.8 325.53000000000003 h6 M35.8 327.93 h8" stroke="#d8d890" stroke-width="1.3"/><path d="M33.8 322.23 l2.5 2 l-2.5 2" stroke="#707070" stroke-width="1" fill="none"/><path d="M35.8 333.24 h8 M37.8 335.54 h6 M37.8 337.84000000000003 h6 M35.8 340.24 h8" stroke="#d8d890" stroke-width="1.3"/><path d="M33.8 334.54 l2.5 2 l-2.5 2" stroke="#707070" stroke-width="1" fill="none"/><path d="M35.8 345.55 h8 M37.8 347.85 h6 M37.8 350.15000000000003 h6 M35.8 352.55 h8" stroke="#d8d890" stroke-width="1.3"/><path d="M33.8 346.85 l2.5 2 l-2.5 2" stroke="#707070" stroke-width="1" fill="none"/><path d="M25.5 357.16 h5 q2 0 2 2 v3 h-5 q-2 0 -2 2 v1.5 h-1.5 q-1.5 0 -1.5 -2 v-4.5 q0 -2 3 -2z" fill="#4a7ab8"/><path d="M31.5 366.66 h-5 q-2 0 -2 -2 v-3 h5 q2 0 2 -2 v-1.5 h1.5 q1.5 0 1.5 2 v4.5 q0 2 -3 2z" fill="#f0d048"/></svg><div class="row" style="left:25.4px;top:35.60px">Painting Test</div><div class="row" style="left:35.5px;top:47.91px">UR10 Base</div><div class="row" style="left:45.8px;top:60.22px">UR10</div><div class="row" style="left:56.0px;top:72.53px">Paint gun</div><div class="row" style="left:45.8px;top:84.84px">Frame 2</div><div class="row" style="left:56.0px;top:97.15px">Object Inspection</div><div class="row" style="left:56.0px;top:109.46px">Home</div><div class="row" style="left:56.0px;top:121.77px">Approach</div><div class="row" style="left:56.0px;top:134.08px">Top Paint 1</div><div class="row" style="left:56.0px;top:146.39px">Top Paint 2</div><div class="row" style="left:56.0px;top:158.70px">Top Paint 3</div><div class="row" style="left:56.0px;top:171.01px">Top Paint 4</div><div class="row" style="left:56.0px;top:183.32px">Top Paint 5</div><div class="row" style="left:56.0px;top:195.63px">Top Paint 6</div><div class="row" style="left:56.0px;top:207.94px">Top Paint 7</div><div class="row" style="left:56.0px;top:220.25px">Top Paint 8</div><div class="row" style="left:56.0px;top:232.56px">Retract</div><div class="row" style="left:35.5px;top:244.87px">ApproachMove</div><div class="row" style="left:35.5px;top:257.18px">PaintTop</div><div class="row" style="left:35.5px;top:269.49px">Retract</div><div class="row" style="left:35.5px;top:281.80px">MainProg</div><div class="row" style="left:45.8px;top:294.11px">Call ApproachMove</div><div class="row" style="left:45.8px;top:306.42px">Call SprayOn(1)</div><div class="row" style="left:45.8px;top:318.73px">Call PaintTop</div><div class="row" style="left:45.8px;top:331.04px">Call SprayOn(0)</div><div class="row" style="left:45.8px;top:343.35px">Call Retract</div><div class="row" style="left:35.5px;top:355.66px">SprayOn</div><div id="ml" class="abs"><div class="abs" style="left:0;top:0;width:1.5px;height:446px;background:#4a7aa8"></div><div class="abs" style="left:1.5px;top:0;width:276px;height:41px;background:linear-gradient(#e6e6e6,#d6d6d6)"></div><div class="abs" style="left:1.5px;top:40.5px;width:276px;height:8.3px;background:#cdcdcd;border-top:1px solid #e2e2e2"></div><div class="abs" style="left:52px;top:0;width:225px;height:1.6px;background:#0c2a5a"></div><div class="abs" style="left:0;top:0;width:3px;height:1.5px;background:#0c2a5a"></div><svg class="abs" style="left:0;top:0" width="280" height="49"><defs><linearGradient id="yp" x1="0" y1="0" x2="0" y2="1"><stop offset="0" stop-color="#fff2a0"/><stop offset="1" stop-color="#e8b820"/></linearGradient></defs><path d="M113.70000000000005 3V48.5" stroke="#c0c0c0" stroke-width="0.8"/><path d="M114.50000000000004 3V48.5" stroke="#ececec" stroke-width="0.6"/><path d="M153.39999999999998 3V48.5" stroke="#c0c0c0" stroke-width="0.8"/><path d="M154.2 3V48.5" stroke="#ececec" stroke-width="0.6"/><path d="M232.79999999999995 3V48.5" stroke="#c0c0c0" stroke-width="0.8"/><path d="M233.59999999999997 3V48.5" stroke="#ececec" stroke-width="0.6"/><path d="M270.29999999999995 3V48.5" stroke="#c0c0c0" stroke-width="0.8"/><path d="M271.09999999999997 3V48.5" stroke="#ececec" stroke-width="0.6"/><path d="M10.800000000000011 6.2h4v3.6h3.6v4h-3.6v3.6h-4v-3.6h-3.6v-4h3.6z" fill="url(#yp)" stroke="#c89a10" stroke-width="0.6"/><ellipse cx="12.800000000000011" cy="18.5" rx="5" ry="0.8" fill="#bcbcbc"/><path d="M27.399999999999977 9 h4 l1 1 h6.2 v6.3 h-11.2z" fill="#f6e6a0" stroke="#c8a850" stroke-width="0.6"/><rect x="48" y="6.2" width="11.9" height="11.2" rx="1" fill="#5e5e5e"/><rect x="50" y="7" width="7.9" height="4.5" fill="#f4f4f4"/><rect x="51" y="13.5" width="6" height="3.9" fill="#e0e0e0"/><path d="M67 5.5 h3 l1 1 h4 v6 h-8z" fill="#f0d890" stroke="#b09040" stroke-width="0.5"/><circle cx="73.5" cy="11.5" r="2" fill="#6a9ad0"/><rect x="67.5" y="17.6" width="7.8" height="7.8" fill="#e8e8e8" stroke="#b0b0b0" stroke-width="0.6"/><rect x="67.5" y="30" width="8" height="6" rx="1" fill="#9aa8b8"/><rect x="68.5" y="28.5" width="6" height="3" fill="#e8e8f0"/><path d="M118.29999999999995 9.8 l4 -3.3 v2 h4.5 v2.6 h-4.5 v2 z" fill="#6aaae0"/><path d="M138.5 9.8 l-4 -3.3 v2 h-4.5 v2.6 h4.5 v2 z" fill="#d8d8d8"/><path d="M126.79999999999995 21.5 l-4 -3.3 v2 h-4.5 v2.6 h4.5 v2 z" fill="#5a9ad8"/><circle cx="122" cy="32.5" r="2.8" fill="#cfe0f0" stroke="#5080b0" stroke-width="0.8"/><path d="M124 34.5 l2.5 2.5" stroke="#304860" stroke-width="1.2"/><rect x="185.5" y="6" width="7.5" height="6" fill="#d8e4a0" stroke="#98a860" stroke-width="0.5"/><circle cx="192.5" cy="12" r="2" fill="#f0c030"/><text x="198.5" y="12.5" font-family="Liberation Serif" font-style="italic" font-size="8" fill="#222">fx</text><rect x="210.5" y="5.5" width="8" height="8" fill="#f4f8fc" stroke="#8898b0" stroke-width="0.5"/><path d="M211.5 12 l3 -5 l3 5" stroke="#3a6ab0" stroke-width="1" fill="none"/><text x="185.5" y="25" font-family="Liberation Sans" font-weight="bold" font-size="7.5" fill="#40b040">%</text><text x="198.5" y="25" font-family="Liberation Sans" font-weight="bold" font-size="7.5" fill="#60b060">%</text><rect x="201" y="21" width="4" height="4" fill="#4a80c0"/><text x="210.5" y="25" font-family="Liberation Sans" font-weight="bold" font-size="7.5" fill="#90c090">%</text><rect x="185.5" y="30.5" width="7.5" height="8" fill="#a8e090" stroke="#50a040" stroke-width="0.5"/><path d="M188 32 h3 M188 34.5 h3 M188 37 h3" stroke="#308030" stroke-width="0.7"/><rect x="200" y="30.5" width="6" height="8" fill="#f0f4f0" stroke="#a0a0a0" stroke-width="0.5"/><path d="M197.5 34.5 h5" stroke="#40a040" stroke-width="1.4"/><rect x="211" y="30.5" width="6" height="8" fill="#f0f4f0" stroke="#a0a0a0" stroke-width="0.5"/><path d="M214 34.5 h5" stroke="#40a040" stroke-width="1.4"/><rect x="245.29999999999995" y="5.5" width="11.7" height="11.7" rx="1" fill="#f4f4f4" stroke="#b8b8b8" stroke-width="0.6"/><rect x="246.5" y="8" width="2.2" height="2" fill="#e03030"/><rect x="246.5" y="12" width="2.2" height="2" fill="#e03030"/><path d="M11.50000000000001 33.1 h3.6 l-1.8 2z" fill="#1a1a1a"/><path d="M31.400000000000045 33.1 h3.6 l-1.8 2z" fill="#1a1a1a"/><path d="M52.09999999999998 33.1 h3.6 l-1.8 2z" fill="#1a1a1a"/><path d="M105.40000000000005 20.6 h3.6 l-1.8 2z" fill="#1a1a1a"/><path d="M94.40000000000005 33.1 h3.6 l-1.8 2z" fill="#1a1a1a"/><path d="M147.09999999999997 20.6 h3.6 l-1.8 2z" fill="#1a1a1a"/><path d="M144.49999999999994 33.1 h3.6 l-1.8 2z" fill="#1a1a1a"/><path d="M223.95 8.1 h3.6 l-1.8 2z" fill="#1a1a1a"/><path d="M249.7 32.7 h3.6 l-1.8 2z" fill="#1a1a1a"/></svg><div style="position:absolute;font-size:5.6px;letter-spacing:-0.08px;color:#101018;white-space:nowrap;line-height:8px;left:6.600000000000023px;top:23.2px;">New</div><div style="position:absolute;font-size:5.6px;letter-spacing:-0.08px;color:#101018;white-space:nowrap;line-height:8px;left:26.799999999999955px;top:23.2px;">Open</div><div style="position:absolute;font-size:5.6px;letter-spacing:-0.08px;color:#101018;white-space:nowrap;line-height:8px;left:47px;top:23.2px;">Save</div><div style="position:absolute;font-size:5.6px;letter-spacing:-0.08px;color:#101018;white-space:nowrap;line-height:8px;left:78px;top:5.4px;">Find Files</div><div style="position:absolute;font-size:5.6px;letter-spacing:-0.08px;color:#101018;white-space:nowrap;line-height:8px;left:78px;top:17.5px;">Compare</div><div style="position:absolute;font-size:5.6px;letter-spacing:-0.08px;color:#101018;white-space:nowrap;line-height:8px;left:78px;top:30.1px;">Print</div><div style="position:absolute;font-size:5.6px;letter-spacing:-0.08px;color:#101018;white-space:nowrap;line-height:8px;left:128px;top:17.5px;">Go To</div><div style="position:absolute;font-size:5.6px;letter-spacing:-0.08px;color:#101018;white-space:nowrap;line-height:8px;left:128px;top:30.1px;">Find</div><div style="position:absolute;font-size:5.6px;letter-spacing:-0.08px;color:#101018;white-space:nowrap;line-height:8px;left:149px;top:5px;width:32.200000000000045px;text-align:right">Insert</div><div style="position:absolute;font-size:5.6px;letter-spacing:-0.08px;color:#101018;white-space:nowrap;line-height:8px;left:149px;top:17px;width:32.200000000000045px;text-align:right">Comment</div><div style="position:absolute;font-size:5.6px;letter-spacing:-0.08px;color:#101018;white-space:nowrap;line-height:8px;left:149px;top:29.6px;width:32.200000000000045px;text-align:right">Indent</div><div style="position:absolute;font-size:5.6px;letter-spacing:-0.08px;color:#101018;white-space:nowrap;line-height:8px;left:236.70000000000005px;top:22.9px;">Breakpoints</div><div style="position:absolute;font-size:4.7px;color:#a0a0a0;white-space:nowrap;line-height:6px;left:51.5px;top:42px">FILE</div><div style="position:absolute;font-size:4.7px;color:#a0a0a0;white-space:nowrap;line-height:6px;left:121.5px;top:42px">NAVIGATE</div><div style="position:absolute;font-size:4.7px;color:#a0a0a0;white-space:nowrap;line-height:6px;left:186.70000000000005px;top:42px">EDIT</div><div style="position:absolute;font-size:4.7px;color:#a0a0a0;white-space:nowrap;line-height:6px;left:233.60000000000002px;top:42px">BREAKPOINTS</div><div id="gut" class="abs"></div><div class="abs" style="left:20px;top:48.8px;width:257px;height:398px;background:#151515"></div><div class="num" style="top:49.90px">1</div><div class="abs" style="left:14.7px;top:54.40px;width:3.9px;height:1px;background:#3a3a3a"></div><div class="num" style="top:59.14px">2</div><div class="abs" style="left:14.7px;top:63.64px;width:3.9px;height:1px;background:#3a3a3a"></div><div class="num" style="top:68.37px">3</div><div class="abs" style="left:14.7px;top:72.87px;width:3.9px;height:1px;background:#3a3a3a"></div><div class="num" style="top:77.61px">4</div><div class="num" style="top:86.84px">5</div><div class="num" style="top:96.08px">6</div><div class="abs" style="left:14.7px;top:100.58px;width:3.9px;height:1px;background:#3a3a3a"></div><div class="num" style="top:105.32px">7</div><div class="num" style="top:114.55px">8</div><div class="num" style="top:123.79px">9</div><div class="abs" style="left:14.7px;top:128.29px;width:3.9px;height:1px;background:#3a3a3a"></div><div class="num" style="top:133.02px">10</div><div class="num" style="top:142.26px">11</div><div class="num" style="top:151.50px">12</div><div class="num" style="top:160.73px">13</div><div class="abs" style="left:14.7px;top:165.23px;width:3.9px;height:1px;background:#3a3a3a"></div><div class="num" style="top:169.97px">14</div><div class="num" style="top:179.20px">15</div><div class="num" style="top:188.44px">16</div><div class="abs" style="left:14.7px;top:192.94px;width:3.9px;height:1px;background:#3a3a3a"></div><div class="num" style="top:197.68px">17</div><div class="abs" style="left:14.7px;top:202.18px;width:3.9px;height:1px;background:#3a3a3a"></div><div class="num" style="top:206.91px">18</div><div class="abs" style="left:14.7px;top:211.41px;width:3.9px;height:1px;background:#3a3a3a"></div><div class="num" style="top:216.15px">19</div><div class="abs" style="left:14.7px;top:220.65px;width:3.9px;height:1px;background:#3a3a3a"></div><div class="num" style="top:225.38px">20</div><div class="abs" style="left:14.7px;top:229.88px;width:3.9px;height:1px;background:#3a3a3a"></div><div class="num" style="top:234.62px">21</div><div class="abs" style="left:14.7px;top:239.12px;width:3.9px;height:1px;background:#3a3a3a"></div><div class="num" style="top:243.86px">22</div><div class="num" style="top:253.09px">23</div><div class="num" style="top:262.33px">24</div><div class="abs" style="left:14.7px;top:266.83px;width:3.9px;height:1px;background:#3a3a3a"></div><div class="num" style="top:271.56px">25</div><div class="num" style="top:280.80px">26</div><div class="abs" style="left:28px;top:199.6px;width:5.5px;height:5.5px;border:0.8px solid #8a8a8a"></div><div class="abs" style="left:29.2px;top:202px;width:3px;height:0.8px;background:#8a8a8a"></div><div class="abs" style="left:30.4px;top:205px;width:0.8px;height:34px;background:#8a8a8a"></div><div class="abs" style="left:30.4px;top:238.8px;width:3px;height:0.8px;background:#8a8a8a"></div><div id="code" class="abs">clc
clear
close

<span class="c">% Start the RoboDK API for Matlab:</span>
RDK = Robolink();

<span class="c">% Get the robot item:</span>
robot = RDK.Item(<span class="s">''</span>, RDK.ITEM_TYPE_ROBOT);

<span class="c">% Get the robot position (simulated or real if we are</span>
<span class="c">% connected to the robot)</span>
poseref = robot.Pose();

<span class="c">% Draw a polygon around the retrieved robot position:</span>
nsides = 100;
<span class="k">for</span> i=0:nsides
    ang = i*2*pi/nsides; <span class="c">% angle: 0, 60, 120, ...</span>
    posei = poseref*rotz(ang)*transl(200,0,0)*rotz(-ang);
    robot.MoveL(posei);
<span class="k">end</span>

<span class="c">% Move back to the original position:</span>
robot.MoveL(poseref);
</div></div>
</body></html>
